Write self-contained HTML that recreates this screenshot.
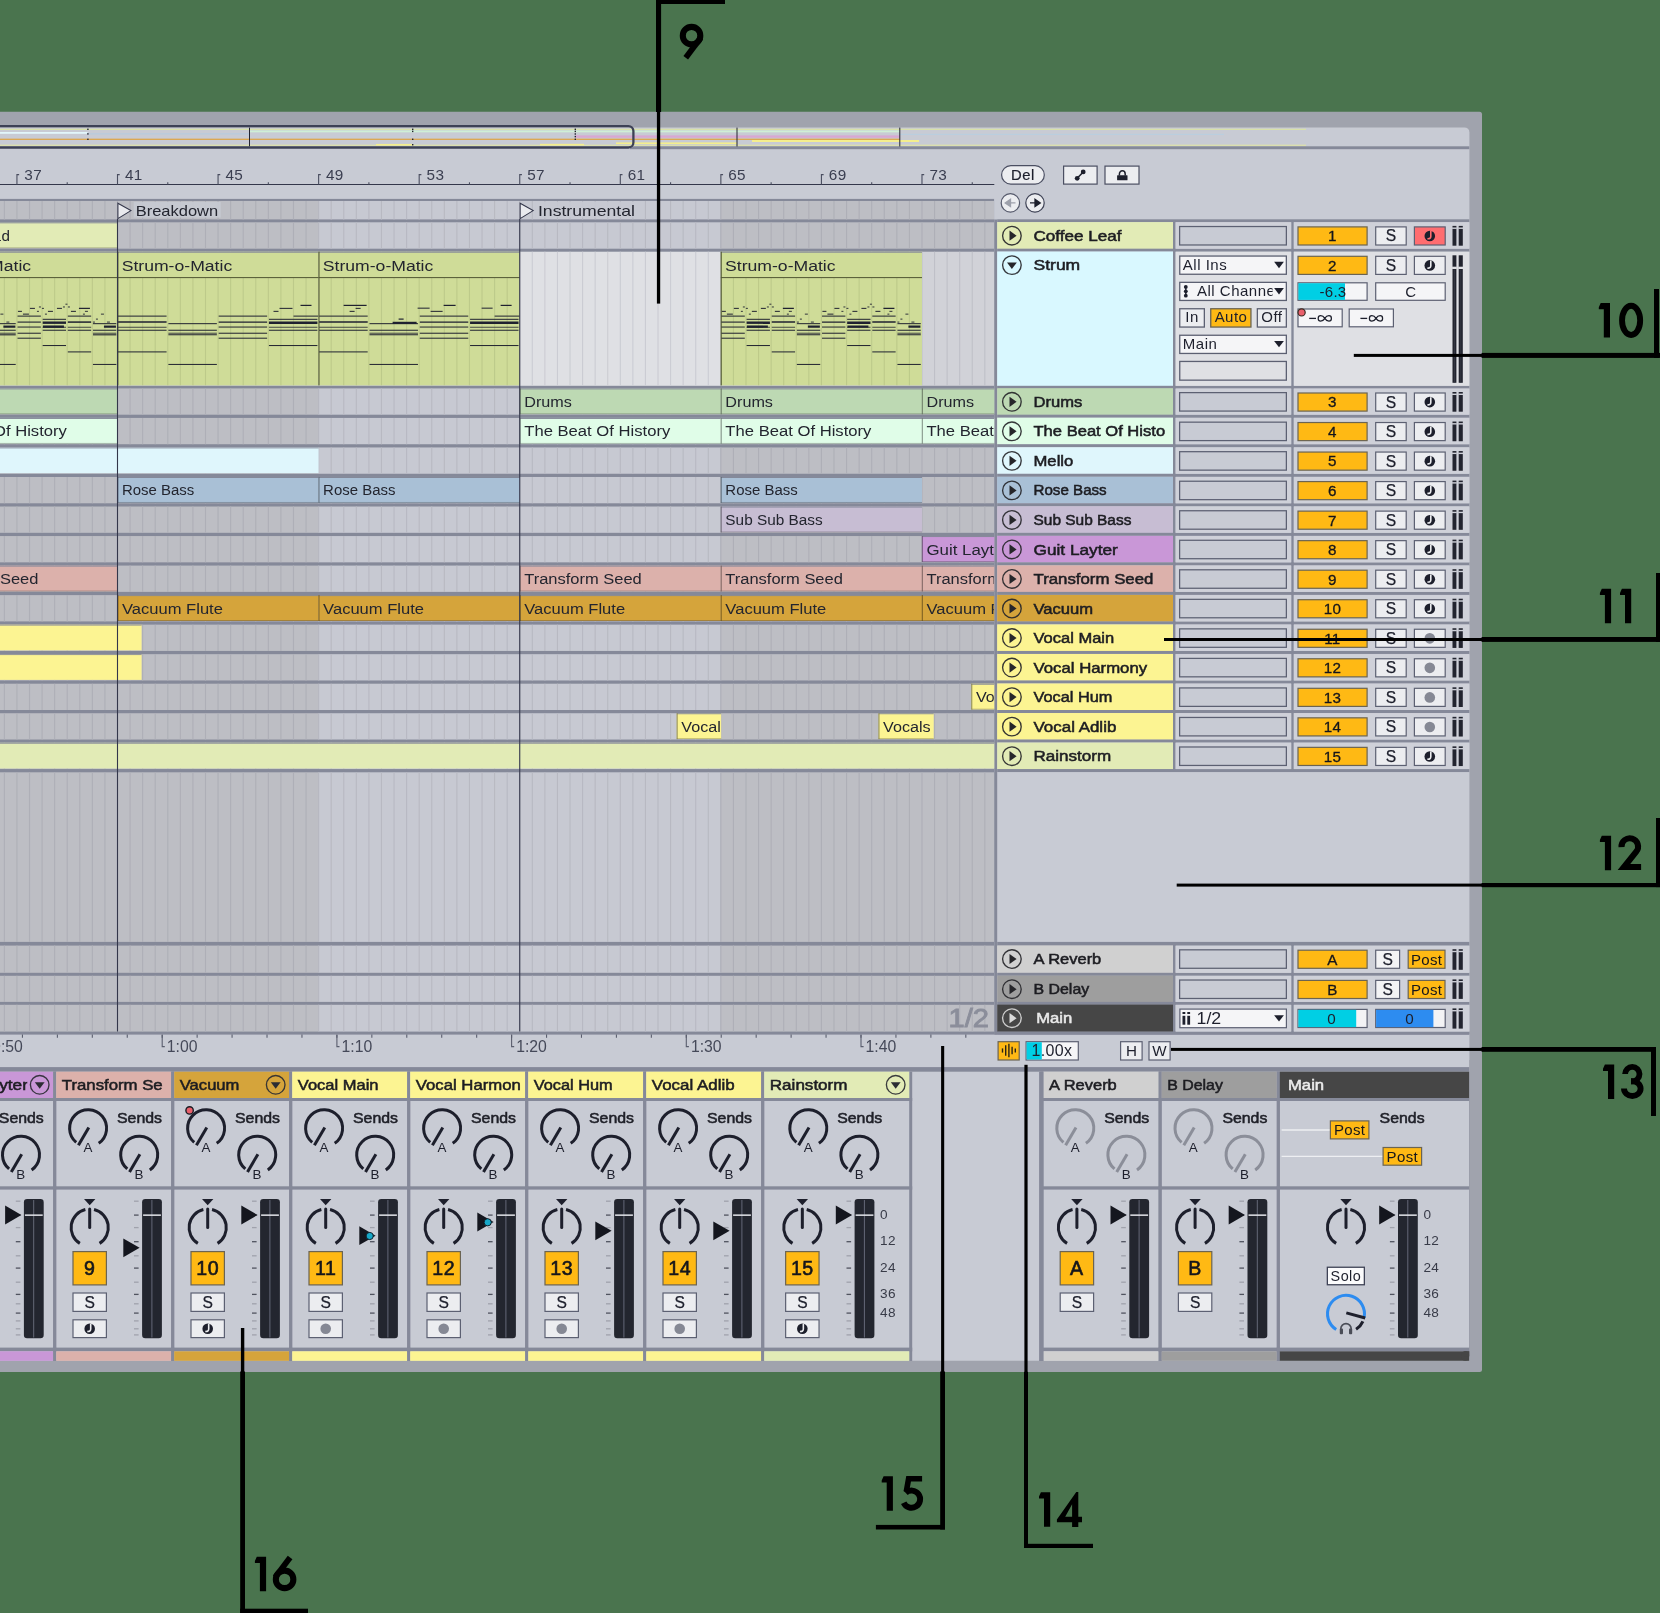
<!DOCTYPE html>
<html><head><meta charset="utf-8"><title>Arrangement View</title>
<style>
html,body{margin:0;padding:0;background:#4a744e;}
body{width:1660px;height:1613px;overflow:hidden;font-family:"Liberation Sans",sans-serif;}
svg{display:block;font-family:"Liberation Sans",sans-serif;will-change:transform;}
text{white-space:pre;}
</style></head><body>
<!-- domain: Computer-Use -->
<svg width="1660" height="1613" viewBox="0 0 1660 1613">
<rect x="0" y="0" width="1660" height="1613" fill="#4a744e"/>
<clipPath id="arrclip"><rect x="0" y="200" width="994.3" height="840"/></clipPath>
<rect x="-10" y="111.7" width="1492" height="1260.2" fill="#a0a3ad" rx="2.5"/>
<rect x="-10" y="127.4" width="1479.4" height="1233.4" fill="#c8cbd4" rx="5"/>
<rect x="0" y="128.75" width="1306" height="1.1" fill="#dbe3a2"/>
<rect x="249.5" y="130.45" width="650.5" height="1.9" fill="#cfefd6"/>
<rect x="0" y="132" width="87.5" height="1.8" fill="#e2f6fb"/>
<rect x="87.5" y="133.45" width="162" height="0.9" fill="#b4cbe0"/>
<rect x="900" y="133.8" width="324" height="1" fill="#b7cfe2"/>
<rect x="575" y="135.4" width="325" height="2.4" fill="#d8a8d2"/>
<rect x="0" y="138.65" width="900" height="1.3" fill="#dda64c"/>
<rect x="752" y="140" width="167" height="2" fill="#f4ee8e"/>
<rect x="0" y="144.7" width="1306" height="1" fill="#e3e7a0"/>
<rect x="376" y="143.95" width="36" height="1.5" fill="#f4ee8e"/>
<rect x="540" y="143.85" width="44" height="1.5" fill="#f4ee8e"/>
<rect x="616" y="142.4" width="121" height="1.6" fill="#f4ee8e"/>
<rect x="630" y="146.3" width="839.3" height="2.9" fill="#858999"/>
<line x1="249.5" y1="127.6" x2="249.5" y2="146.5" stroke="#22242f" stroke-width="1"/>
<line x1="737" y1="127.6" x2="737" y2="146.5" stroke="#22242f" stroke-width="1"/>
<line x1="899.8" y1="127.6" x2="899.8" y2="146.5" stroke="#22242f" stroke-width="1"/>
<rect x="87.2" y="128.6" width="1.4" height="1.4" fill="#22242f"/>
<rect x="87.2" y="133.2" width="1.4" height="1.4" fill="#22242f"/>
<rect x="87.2" y="138.6" width="1.4" height="1.4" fill="#22242f"/>
<rect x="412" y="128.6" width="1.4" height="1.4" fill="#22242f"/>
<rect x="412" y="130.7" width="1.4" height="1.4" fill="#22242f"/>
<rect x="412" y="138.6" width="1.4" height="1.4" fill="#22242f"/>
<rect x="412" y="144" width="1.4" height="1.4" fill="#22242f"/>
<rect x="574.6" y="128.6" width="1.4" height="1.4" fill="#22242f"/>
<rect x="574.6" y="130.7" width="1.4" height="1.4" fill="#22242f"/>
<rect x="574.6" y="133.3" width="1.4" height="1.4" fill="#22242f"/>
<rect x="574.6" y="135.9" width="1.4" height="1.4" fill="#22242f"/>
<rect x="574.6" y="138.6" width="1.4" height="1.4" fill="#22242f"/>
<rect x="-10" y="126.1" width="643.4" height="21.4" fill="none" rx="5" stroke="#3d4155" stroke-width="2.3"/>
<line x1="0" y1="184.5" x2="994.3" y2="184.5" stroke="#33364a" stroke-width="1.1"/>
<path d="M-83.62 184.5V174.6h2.2" fill="none" stroke="#4a4e60" stroke-width="1.1"/>
<line x1="-33.34" y1="182.3" x2="-33.34" y2="184.5" stroke="#4a4e60" stroke-width="1.1"/>
<text x="-76.22" y="179.76" font-size="15.3" fill="#3a3e50" letter-spacing="0.35">33</text>
<path d="M16.94 184.5V174.6h2.2" fill="none" stroke="#4a4e60" stroke-width="1.1"/>
<line x1="67.22" y1="182.3" x2="67.22" y2="184.5" stroke="#4a4e60" stroke-width="1.1"/>
<text x="24.34" y="179.76" font-size="15.3" fill="#3a3e50" letter-spacing="0.35">37</text>
<path d="M117.5 184.5V174.6h2.2" fill="none" stroke="#4a4e60" stroke-width="1.1"/>
<line x1="167.78" y1="182.3" x2="167.78" y2="184.5" stroke="#4a4e60" stroke-width="1.1"/>
<text x="124.9" y="179.76" font-size="15.3" fill="#3a3e50" letter-spacing="0.35">41</text>
<path d="M218.06 184.5V174.6h2.2" fill="none" stroke="#4a4e60" stroke-width="1.1"/>
<line x1="268.34" y1="182.3" x2="268.34" y2="184.5" stroke="#4a4e60" stroke-width="1.1"/>
<text x="225.46" y="179.76" font-size="15.3" fill="#3a3e50" letter-spacing="0.35">45</text>
<path d="M318.62 184.5V174.6h2.2" fill="none" stroke="#4a4e60" stroke-width="1.1"/>
<line x1="368.9" y1="182.3" x2="368.9" y2="184.5" stroke="#4a4e60" stroke-width="1.1"/>
<text x="326.02" y="179.76" font-size="15.3" fill="#3a3e50" letter-spacing="0.35">49</text>
<path d="M419.18 184.5V174.6h2.2" fill="none" stroke="#4a4e60" stroke-width="1.1"/>
<line x1="469.46" y1="182.3" x2="469.46" y2="184.5" stroke="#4a4e60" stroke-width="1.1"/>
<text x="426.58" y="179.76" font-size="15.3" fill="#3a3e50" letter-spacing="0.35">53</text>
<path d="M519.74 184.5V174.6h2.2" fill="none" stroke="#4a4e60" stroke-width="1.1"/>
<line x1="570.02" y1="182.3" x2="570.02" y2="184.5" stroke="#4a4e60" stroke-width="1.1"/>
<text x="527.14" y="179.76" font-size="15.3" fill="#3a3e50" letter-spacing="0.35">57</text>
<path d="M620.3 184.5V174.6h2.2" fill="none" stroke="#4a4e60" stroke-width="1.1"/>
<line x1="670.58" y1="182.3" x2="670.58" y2="184.5" stroke="#4a4e60" stroke-width="1.1"/>
<text x="627.7" y="179.76" font-size="15.3" fill="#3a3e50" letter-spacing="0.35">61</text>
<path d="M720.86 184.5V174.6h2.2" fill="none" stroke="#4a4e60" stroke-width="1.1"/>
<line x1="771.14" y1="182.3" x2="771.14" y2="184.5" stroke="#4a4e60" stroke-width="1.1"/>
<text x="728.26" y="179.76" font-size="15.3" fill="#3a3e50" letter-spacing="0.35">65</text>
<path d="M821.42 184.5V174.6h2.2" fill="none" stroke="#4a4e60" stroke-width="1.1"/>
<line x1="871.7" y1="182.3" x2="871.7" y2="184.5" stroke="#4a4e60" stroke-width="1.1"/>
<text x="828.82" y="179.76" font-size="15.3" fill="#3a3e50" letter-spacing="0.35">69</text>
<path d="M921.98 184.5V174.6h2.2" fill="none" stroke="#4a4e60" stroke-width="1.1"/>
<line x1="972.26" y1="182.3" x2="972.26" y2="184.5" stroke="#4a4e60" stroke-width="1.1"/>
<text x="929.38" y="179.76" font-size="15.3" fill="#3a3e50" letter-spacing="0.35">73</text>
<rect x="0" y="198.9" width="994.3" height="835.7" fill="#858999"/>
<rect x="-5" y="201" width="323.62" height="18.4" fill="#bdbec4"/>
<path d="M4.37 201V219.4M16.94 201V219.4M29.51 201V219.4M42.08 201V219.4M54.65 201V219.4M67.22 201V219.4M79.79 201V219.4M92.36 201V219.4M104.93 201V219.4M117.5 201V219.4M130.07 201V219.4M142.64 201V219.4M155.21 201V219.4M167.78 201V219.4M180.35 201V219.4M192.92 201V219.4M205.49 201V219.4M218.06 201V219.4M230.63 201V219.4M243.2 201V219.4M255.77 201V219.4M268.34 201V219.4M280.91 201V219.4M293.48 201V219.4M306.05 201V219.4" fill="none" stroke="#aeafb7" stroke-width="1.1"/>
<rect x="318.62" y="201" width="402.24" height="18.4" fill="#c7c9d2"/>
<path d="M318.62 201V219.4M331.19 201V219.4M343.76 201V219.4M356.33 201V219.4M368.9 201V219.4M381.47 201V219.4M394.04 201V219.4M406.61 201V219.4M419.18 201V219.4M431.75 201V219.4M444.32 201V219.4M456.89 201V219.4M469.46 201V219.4M482.03 201V219.4M494.6 201V219.4M507.17 201V219.4M519.74 201V219.4M532.31 201V219.4M544.88 201V219.4M557.45 201V219.4M570.02 201V219.4M582.59 201V219.4M595.16 201V219.4M607.73 201V219.4M620.3 201V219.4M632.87 201V219.4M645.44 201V219.4M658.01 201V219.4M670.58 201V219.4M683.15 201V219.4M695.72 201V219.4M708.29 201V219.4" fill="none" stroke="#b8b9c2" stroke-width="1.1"/>
<rect x="720.86" y="201" width="273.44" height="18.4" fill="#bdbec4"/>
<path d="M720.86 201V219.4M733.43 201V219.4M746 201V219.4M758.57 201V219.4M771.14 201V219.4M783.71 201V219.4M796.28 201V219.4M808.85 201V219.4M821.42 201V219.4M833.99 201V219.4M846.56 201V219.4M859.13 201V219.4M871.7 201V219.4M884.27 201V219.4M896.84 201V219.4M909.41 201V219.4M921.98 201V219.4M934.55 201V219.4M947.12 201V219.4M959.69 201V219.4M972.26 201V219.4M984.83 201V219.4" fill="none" stroke="#aeafb7" stroke-width="1.1"/>
<rect x="-5" y="222.3" width="323.62" height="26.4" fill="#bdbec4"/>
<path d="M4.37 222.3V248.7M16.94 222.3V248.7M29.51 222.3V248.7M42.08 222.3V248.7M54.65 222.3V248.7M67.22 222.3V248.7M79.79 222.3V248.7M92.36 222.3V248.7M104.93 222.3V248.7M117.5 222.3V248.7M130.07 222.3V248.7M142.64 222.3V248.7M155.21 222.3V248.7M167.78 222.3V248.7M180.35 222.3V248.7M192.92 222.3V248.7M205.49 222.3V248.7M218.06 222.3V248.7M230.63 222.3V248.7M243.2 222.3V248.7M255.77 222.3V248.7M268.34 222.3V248.7M280.91 222.3V248.7M293.48 222.3V248.7M306.05 222.3V248.7" fill="none" stroke="#aeafb7" stroke-width="1.1"/>
<rect x="318.62" y="222.3" width="402.24" height="26.4" fill="#c7c9d2"/>
<path d="M318.62 222.3V248.7M331.19 222.3V248.7M343.76 222.3V248.7M356.33 222.3V248.7M368.9 222.3V248.7M381.47 222.3V248.7M394.04 222.3V248.7M406.61 222.3V248.7M419.18 222.3V248.7M431.75 222.3V248.7M444.32 222.3V248.7M456.89 222.3V248.7M469.46 222.3V248.7M482.03 222.3V248.7M494.6 222.3V248.7M507.17 222.3V248.7M519.74 222.3V248.7M532.31 222.3V248.7M544.88 222.3V248.7M557.45 222.3V248.7M570.02 222.3V248.7M582.59 222.3V248.7M595.16 222.3V248.7M607.73 222.3V248.7M620.3 222.3V248.7M632.87 222.3V248.7M645.44 222.3V248.7M658.01 222.3V248.7M670.58 222.3V248.7M683.15 222.3V248.7M695.72 222.3V248.7M708.29 222.3V248.7" fill="none" stroke="#b8b9c2" stroke-width="1.1"/>
<rect x="720.86" y="222.3" width="273.44" height="26.4" fill="#bdbec4"/>
<path d="M720.86 222.3V248.7M733.43 222.3V248.7M746 222.3V248.7M758.57 222.3V248.7M771.14 222.3V248.7M783.71 222.3V248.7M796.28 222.3V248.7M808.85 222.3V248.7M821.42 222.3V248.7M833.99 222.3V248.7M846.56 222.3V248.7M859.13 222.3V248.7M871.7 222.3V248.7M884.27 222.3V248.7M896.84 222.3V248.7M909.41 222.3V248.7M921.98 222.3V248.7M934.55 222.3V248.7M947.12 222.3V248.7M959.69 222.3V248.7M972.26 222.3V248.7M984.83 222.3V248.7" fill="none" stroke="#aeafb7" stroke-width="1.1"/>
<rect x="-5" y="251.7" width="524.74" height="134.1" fill="#c7c9d2"/>
<path d="M4.37 251.7V385.8M16.94 251.7V385.8M29.51 251.7V385.8M42.08 251.7V385.8M54.65 251.7V385.8M67.22 251.7V385.8M79.79 251.7V385.8M92.36 251.7V385.8M104.93 251.7V385.8M117.5 251.7V385.8M130.07 251.7V385.8M142.64 251.7V385.8M155.21 251.7V385.8M167.78 251.7V385.8M180.35 251.7V385.8M192.92 251.7V385.8M205.49 251.7V385.8M218.06 251.7V385.8M230.63 251.7V385.8M243.2 251.7V385.8M255.77 251.7V385.8M268.34 251.7V385.8M280.91 251.7V385.8M293.48 251.7V385.8M306.05 251.7V385.8M318.62 251.7V385.8M331.19 251.7V385.8M343.76 251.7V385.8M356.33 251.7V385.8M368.9 251.7V385.8M381.47 251.7V385.8M394.04 251.7V385.8M406.61 251.7V385.8M419.18 251.7V385.8M431.75 251.7V385.8M444.32 251.7V385.8M456.89 251.7V385.8M469.46 251.7V385.8M482.03 251.7V385.8M494.6 251.7V385.8M507.17 251.7V385.8" fill="none" stroke="#b8b9c2" stroke-width="1.1"/>
<rect x="519.74" y="251.7" width="201.12" height="134.1" fill="#dfe0e4"/>
<path d="M519.74 251.7V385.8M532.31 251.7V385.8M544.88 251.7V385.8M557.45 251.7V385.8M570.02 251.7V385.8M582.59 251.7V385.8M595.16 251.7V385.8M607.73 251.7V385.8M620.3 251.7V385.8M632.87 251.7V385.8M645.44 251.7V385.8M658.01 251.7V385.8M670.58 251.7V385.8M683.15 251.7V385.8M695.72 251.7V385.8M708.29 251.7V385.8" fill="none" stroke="#cbccd3" stroke-width="1.1"/>
<rect x="720.86" y="251.7" width="273.44" height="134.1" fill="#d1d2d8"/>
<path d="M720.86 251.7V385.8M733.43 251.7V385.8M746 251.7V385.8M758.57 251.7V385.8M771.14 251.7V385.8M783.71 251.7V385.8M796.28 251.7V385.8M808.85 251.7V385.8M821.42 251.7V385.8M833.99 251.7V385.8M846.56 251.7V385.8M859.13 251.7V385.8M871.7 251.7V385.8M884.27 251.7V385.8M896.84 251.7V385.8M909.41 251.7V385.8M921.98 251.7V385.8M934.55 251.7V385.8M947.12 251.7V385.8M959.69 251.7V385.8M972.26 251.7V385.8M984.83 251.7V385.8" fill="none" stroke="#bfc0c8" stroke-width="1.1"/>
<rect x="-5" y="388.4" width="323.62" height="26.3" fill="#bdbec4"/>
<path d="M4.37 388.4V414.7M16.94 388.4V414.7M29.51 388.4V414.7M42.08 388.4V414.7M54.65 388.4V414.7M67.22 388.4V414.7M79.79 388.4V414.7M92.36 388.4V414.7M104.93 388.4V414.7M117.5 388.4V414.7M130.07 388.4V414.7M142.64 388.4V414.7M155.21 388.4V414.7M167.78 388.4V414.7M180.35 388.4V414.7M192.92 388.4V414.7M205.49 388.4V414.7M218.06 388.4V414.7M230.63 388.4V414.7M243.2 388.4V414.7M255.77 388.4V414.7M268.34 388.4V414.7M280.91 388.4V414.7M293.48 388.4V414.7M306.05 388.4V414.7" fill="none" stroke="#aeafb7" stroke-width="1.1"/>
<rect x="318.62" y="388.4" width="402.24" height="26.3" fill="#c7c9d2"/>
<path d="M318.62 388.4V414.7M331.19 388.4V414.7M343.76 388.4V414.7M356.33 388.4V414.7M368.9 388.4V414.7M381.47 388.4V414.7M394.04 388.4V414.7M406.61 388.4V414.7M419.18 388.4V414.7M431.75 388.4V414.7M444.32 388.4V414.7M456.89 388.4V414.7M469.46 388.4V414.7M482.03 388.4V414.7M494.6 388.4V414.7M507.17 388.4V414.7M519.74 388.4V414.7M532.31 388.4V414.7M544.88 388.4V414.7M557.45 388.4V414.7M570.02 388.4V414.7M582.59 388.4V414.7M595.16 388.4V414.7M607.73 388.4V414.7M620.3 388.4V414.7M632.87 388.4V414.7M645.44 388.4V414.7M658.01 388.4V414.7M670.58 388.4V414.7M683.15 388.4V414.7M695.72 388.4V414.7M708.29 388.4V414.7" fill="none" stroke="#b8b9c2" stroke-width="1.1"/>
<rect x="720.86" y="388.4" width="273.44" height="26.3" fill="#bdbec4"/>
<path d="M720.86 388.4V414.7M733.43 388.4V414.7M746 388.4V414.7M758.57 388.4V414.7M771.14 388.4V414.7M783.71 388.4V414.7M796.28 388.4V414.7M808.85 388.4V414.7M821.42 388.4V414.7M833.99 388.4V414.7M846.56 388.4V414.7M859.13 388.4V414.7M871.7 388.4V414.7M884.27 388.4V414.7M896.84 388.4V414.7M909.41 388.4V414.7M921.98 388.4V414.7M934.55 388.4V414.7M947.12 388.4V414.7M959.69 388.4V414.7M972.26 388.4V414.7M984.83 388.4V414.7" fill="none" stroke="#aeafb7" stroke-width="1.1"/>
<rect x="-5" y="417.93" width="323.62" height="26.3" fill="#bdbec4"/>
<path d="M4.37 417.93V444.23M16.94 417.93V444.23M29.51 417.93V444.23M42.08 417.93V444.23M54.65 417.93V444.23M67.22 417.93V444.23M79.79 417.93V444.23M92.36 417.93V444.23M104.93 417.93V444.23M117.5 417.93V444.23M130.07 417.93V444.23M142.64 417.93V444.23M155.21 417.93V444.23M167.78 417.93V444.23M180.35 417.93V444.23M192.92 417.93V444.23M205.49 417.93V444.23M218.06 417.93V444.23M230.63 417.93V444.23M243.2 417.93V444.23M255.77 417.93V444.23M268.34 417.93V444.23M280.91 417.93V444.23M293.48 417.93V444.23M306.05 417.93V444.23" fill="none" stroke="#aeafb7" stroke-width="1.1"/>
<rect x="318.62" y="417.93" width="402.24" height="26.3" fill="#c7c9d2"/>
<path d="M318.62 417.93V444.23M331.19 417.93V444.23M343.76 417.93V444.23M356.33 417.93V444.23M368.9 417.93V444.23M381.47 417.93V444.23M394.04 417.93V444.23M406.61 417.93V444.23M419.18 417.93V444.23M431.75 417.93V444.23M444.32 417.93V444.23M456.89 417.93V444.23M469.46 417.93V444.23M482.03 417.93V444.23M494.6 417.93V444.23M507.17 417.93V444.23M519.74 417.93V444.23M532.31 417.93V444.23M544.88 417.93V444.23M557.45 417.93V444.23M570.02 417.93V444.23M582.59 417.93V444.23M595.16 417.93V444.23M607.73 417.93V444.23M620.3 417.93V444.23M632.87 417.93V444.23M645.44 417.93V444.23M658.01 417.93V444.23M670.58 417.93V444.23M683.15 417.93V444.23M695.72 417.93V444.23M708.29 417.93V444.23" fill="none" stroke="#b8b9c2" stroke-width="1.1"/>
<rect x="720.86" y="417.93" width="273.44" height="26.3" fill="#bdbec4"/>
<path d="M720.86 417.93V444.23M733.43 417.93V444.23M746 417.93V444.23M758.57 417.93V444.23M771.14 417.93V444.23M783.71 417.93V444.23M796.28 417.93V444.23M808.85 417.93V444.23M821.42 417.93V444.23M833.99 417.93V444.23M846.56 417.93V444.23M859.13 417.93V444.23M871.7 417.93V444.23M884.27 417.93V444.23M896.84 417.93V444.23M909.41 417.93V444.23M921.98 417.93V444.23M934.55 417.93V444.23M947.12 417.93V444.23M959.69 417.93V444.23M972.26 417.93V444.23M984.83 417.93V444.23" fill="none" stroke="#aeafb7" stroke-width="1.1"/>
<rect x="-5" y="447.46" width="323.62" height="26.3" fill="#bdbec4"/>
<path d="M4.37 447.46V473.76M16.94 447.46V473.76M29.51 447.46V473.76M42.08 447.46V473.76M54.65 447.46V473.76M67.22 447.46V473.76M79.79 447.46V473.76M92.36 447.46V473.76M104.93 447.46V473.76M117.5 447.46V473.76M130.07 447.46V473.76M142.64 447.46V473.76M155.21 447.46V473.76M167.78 447.46V473.76M180.35 447.46V473.76M192.92 447.46V473.76M205.49 447.46V473.76M218.06 447.46V473.76M230.63 447.46V473.76M243.2 447.46V473.76M255.77 447.46V473.76M268.34 447.46V473.76M280.91 447.46V473.76M293.48 447.46V473.76M306.05 447.46V473.76" fill="none" stroke="#aeafb7" stroke-width="1.1"/>
<rect x="318.62" y="447.46" width="402.24" height="26.3" fill="#c7c9d2"/>
<path d="M318.62 447.46V473.76M331.19 447.46V473.76M343.76 447.46V473.76M356.33 447.46V473.76M368.9 447.46V473.76M381.47 447.46V473.76M394.04 447.46V473.76M406.61 447.46V473.76M419.18 447.46V473.76M431.75 447.46V473.76M444.32 447.46V473.76M456.89 447.46V473.76M469.46 447.46V473.76M482.03 447.46V473.76M494.6 447.46V473.76M507.17 447.46V473.76M519.74 447.46V473.76M532.31 447.46V473.76M544.88 447.46V473.76M557.45 447.46V473.76M570.02 447.46V473.76M582.59 447.46V473.76M595.16 447.46V473.76M607.73 447.46V473.76M620.3 447.46V473.76M632.87 447.46V473.76M645.44 447.46V473.76M658.01 447.46V473.76M670.58 447.46V473.76M683.15 447.46V473.76M695.72 447.46V473.76M708.29 447.46V473.76" fill="none" stroke="#b8b9c2" stroke-width="1.1"/>
<rect x="720.86" y="447.46" width="273.44" height="26.3" fill="#bdbec4"/>
<path d="M720.86 447.46V473.76M733.43 447.46V473.76M746 447.46V473.76M758.57 447.46V473.76M771.14 447.46V473.76M783.71 447.46V473.76M796.28 447.46V473.76M808.85 447.46V473.76M821.42 447.46V473.76M833.99 447.46V473.76M846.56 447.46V473.76M859.13 447.46V473.76M871.7 447.46V473.76M884.27 447.46V473.76M896.84 447.46V473.76M909.41 447.46V473.76M921.98 447.46V473.76M934.55 447.46V473.76M947.12 447.46V473.76M959.69 447.46V473.76M972.26 447.46V473.76M984.83 447.46V473.76" fill="none" stroke="#aeafb7" stroke-width="1.1"/>
<rect x="-5" y="476.99" width="323.62" height="26.3" fill="#bdbec4"/>
<path d="M4.37 476.99V503.29M16.94 476.99V503.29M29.51 476.99V503.29M42.08 476.99V503.29M54.65 476.99V503.29M67.22 476.99V503.29M79.79 476.99V503.29M92.36 476.99V503.29M104.93 476.99V503.29M117.5 476.99V503.29M130.07 476.99V503.29M142.64 476.99V503.29M155.21 476.99V503.29M167.78 476.99V503.29M180.35 476.99V503.29M192.92 476.99V503.29M205.49 476.99V503.29M218.06 476.99V503.29M230.63 476.99V503.29M243.2 476.99V503.29M255.77 476.99V503.29M268.34 476.99V503.29M280.91 476.99V503.29M293.48 476.99V503.29M306.05 476.99V503.29" fill="none" stroke="#aeafb7" stroke-width="1.1"/>
<rect x="318.62" y="476.99" width="402.24" height="26.3" fill="#c7c9d2"/>
<path d="M318.62 476.99V503.29M331.19 476.99V503.29M343.76 476.99V503.29M356.33 476.99V503.29M368.9 476.99V503.29M381.47 476.99V503.29M394.04 476.99V503.29M406.61 476.99V503.29M419.18 476.99V503.29M431.75 476.99V503.29M444.32 476.99V503.29M456.89 476.99V503.29M469.46 476.99V503.29M482.03 476.99V503.29M494.6 476.99V503.29M507.17 476.99V503.29M519.74 476.99V503.29M532.31 476.99V503.29M544.88 476.99V503.29M557.45 476.99V503.29M570.02 476.99V503.29M582.59 476.99V503.29M595.16 476.99V503.29M607.73 476.99V503.29M620.3 476.99V503.29M632.87 476.99V503.29M645.44 476.99V503.29M658.01 476.99V503.29M670.58 476.99V503.29M683.15 476.99V503.29M695.72 476.99V503.29M708.29 476.99V503.29" fill="none" stroke="#b8b9c2" stroke-width="1.1"/>
<rect x="720.86" y="476.99" width="273.44" height="26.3" fill="#bdbec4"/>
<path d="M720.86 476.99V503.29M733.43 476.99V503.29M746 476.99V503.29M758.57 476.99V503.29M771.14 476.99V503.29M783.71 476.99V503.29M796.28 476.99V503.29M808.85 476.99V503.29M821.42 476.99V503.29M833.99 476.99V503.29M846.56 476.99V503.29M859.13 476.99V503.29M871.7 476.99V503.29M884.27 476.99V503.29M896.84 476.99V503.29M909.41 476.99V503.29M921.98 476.99V503.29M934.55 476.99V503.29M947.12 476.99V503.29M959.69 476.99V503.29M972.26 476.99V503.29M984.83 476.99V503.29" fill="none" stroke="#aeafb7" stroke-width="1.1"/>
<rect x="-5" y="506.52" width="323.62" height="26.3" fill="#bdbec4"/>
<path d="M4.37 506.52V532.82M16.94 506.52V532.82M29.51 506.52V532.82M42.08 506.52V532.82M54.65 506.52V532.82M67.22 506.52V532.82M79.79 506.52V532.82M92.36 506.52V532.82M104.93 506.52V532.82M117.5 506.52V532.82M130.07 506.52V532.82M142.64 506.52V532.82M155.21 506.52V532.82M167.78 506.52V532.82M180.35 506.52V532.82M192.92 506.52V532.82M205.49 506.52V532.82M218.06 506.52V532.82M230.63 506.52V532.82M243.2 506.52V532.82M255.77 506.52V532.82M268.34 506.52V532.82M280.91 506.52V532.82M293.48 506.52V532.82M306.05 506.52V532.82" fill="none" stroke="#aeafb7" stroke-width="1.1"/>
<rect x="318.62" y="506.52" width="402.24" height="26.3" fill="#c7c9d2"/>
<path d="M318.62 506.52V532.82M331.19 506.52V532.82M343.76 506.52V532.82M356.33 506.52V532.82M368.9 506.52V532.82M381.47 506.52V532.82M394.04 506.52V532.82M406.61 506.52V532.82M419.18 506.52V532.82M431.75 506.52V532.82M444.32 506.52V532.82M456.89 506.52V532.82M469.46 506.52V532.82M482.03 506.52V532.82M494.6 506.52V532.82M507.17 506.52V532.82M519.74 506.52V532.82M532.31 506.52V532.82M544.88 506.52V532.82M557.45 506.52V532.82M570.02 506.52V532.82M582.59 506.52V532.82M595.16 506.52V532.82M607.73 506.52V532.82M620.3 506.52V532.82M632.87 506.52V532.82M645.44 506.52V532.82M658.01 506.52V532.82M670.58 506.52V532.82M683.15 506.52V532.82M695.72 506.52V532.82M708.29 506.52V532.82" fill="none" stroke="#b8b9c2" stroke-width="1.1"/>
<rect x="720.86" y="506.52" width="273.44" height="26.3" fill="#bdbec4"/>
<path d="M720.86 506.52V532.82M733.43 506.52V532.82M746 506.52V532.82M758.57 506.52V532.82M771.14 506.52V532.82M783.71 506.52V532.82M796.28 506.52V532.82M808.85 506.52V532.82M821.42 506.52V532.82M833.99 506.52V532.82M846.56 506.52V532.82M859.13 506.52V532.82M871.7 506.52V532.82M884.27 506.52V532.82M896.84 506.52V532.82M909.41 506.52V532.82M921.98 506.52V532.82M934.55 506.52V532.82M947.12 506.52V532.82M959.69 506.52V532.82M972.26 506.52V532.82M984.83 506.52V532.82" fill="none" stroke="#aeafb7" stroke-width="1.1"/>
<rect x="-5" y="536.05" width="323.62" height="26.3" fill="#bdbec4"/>
<path d="M4.37 536.05V562.35M16.94 536.05V562.35M29.51 536.05V562.35M42.08 536.05V562.35M54.65 536.05V562.35M67.22 536.05V562.35M79.79 536.05V562.35M92.36 536.05V562.35M104.93 536.05V562.35M117.5 536.05V562.35M130.07 536.05V562.35M142.64 536.05V562.35M155.21 536.05V562.35M167.78 536.05V562.35M180.35 536.05V562.35M192.92 536.05V562.35M205.49 536.05V562.35M218.06 536.05V562.35M230.63 536.05V562.35M243.2 536.05V562.35M255.77 536.05V562.35M268.34 536.05V562.35M280.91 536.05V562.35M293.48 536.05V562.35M306.05 536.05V562.35" fill="none" stroke="#aeafb7" stroke-width="1.1"/>
<rect x="318.62" y="536.05" width="402.24" height="26.3" fill="#c7c9d2"/>
<path d="M318.62 536.05V562.35M331.19 536.05V562.35M343.76 536.05V562.35M356.33 536.05V562.35M368.9 536.05V562.35M381.47 536.05V562.35M394.04 536.05V562.35M406.61 536.05V562.35M419.18 536.05V562.35M431.75 536.05V562.35M444.32 536.05V562.35M456.89 536.05V562.35M469.46 536.05V562.35M482.03 536.05V562.35M494.6 536.05V562.35M507.17 536.05V562.35M519.74 536.05V562.35M532.31 536.05V562.35M544.88 536.05V562.35M557.45 536.05V562.35M570.02 536.05V562.35M582.59 536.05V562.35M595.16 536.05V562.35M607.73 536.05V562.35M620.3 536.05V562.35M632.87 536.05V562.35M645.44 536.05V562.35M658.01 536.05V562.35M670.58 536.05V562.35M683.15 536.05V562.35M695.72 536.05V562.35M708.29 536.05V562.35" fill="none" stroke="#b8b9c2" stroke-width="1.1"/>
<rect x="720.86" y="536.05" width="273.44" height="26.3" fill="#bdbec4"/>
<path d="M720.86 536.05V562.35M733.43 536.05V562.35M746 536.05V562.35M758.57 536.05V562.35M771.14 536.05V562.35M783.71 536.05V562.35M796.28 536.05V562.35M808.85 536.05V562.35M821.42 536.05V562.35M833.99 536.05V562.35M846.56 536.05V562.35M859.13 536.05V562.35M871.7 536.05V562.35M884.27 536.05V562.35M896.84 536.05V562.35M909.41 536.05V562.35M921.98 536.05V562.35M934.55 536.05V562.35M947.12 536.05V562.35M959.69 536.05V562.35M972.26 536.05V562.35M984.83 536.05V562.35" fill="none" stroke="#aeafb7" stroke-width="1.1"/>
<rect x="-5" y="565.58" width="323.62" height="26.3" fill="#bdbec4"/>
<path d="M4.37 565.58V591.88M16.94 565.58V591.88M29.51 565.58V591.88M42.08 565.58V591.88M54.65 565.58V591.88M67.22 565.58V591.88M79.79 565.58V591.88M92.36 565.58V591.88M104.93 565.58V591.88M117.5 565.58V591.88M130.07 565.58V591.88M142.64 565.58V591.88M155.21 565.58V591.88M167.78 565.58V591.88M180.35 565.58V591.88M192.92 565.58V591.88M205.49 565.58V591.88M218.06 565.58V591.88M230.63 565.58V591.88M243.2 565.58V591.88M255.77 565.58V591.88M268.34 565.58V591.88M280.91 565.58V591.88M293.48 565.58V591.88M306.05 565.58V591.88" fill="none" stroke="#aeafb7" stroke-width="1.1"/>
<rect x="318.62" y="565.58" width="402.24" height="26.3" fill="#c7c9d2"/>
<path d="M318.62 565.58V591.88M331.19 565.58V591.88M343.76 565.58V591.88M356.33 565.58V591.88M368.9 565.58V591.88M381.47 565.58V591.88M394.04 565.58V591.88M406.61 565.58V591.88M419.18 565.58V591.88M431.75 565.58V591.88M444.32 565.58V591.88M456.89 565.58V591.88M469.46 565.58V591.88M482.03 565.58V591.88M494.6 565.58V591.88M507.17 565.58V591.88M519.74 565.58V591.88M532.31 565.58V591.88M544.88 565.58V591.88M557.45 565.58V591.88M570.02 565.58V591.88M582.59 565.58V591.88M595.16 565.58V591.88M607.73 565.58V591.88M620.3 565.58V591.88M632.87 565.58V591.88M645.44 565.58V591.88M658.01 565.58V591.88M670.58 565.58V591.88M683.15 565.58V591.88M695.72 565.58V591.88M708.29 565.58V591.88" fill="none" stroke="#b8b9c2" stroke-width="1.1"/>
<rect x="720.86" y="565.58" width="273.44" height="26.3" fill="#bdbec4"/>
<path d="M720.86 565.58V591.88M733.43 565.58V591.88M746 565.58V591.88M758.57 565.58V591.88M771.14 565.58V591.88M783.71 565.58V591.88M796.28 565.58V591.88M808.85 565.58V591.88M821.42 565.58V591.88M833.99 565.58V591.88M846.56 565.58V591.88M859.13 565.58V591.88M871.7 565.58V591.88M884.27 565.58V591.88M896.84 565.58V591.88M909.41 565.58V591.88M921.98 565.58V591.88M934.55 565.58V591.88M947.12 565.58V591.88M959.69 565.58V591.88M972.26 565.58V591.88M984.83 565.58V591.88" fill="none" stroke="#aeafb7" stroke-width="1.1"/>
<rect x="-5" y="595.11" width="323.62" height="26.3" fill="#bdbec4"/>
<path d="M4.37 595.11V621.41M16.94 595.11V621.41M29.51 595.11V621.41M42.08 595.11V621.41M54.65 595.11V621.41M67.22 595.11V621.41M79.79 595.11V621.41M92.36 595.11V621.41M104.93 595.11V621.41M117.5 595.11V621.41M130.07 595.11V621.41M142.64 595.11V621.41M155.21 595.11V621.41M167.78 595.11V621.41M180.35 595.11V621.41M192.92 595.11V621.41M205.49 595.11V621.41M218.06 595.11V621.41M230.63 595.11V621.41M243.2 595.11V621.41M255.77 595.11V621.41M268.34 595.11V621.41M280.91 595.11V621.41M293.48 595.11V621.41M306.05 595.11V621.41" fill="none" stroke="#aeafb7" stroke-width="1.1"/>
<rect x="318.62" y="595.11" width="402.24" height="26.3" fill="#c7c9d2"/>
<path d="M318.62 595.11V621.41M331.19 595.11V621.41M343.76 595.11V621.41M356.33 595.11V621.41M368.9 595.11V621.41M381.47 595.11V621.41M394.04 595.11V621.41M406.61 595.11V621.41M419.18 595.11V621.41M431.75 595.11V621.41M444.32 595.11V621.41M456.89 595.11V621.41M469.46 595.11V621.41M482.03 595.11V621.41M494.6 595.11V621.41M507.17 595.11V621.41M519.74 595.11V621.41M532.31 595.11V621.41M544.88 595.11V621.41M557.45 595.11V621.41M570.02 595.11V621.41M582.59 595.11V621.41M595.16 595.11V621.41M607.73 595.11V621.41M620.3 595.11V621.41M632.87 595.11V621.41M645.44 595.11V621.41M658.01 595.11V621.41M670.58 595.11V621.41M683.15 595.11V621.41M695.72 595.11V621.41M708.29 595.11V621.41" fill="none" stroke="#b8b9c2" stroke-width="1.1"/>
<rect x="720.86" y="595.11" width="273.44" height="26.3" fill="#bdbec4"/>
<path d="M720.86 595.11V621.41M733.43 595.11V621.41M746 595.11V621.41M758.57 595.11V621.41M771.14 595.11V621.41M783.71 595.11V621.41M796.28 595.11V621.41M808.85 595.11V621.41M821.42 595.11V621.41M833.99 595.11V621.41M846.56 595.11V621.41M859.13 595.11V621.41M871.7 595.11V621.41M884.27 595.11V621.41M896.84 595.11V621.41M909.41 595.11V621.41M921.98 595.11V621.41M934.55 595.11V621.41M947.12 595.11V621.41M959.69 595.11V621.41M972.26 595.11V621.41M984.83 595.11V621.41" fill="none" stroke="#aeafb7" stroke-width="1.1"/>
<rect x="-5" y="624.64" width="323.62" height="26.3" fill="#bdbec4"/>
<path d="M4.37 624.64V650.94M16.94 624.64V650.94M29.51 624.64V650.94M42.08 624.64V650.94M54.65 624.64V650.94M67.22 624.64V650.94M79.79 624.64V650.94M92.36 624.64V650.94M104.93 624.64V650.94M117.5 624.64V650.94M130.07 624.64V650.94M142.64 624.64V650.94M155.21 624.64V650.94M167.78 624.64V650.94M180.35 624.64V650.94M192.92 624.64V650.94M205.49 624.64V650.94M218.06 624.64V650.94M230.63 624.64V650.94M243.2 624.64V650.94M255.77 624.64V650.94M268.34 624.64V650.94M280.91 624.64V650.94M293.48 624.64V650.94M306.05 624.64V650.94" fill="none" stroke="#aeafb7" stroke-width="1.1"/>
<rect x="318.62" y="624.64" width="402.24" height="26.3" fill="#c7c9d2"/>
<path d="M318.62 624.64V650.94M331.19 624.64V650.94M343.76 624.64V650.94M356.33 624.64V650.94M368.9 624.64V650.94M381.47 624.64V650.94M394.04 624.64V650.94M406.61 624.64V650.94M419.18 624.64V650.94M431.75 624.64V650.94M444.32 624.64V650.94M456.89 624.64V650.94M469.46 624.64V650.94M482.03 624.64V650.94M494.6 624.64V650.94M507.17 624.64V650.94M519.74 624.64V650.94M532.31 624.64V650.94M544.88 624.64V650.94M557.45 624.64V650.94M570.02 624.64V650.94M582.59 624.64V650.94M595.16 624.64V650.94M607.73 624.64V650.94M620.3 624.64V650.94M632.87 624.64V650.94M645.44 624.64V650.94M658.01 624.64V650.94M670.58 624.64V650.94M683.15 624.64V650.94M695.72 624.64V650.94M708.29 624.64V650.94" fill="none" stroke="#b8b9c2" stroke-width="1.1"/>
<rect x="720.86" y="624.64" width="273.44" height="26.3" fill="#bdbec4"/>
<path d="M720.86 624.64V650.94M733.43 624.64V650.94M746 624.64V650.94M758.57 624.64V650.94M771.14 624.64V650.94M783.71 624.64V650.94M796.28 624.64V650.94M808.85 624.64V650.94M821.42 624.64V650.94M833.99 624.64V650.94M846.56 624.64V650.94M859.13 624.64V650.94M871.7 624.64V650.94M884.27 624.64V650.94M896.84 624.64V650.94M909.41 624.64V650.94M921.98 624.64V650.94M934.55 624.64V650.94M947.12 624.64V650.94M959.69 624.64V650.94M972.26 624.64V650.94M984.83 624.64V650.94" fill="none" stroke="#aeafb7" stroke-width="1.1"/>
<rect x="-5" y="654.17" width="323.62" height="26.3" fill="#bdbec4"/>
<path d="M4.37 654.17V680.47M16.94 654.17V680.47M29.51 654.17V680.47M42.08 654.17V680.47M54.65 654.17V680.47M67.22 654.17V680.47M79.79 654.17V680.47M92.36 654.17V680.47M104.93 654.17V680.47M117.5 654.17V680.47M130.07 654.17V680.47M142.64 654.17V680.47M155.21 654.17V680.47M167.78 654.17V680.47M180.35 654.17V680.47M192.92 654.17V680.47M205.49 654.17V680.47M218.06 654.17V680.47M230.63 654.17V680.47M243.2 654.17V680.47M255.77 654.17V680.47M268.34 654.17V680.47M280.91 654.17V680.47M293.48 654.17V680.47M306.05 654.17V680.47" fill="none" stroke="#aeafb7" stroke-width="1.1"/>
<rect x="318.62" y="654.17" width="402.24" height="26.3" fill="#c7c9d2"/>
<path d="M318.62 654.17V680.47M331.19 654.17V680.47M343.76 654.17V680.47M356.33 654.17V680.47M368.9 654.17V680.47M381.47 654.17V680.47M394.04 654.17V680.47M406.61 654.17V680.47M419.18 654.17V680.47M431.75 654.17V680.47M444.32 654.17V680.47M456.89 654.17V680.47M469.46 654.17V680.47M482.03 654.17V680.47M494.6 654.17V680.47M507.17 654.17V680.47M519.74 654.17V680.47M532.31 654.17V680.47M544.88 654.17V680.47M557.45 654.17V680.47M570.02 654.17V680.47M582.59 654.17V680.47M595.16 654.17V680.47M607.73 654.17V680.47M620.3 654.17V680.47M632.87 654.17V680.47M645.44 654.17V680.47M658.01 654.17V680.47M670.58 654.17V680.47M683.15 654.17V680.47M695.72 654.17V680.47M708.29 654.17V680.47" fill="none" stroke="#b8b9c2" stroke-width="1.1"/>
<rect x="720.86" y="654.17" width="273.44" height="26.3" fill="#bdbec4"/>
<path d="M720.86 654.17V680.47M733.43 654.17V680.47M746 654.17V680.47M758.57 654.17V680.47M771.14 654.17V680.47M783.71 654.17V680.47M796.28 654.17V680.47M808.85 654.17V680.47M821.42 654.17V680.47M833.99 654.17V680.47M846.56 654.17V680.47M859.13 654.17V680.47M871.7 654.17V680.47M884.27 654.17V680.47M896.84 654.17V680.47M909.41 654.17V680.47M921.98 654.17V680.47M934.55 654.17V680.47M947.12 654.17V680.47M959.69 654.17V680.47M972.26 654.17V680.47M984.83 654.17V680.47" fill="none" stroke="#aeafb7" stroke-width="1.1"/>
<rect x="-5" y="683.7" width="323.62" height="26.3" fill="#bdbec4"/>
<path d="M4.37 683.7V710M16.94 683.7V710M29.51 683.7V710M42.08 683.7V710M54.65 683.7V710M67.22 683.7V710M79.79 683.7V710M92.36 683.7V710M104.93 683.7V710M117.5 683.7V710M130.07 683.7V710M142.64 683.7V710M155.21 683.7V710M167.78 683.7V710M180.35 683.7V710M192.92 683.7V710M205.49 683.7V710M218.06 683.7V710M230.63 683.7V710M243.2 683.7V710M255.77 683.7V710M268.34 683.7V710M280.91 683.7V710M293.48 683.7V710M306.05 683.7V710" fill="none" stroke="#aeafb7" stroke-width="1.1"/>
<rect x="318.62" y="683.7" width="402.24" height="26.3" fill="#c7c9d2"/>
<path d="M318.62 683.7V710M331.19 683.7V710M343.76 683.7V710M356.33 683.7V710M368.9 683.7V710M381.47 683.7V710M394.04 683.7V710M406.61 683.7V710M419.18 683.7V710M431.75 683.7V710M444.32 683.7V710M456.89 683.7V710M469.46 683.7V710M482.03 683.7V710M494.6 683.7V710M507.17 683.7V710M519.74 683.7V710M532.31 683.7V710M544.88 683.7V710M557.45 683.7V710M570.02 683.7V710M582.59 683.7V710M595.16 683.7V710M607.73 683.7V710M620.3 683.7V710M632.87 683.7V710M645.44 683.7V710M658.01 683.7V710M670.58 683.7V710M683.15 683.7V710M695.72 683.7V710M708.29 683.7V710" fill="none" stroke="#b8b9c2" stroke-width="1.1"/>
<rect x="720.86" y="683.7" width="273.44" height="26.3" fill="#bdbec4"/>
<path d="M720.86 683.7V710M733.43 683.7V710M746 683.7V710M758.57 683.7V710M771.14 683.7V710M783.71 683.7V710M796.28 683.7V710M808.85 683.7V710M821.42 683.7V710M833.99 683.7V710M846.56 683.7V710M859.13 683.7V710M871.7 683.7V710M884.27 683.7V710M896.84 683.7V710M909.41 683.7V710M921.98 683.7V710M934.55 683.7V710M947.12 683.7V710M959.69 683.7V710M972.26 683.7V710M984.83 683.7V710" fill="none" stroke="#aeafb7" stroke-width="1.1"/>
<rect x="-5" y="713.23" width="323.62" height="26.3" fill="#bdbec4"/>
<path d="M4.37 713.23V739.53M16.94 713.23V739.53M29.51 713.23V739.53M42.08 713.23V739.53M54.65 713.23V739.53M67.22 713.23V739.53M79.79 713.23V739.53M92.36 713.23V739.53M104.93 713.23V739.53M117.5 713.23V739.53M130.07 713.23V739.53M142.64 713.23V739.53M155.21 713.23V739.53M167.78 713.23V739.53M180.35 713.23V739.53M192.92 713.23V739.53M205.49 713.23V739.53M218.06 713.23V739.53M230.63 713.23V739.53M243.2 713.23V739.53M255.77 713.23V739.53M268.34 713.23V739.53M280.91 713.23V739.53M293.48 713.23V739.53M306.05 713.23V739.53" fill="none" stroke="#aeafb7" stroke-width="1.1"/>
<rect x="318.62" y="713.23" width="402.24" height="26.3" fill="#c7c9d2"/>
<path d="M318.62 713.23V739.53M331.19 713.23V739.53M343.76 713.23V739.53M356.33 713.23V739.53M368.9 713.23V739.53M381.47 713.23V739.53M394.04 713.23V739.53M406.61 713.23V739.53M419.18 713.23V739.53M431.75 713.23V739.53M444.32 713.23V739.53M456.89 713.23V739.53M469.46 713.23V739.53M482.03 713.23V739.53M494.6 713.23V739.53M507.17 713.23V739.53M519.74 713.23V739.53M532.31 713.23V739.53M544.88 713.23V739.53M557.45 713.23V739.53M570.02 713.23V739.53M582.59 713.23V739.53M595.16 713.23V739.53M607.73 713.23V739.53M620.3 713.23V739.53M632.87 713.23V739.53M645.44 713.23V739.53M658.01 713.23V739.53M670.58 713.23V739.53M683.15 713.23V739.53M695.72 713.23V739.53M708.29 713.23V739.53" fill="none" stroke="#b8b9c2" stroke-width="1.1"/>
<rect x="720.86" y="713.23" width="273.44" height="26.3" fill="#bdbec4"/>
<path d="M720.86 713.23V739.53M733.43 713.23V739.53M746 713.23V739.53M758.57 713.23V739.53M771.14 713.23V739.53M783.71 713.23V739.53M796.28 713.23V739.53M808.85 713.23V739.53M821.42 713.23V739.53M833.99 713.23V739.53M846.56 713.23V739.53M859.13 713.23V739.53M871.7 713.23V739.53M884.27 713.23V739.53M896.84 713.23V739.53M909.41 713.23V739.53M921.98 713.23V739.53M934.55 713.23V739.53M947.12 713.23V739.53M959.69 713.23V739.53M972.26 713.23V739.53M984.83 713.23V739.53" fill="none" stroke="#aeafb7" stroke-width="1.1"/>
<rect x="-5" y="742.76" width="323.62" height="26.3" fill="#bdbec4"/>
<path d="M4.37 742.76V769.06M16.94 742.76V769.06M29.51 742.76V769.06M42.08 742.76V769.06M54.65 742.76V769.06M67.22 742.76V769.06M79.79 742.76V769.06M92.36 742.76V769.06M104.93 742.76V769.06M117.5 742.76V769.06M130.07 742.76V769.06M142.64 742.76V769.06M155.21 742.76V769.06M167.78 742.76V769.06M180.35 742.76V769.06M192.92 742.76V769.06M205.49 742.76V769.06M218.06 742.76V769.06M230.63 742.76V769.06M243.2 742.76V769.06M255.77 742.76V769.06M268.34 742.76V769.06M280.91 742.76V769.06M293.48 742.76V769.06M306.05 742.76V769.06" fill="none" stroke="#aeafb7" stroke-width="1.1"/>
<rect x="318.62" y="742.76" width="402.24" height="26.3" fill="#c7c9d2"/>
<path d="M318.62 742.76V769.06M331.19 742.76V769.06M343.76 742.76V769.06M356.33 742.76V769.06M368.9 742.76V769.06M381.47 742.76V769.06M394.04 742.76V769.06M406.61 742.76V769.06M419.18 742.76V769.06M431.75 742.76V769.06M444.32 742.76V769.06M456.89 742.76V769.06M469.46 742.76V769.06M482.03 742.76V769.06M494.6 742.76V769.06M507.17 742.76V769.06M519.74 742.76V769.06M532.31 742.76V769.06M544.88 742.76V769.06M557.45 742.76V769.06M570.02 742.76V769.06M582.59 742.76V769.06M595.16 742.76V769.06M607.73 742.76V769.06M620.3 742.76V769.06M632.87 742.76V769.06M645.44 742.76V769.06M658.01 742.76V769.06M670.58 742.76V769.06M683.15 742.76V769.06M695.72 742.76V769.06M708.29 742.76V769.06" fill="none" stroke="#b8b9c2" stroke-width="1.1"/>
<rect x="720.86" y="742.76" width="273.44" height="26.3" fill="#bdbec4"/>
<path d="M720.86 742.76V769.06M733.43 742.76V769.06M746 742.76V769.06M758.57 742.76V769.06M771.14 742.76V769.06M783.71 742.76V769.06M796.28 742.76V769.06M808.85 742.76V769.06M821.42 742.76V769.06M833.99 742.76V769.06M846.56 742.76V769.06M859.13 742.76V769.06M871.7 742.76V769.06M884.27 742.76V769.06M896.84 742.76V769.06M909.41 742.76V769.06M921.98 742.76V769.06M934.55 742.76V769.06M947.12 742.76V769.06M959.69 742.76V769.06M972.26 742.76V769.06M984.83 742.76V769.06" fill="none" stroke="#aeafb7" stroke-width="1.1"/>
<rect x="-5" y="772.3" width="323.62" height="169.6" fill="#bdbec4"/>
<path d="M4.37 772.3V941.9M16.94 772.3V941.9M29.51 772.3V941.9M42.08 772.3V941.9M54.65 772.3V941.9M67.22 772.3V941.9M79.79 772.3V941.9M92.36 772.3V941.9M104.93 772.3V941.9M117.5 772.3V941.9M130.07 772.3V941.9M142.64 772.3V941.9M155.21 772.3V941.9M167.78 772.3V941.9M180.35 772.3V941.9M192.92 772.3V941.9M205.49 772.3V941.9M218.06 772.3V941.9M230.63 772.3V941.9M243.2 772.3V941.9M255.77 772.3V941.9M268.34 772.3V941.9M280.91 772.3V941.9M293.48 772.3V941.9M306.05 772.3V941.9" fill="none" stroke="#aeafb7" stroke-width="1.1"/>
<rect x="318.62" y="772.3" width="402.24" height="169.6" fill="#c7c9d2"/>
<path d="M318.62 772.3V941.9M331.19 772.3V941.9M343.76 772.3V941.9M356.33 772.3V941.9M368.9 772.3V941.9M381.47 772.3V941.9M394.04 772.3V941.9M406.61 772.3V941.9M419.18 772.3V941.9M431.75 772.3V941.9M444.32 772.3V941.9M456.89 772.3V941.9M469.46 772.3V941.9M482.03 772.3V941.9M494.6 772.3V941.9M507.17 772.3V941.9M519.74 772.3V941.9M532.31 772.3V941.9M544.88 772.3V941.9M557.45 772.3V941.9M570.02 772.3V941.9M582.59 772.3V941.9M595.16 772.3V941.9M607.73 772.3V941.9M620.3 772.3V941.9M632.87 772.3V941.9M645.44 772.3V941.9M658.01 772.3V941.9M670.58 772.3V941.9M683.15 772.3V941.9M695.72 772.3V941.9M708.29 772.3V941.9" fill="none" stroke="#b8b9c2" stroke-width="1.1"/>
<rect x="720.86" y="772.3" width="273.44" height="169.6" fill="#bdbec4"/>
<path d="M720.86 772.3V941.9M733.43 772.3V941.9M746 772.3V941.9M758.57 772.3V941.9M771.14 772.3V941.9M783.71 772.3V941.9M796.28 772.3V941.9M808.85 772.3V941.9M821.42 772.3V941.9M833.99 772.3V941.9M846.56 772.3V941.9M859.13 772.3V941.9M871.7 772.3V941.9M884.27 772.3V941.9M896.84 772.3V941.9M909.41 772.3V941.9M921.98 772.3V941.9M934.55 772.3V941.9M947.12 772.3V941.9M959.69 772.3V941.9M972.26 772.3V941.9M984.83 772.3V941.9" fill="none" stroke="#aeafb7" stroke-width="1.1"/>
<rect x="-5" y="945.6" width="323.62" height="27.2" fill="#bdbec4"/>
<path d="M4.37 945.6V972.8M16.94 945.6V972.8M29.51 945.6V972.8M42.08 945.6V972.8M54.65 945.6V972.8M67.22 945.6V972.8M79.79 945.6V972.8M92.36 945.6V972.8M104.93 945.6V972.8M117.5 945.6V972.8M130.07 945.6V972.8M142.64 945.6V972.8M155.21 945.6V972.8M167.78 945.6V972.8M180.35 945.6V972.8M192.92 945.6V972.8M205.49 945.6V972.8M218.06 945.6V972.8M230.63 945.6V972.8M243.2 945.6V972.8M255.77 945.6V972.8M268.34 945.6V972.8M280.91 945.6V972.8M293.48 945.6V972.8M306.05 945.6V972.8" fill="none" stroke="#aeafb7" stroke-width="1.1"/>
<rect x="318.62" y="945.6" width="402.24" height="27.2" fill="#c7c9d2"/>
<path d="M318.62 945.6V972.8M331.19 945.6V972.8M343.76 945.6V972.8M356.33 945.6V972.8M368.9 945.6V972.8M381.47 945.6V972.8M394.04 945.6V972.8M406.61 945.6V972.8M419.18 945.6V972.8M431.75 945.6V972.8M444.32 945.6V972.8M456.89 945.6V972.8M469.46 945.6V972.8M482.03 945.6V972.8M494.6 945.6V972.8M507.17 945.6V972.8M519.74 945.6V972.8M532.31 945.6V972.8M544.88 945.6V972.8M557.45 945.6V972.8M570.02 945.6V972.8M582.59 945.6V972.8M595.16 945.6V972.8M607.73 945.6V972.8M620.3 945.6V972.8M632.87 945.6V972.8M645.44 945.6V972.8M658.01 945.6V972.8M670.58 945.6V972.8M683.15 945.6V972.8M695.72 945.6V972.8M708.29 945.6V972.8" fill="none" stroke="#b8b9c2" stroke-width="1.1"/>
<rect x="720.86" y="945.6" width="273.44" height="27.2" fill="#bdbec4"/>
<path d="M720.86 945.6V972.8M733.43 945.6V972.8M746 945.6V972.8M758.57 945.6V972.8M771.14 945.6V972.8M783.71 945.6V972.8M796.28 945.6V972.8M808.85 945.6V972.8M821.42 945.6V972.8M833.99 945.6V972.8M846.56 945.6V972.8M859.13 945.6V972.8M871.7 945.6V972.8M884.27 945.6V972.8M896.84 945.6V972.8M909.41 945.6V972.8M921.98 945.6V972.8M934.55 945.6V972.8M947.12 945.6V972.8M959.69 945.6V972.8M972.26 945.6V972.8M984.83 945.6V972.8" fill="none" stroke="#aeafb7" stroke-width="1.1"/>
<rect x="-5" y="975.8" width="323.62" height="26.1" fill="#bdbec4"/>
<path d="M4.37 975.8V1001.9M16.94 975.8V1001.9M29.51 975.8V1001.9M42.08 975.8V1001.9M54.65 975.8V1001.9M67.22 975.8V1001.9M79.79 975.8V1001.9M92.36 975.8V1001.9M104.93 975.8V1001.9M117.5 975.8V1001.9M130.07 975.8V1001.9M142.64 975.8V1001.9M155.21 975.8V1001.9M167.78 975.8V1001.9M180.35 975.8V1001.9M192.92 975.8V1001.9M205.49 975.8V1001.9M218.06 975.8V1001.9M230.63 975.8V1001.9M243.2 975.8V1001.9M255.77 975.8V1001.9M268.34 975.8V1001.9M280.91 975.8V1001.9M293.48 975.8V1001.9M306.05 975.8V1001.9" fill="none" stroke="#aeafb7" stroke-width="1.1"/>
<rect x="318.62" y="975.8" width="402.24" height="26.1" fill="#c7c9d2"/>
<path d="M318.62 975.8V1001.9M331.19 975.8V1001.9M343.76 975.8V1001.9M356.33 975.8V1001.9M368.9 975.8V1001.9M381.47 975.8V1001.9M394.04 975.8V1001.9M406.61 975.8V1001.9M419.18 975.8V1001.9M431.75 975.8V1001.9M444.32 975.8V1001.9M456.89 975.8V1001.9M469.46 975.8V1001.9M482.03 975.8V1001.9M494.6 975.8V1001.9M507.17 975.8V1001.9M519.74 975.8V1001.9M532.31 975.8V1001.9M544.88 975.8V1001.9M557.45 975.8V1001.9M570.02 975.8V1001.9M582.59 975.8V1001.9M595.16 975.8V1001.9M607.73 975.8V1001.9M620.3 975.8V1001.9M632.87 975.8V1001.9M645.44 975.8V1001.9M658.01 975.8V1001.9M670.58 975.8V1001.9M683.15 975.8V1001.9M695.72 975.8V1001.9M708.29 975.8V1001.9" fill="none" stroke="#b8b9c2" stroke-width="1.1"/>
<rect x="720.86" y="975.8" width="273.44" height="26.1" fill="#bdbec4"/>
<path d="M720.86 975.8V1001.9M733.43 975.8V1001.9M746 975.8V1001.9M758.57 975.8V1001.9M771.14 975.8V1001.9M783.71 975.8V1001.9M796.28 975.8V1001.9M808.85 975.8V1001.9M821.42 975.8V1001.9M833.99 975.8V1001.9M846.56 975.8V1001.9M859.13 975.8V1001.9M871.7 975.8V1001.9M884.27 975.8V1001.9M896.84 975.8V1001.9M909.41 975.8V1001.9M921.98 975.8V1001.9M934.55 975.8V1001.9M947.12 975.8V1001.9M959.69 975.8V1001.9M972.26 975.8V1001.9M984.83 975.8V1001.9" fill="none" stroke="#aeafb7" stroke-width="1.1"/>
<rect x="-5" y="1004.8" width="323.62" height="26.8" fill="#bdbec4"/>
<path d="M4.37 1004.8V1031.6M16.94 1004.8V1031.6M29.51 1004.8V1031.6M42.08 1004.8V1031.6M54.65 1004.8V1031.6M67.22 1004.8V1031.6M79.79 1004.8V1031.6M92.36 1004.8V1031.6M104.93 1004.8V1031.6M117.5 1004.8V1031.6M130.07 1004.8V1031.6M142.64 1004.8V1031.6M155.21 1004.8V1031.6M167.78 1004.8V1031.6M180.35 1004.8V1031.6M192.92 1004.8V1031.6M205.49 1004.8V1031.6M218.06 1004.8V1031.6M230.63 1004.8V1031.6M243.2 1004.8V1031.6M255.77 1004.8V1031.6M268.34 1004.8V1031.6M280.91 1004.8V1031.6M293.48 1004.8V1031.6M306.05 1004.8V1031.6" fill="none" stroke="#aeafb7" stroke-width="1.1"/>
<rect x="318.62" y="1004.8" width="402.24" height="26.8" fill="#c7c9d2"/>
<path d="M318.62 1004.8V1031.6M331.19 1004.8V1031.6M343.76 1004.8V1031.6M356.33 1004.8V1031.6M368.9 1004.8V1031.6M381.47 1004.8V1031.6M394.04 1004.8V1031.6M406.61 1004.8V1031.6M419.18 1004.8V1031.6M431.75 1004.8V1031.6M444.32 1004.8V1031.6M456.89 1004.8V1031.6M469.46 1004.8V1031.6M482.03 1004.8V1031.6M494.6 1004.8V1031.6M507.17 1004.8V1031.6M519.74 1004.8V1031.6M532.31 1004.8V1031.6M544.88 1004.8V1031.6M557.45 1004.8V1031.6M570.02 1004.8V1031.6M582.59 1004.8V1031.6M595.16 1004.8V1031.6M607.73 1004.8V1031.6M620.3 1004.8V1031.6M632.87 1004.8V1031.6M645.44 1004.8V1031.6M658.01 1004.8V1031.6M670.58 1004.8V1031.6M683.15 1004.8V1031.6M695.72 1004.8V1031.6M708.29 1004.8V1031.6" fill="none" stroke="#b8b9c2" stroke-width="1.1"/>
<rect x="720.86" y="1004.8" width="273.44" height="26.8" fill="#bdbec4"/>
<path d="M720.86 1004.8V1031.6M733.43 1004.8V1031.6M746 1004.8V1031.6M758.57 1004.8V1031.6M771.14 1004.8V1031.6M783.71 1004.8V1031.6M796.28 1004.8V1031.6M808.85 1004.8V1031.6M821.42 1004.8V1031.6M833.99 1004.8V1031.6M846.56 1004.8V1031.6M859.13 1004.8V1031.6M871.7 1004.8V1031.6M884.27 1004.8V1031.6M896.84 1004.8V1031.6M909.41 1004.8V1031.6M921.98 1004.8V1031.6M934.55 1004.8V1031.6M947.12 1004.8V1031.6M959.69 1004.8V1031.6M972.26 1004.8V1031.6M984.83 1004.8V1031.6" fill="none" stroke="#aeafb7" stroke-width="1.1"/>
<rect x="994.3" y="219.3" width="2.9" height="815.3" fill="#858999"/>
<rect x="994.3" y="198.5" width="3.2" height="20.8" fill="#c8cbd4"/>
<rect x="994.3" y="1031.6" width="475" height="3" fill="#858999"/>
<rect x="-83.62" y="222.3" width="201.12" height="25.8" fill="#e2ebb6"/>
<rect x="-83.62" y="222.3" width="201.12" height="1" fill="#858999"/>
<rect x="-83.62" y="247.4" width="201.12" height="0.9" fill="#71755b" opacity="0.5"/>
<rect x="-83.82" y="222.3" width="1.1" height="26" fill="#71755b" opacity="0.8"/>
<text x="10.3" y="241.03" font-size="15.2" fill="#23252f" text-anchor="end" letter-spacing="0.4">ad</text>
<rect x="-83.62" y="388.4" width="201.12" height="25.7" fill="#bdd9b3"/>
<rect x="-83.62" y="388.4" width="201.12" height="1" fill="#858999"/>
<rect x="-83.62" y="413.4" width="201.12" height="0.9" fill="#5e6c59" opacity="0.5"/>
<rect x="-83.82" y="388.4" width="1.1" height="25.9" fill="#5e6c59" opacity="0.8"/>
<clipPath id="cp199"><rect x="-83.62" y="388.4" width="200.62" height="26.3"/></clipPath>
<text x="-79.12" y="406.88" font-size="15.2" fill="#23252f" textLength="47.6" lengthAdjust="spacingAndGlyphs" clip-path="url(#cp199)">Drums</text>
<rect x="-83.62" y="417.93" width="201.12" height="25.7" fill="#e0fde8"/>
<rect x="-83.62" y="417.93" width="201.12" height="1" fill="#858999"/>
<rect x="-83.62" y="442.93" width="201.12" height="0.9" fill="#707e74" opacity="0.5"/>
<rect x="-83.82" y="417.93" width="1.1" height="25.9" fill="#707e74" opacity="0.8"/>
<clipPath id="cp205"><rect x="-83.62" y="417.93" width="200.62" height="26.3"/></clipPath>
<text x="-79.12" y="436.41" font-size="15.2" fill="#23252f" textLength="146" lengthAdjust="spacingAndGlyphs" clip-path="url(#cp205)">The Beat Of History</text>
<rect x="-83.62" y="565.58" width="201.12" height="25.7" fill="#dcb1ab"/>
<rect x="-83.62" y="565.58" width="201.12" height="1" fill="#858999"/>
<rect x="-83.62" y="590.58" width="201.12" height="0.9" fill="#6e5855" opacity="0.5"/>
<rect x="-83.82" y="565.58" width="1.1" height="25.9" fill="#6e5855" opacity="0.8"/>
<clipPath id="cp211"><rect x="-83.62" y="565.58" width="200.62" height="26.3"/></clipPath>
<text x="-79.12" y="584.06" font-size="15.2" fill="#23252f" textLength="117.5" lengthAdjust="spacingAndGlyphs" clip-path="url(#cp211)">Transform Seed</text>
<rect x="519.74" y="388.4" width="201.12" height="25.7" fill="#bdd9b3"/>
<rect x="519.74" y="388.4" width="201.12" height="1" fill="#858999"/>
<rect x="519.74" y="413.4" width="201.12" height="0.9" fill="#5e6c59" opacity="0.5"/>
<rect x="519.54" y="388.4" width="1.1" height="25.9" fill="#5e6c59" opacity="0.8"/>
<clipPath id="cp217"><rect x="519.74" y="388.4" width="200.62" height="26.3"/></clipPath>
<text x="524.24" y="406.88" font-size="15.2" fill="#23252f" textLength="47.6" lengthAdjust="spacingAndGlyphs" clip-path="url(#cp217)">Drums</text>
<rect x="519.74" y="417.93" width="201.12" height="25.7" fill="#e0fde8"/>
<rect x="519.74" y="417.93" width="201.12" height="1" fill="#858999"/>
<rect x="519.74" y="442.93" width="201.12" height="0.9" fill="#707e74" opacity="0.5"/>
<rect x="519.54" y="417.93" width="1.1" height="25.9" fill="#707e74" opacity="0.8"/>
<clipPath id="cp223"><rect x="519.74" y="417.93" width="200.62" height="26.3"/></clipPath>
<text x="524.24" y="436.41" font-size="15.2" fill="#23252f" textLength="146" lengthAdjust="spacingAndGlyphs" clip-path="url(#cp223)">The Beat Of History</text>
<rect x="519.74" y="565.58" width="201.12" height="25.7" fill="#dcb1ab"/>
<rect x="519.74" y="565.58" width="201.12" height="1" fill="#858999"/>
<rect x="519.74" y="590.58" width="201.12" height="0.9" fill="#6e5855" opacity="0.5"/>
<rect x="519.54" y="565.58" width="1.1" height="25.9" fill="#6e5855" opacity="0.8"/>
<clipPath id="cp229"><rect x="519.74" y="565.58" width="200.62" height="26.3"/></clipPath>
<text x="524.24" y="584.06" font-size="15.2" fill="#23252f" textLength="117.5" lengthAdjust="spacingAndGlyphs" clip-path="url(#cp229)">Transform Seed</text>
<rect x="720.86" y="388.4" width="201.12" height="25.7" fill="#bdd9b3"/>
<rect x="720.86" y="388.4" width="201.12" height="1" fill="#858999"/>
<rect x="720.86" y="413.4" width="201.12" height="0.9" fill="#5e6c59" opacity="0.5"/>
<rect x="720.66" y="388.4" width="1.1" height="25.9" fill="#5e6c59" opacity="0.8"/>
<clipPath id="cp235"><rect x="720.86" y="388.4" width="200.62" height="26.3"/></clipPath>
<text x="725.36" y="406.88" font-size="15.2" fill="#23252f" textLength="47.6" lengthAdjust="spacingAndGlyphs" clip-path="url(#cp235)">Drums</text>
<rect x="720.86" y="417.93" width="201.12" height="25.7" fill="#e0fde8"/>
<rect x="720.86" y="417.93" width="201.12" height="1" fill="#858999"/>
<rect x="720.86" y="442.93" width="201.12" height="0.9" fill="#707e74" opacity="0.5"/>
<rect x="720.66" y="417.93" width="1.1" height="25.9" fill="#707e74" opacity="0.8"/>
<clipPath id="cp241"><rect x="720.86" y="417.93" width="200.62" height="26.3"/></clipPath>
<text x="725.36" y="436.41" font-size="15.2" fill="#23252f" textLength="146" lengthAdjust="spacingAndGlyphs" clip-path="url(#cp241)">The Beat Of History</text>
<rect x="720.86" y="565.58" width="201.12" height="25.7" fill="#dcb1ab"/>
<rect x="720.86" y="565.58" width="201.12" height="1" fill="#858999"/>
<rect x="720.86" y="590.58" width="201.12" height="0.9" fill="#6e5855" opacity="0.5"/>
<rect x="720.66" y="565.58" width="1.1" height="25.9" fill="#6e5855" opacity="0.8"/>
<clipPath id="cp247"><rect x="720.86" y="565.58" width="200.62" height="26.3"/></clipPath>
<text x="725.36" y="584.06" font-size="15.2" fill="#23252f" textLength="117.5" lengthAdjust="spacingAndGlyphs" clip-path="url(#cp247)">Transform Seed</text>
<rect x="921.98" y="388.4" width="72.32" height="25.7" fill="#bdd9b3"/>
<rect x="921.98" y="388.4" width="72.32" height="1" fill="#858999"/>
<rect x="921.98" y="413.4" width="72.32" height="0.9" fill="#5e6c59" opacity="0.5"/>
<rect x="921.78" y="388.4" width="1.1" height="25.9" fill="#5e6c59" opacity="0.8"/>
<clipPath id="cp253"><rect x="921.98" y="388.4" width="71.82" height="26.3"/></clipPath>
<text x="926.48" y="406.88" font-size="15.2" fill="#23252f" textLength="47.6" lengthAdjust="spacingAndGlyphs" clip-path="url(#cp253)">Drums</text>
<rect x="921.98" y="417.93" width="72.32" height="25.7" fill="#e0fde8"/>
<rect x="921.98" y="417.93" width="72.32" height="1" fill="#858999"/>
<rect x="921.98" y="442.93" width="72.32" height="0.9" fill="#707e74" opacity="0.5"/>
<rect x="921.78" y="417.93" width="1.1" height="25.9" fill="#707e74" opacity="0.8"/>
<clipPath id="cp259"><rect x="921.98" y="417.93" width="71.82" height="26.3"/></clipPath>
<text x="926.48" y="436.41" font-size="15.2" fill="#23252f" textLength="146" lengthAdjust="spacingAndGlyphs" clip-path="url(#cp259)">The Beat Of History</text>
<rect x="921.98" y="565.58" width="72.32" height="25.7" fill="#dcb1ab"/>
<rect x="921.98" y="565.58" width="72.32" height="1" fill="#858999"/>
<rect x="921.98" y="590.58" width="72.32" height="0.9" fill="#6e5855" opacity="0.5"/>
<rect x="921.78" y="565.58" width="1.1" height="25.9" fill="#6e5855" opacity="0.8"/>
<clipPath id="cp265"><rect x="921.98" y="565.58" width="71.82" height="26.3"/></clipPath>
<text x="926.48" y="584.06" font-size="15.2" fill="#23252f" textLength="117.5" lengthAdjust="spacingAndGlyphs" clip-path="url(#cp265)">Transform Seed</text>
<rect x="-5" y="447.46" width="122.5" height="25.7" fill="#dff6fc"/>
<rect x="-5" y="447.46" width="122.5" height="0.9" fill="#858999"/>
<rect x="117.5" y="447.46" width="201.12" height="25.7" fill="#dff6fc"/>
<rect x="117.5" y="447.46" width="201.12" height="0.9" fill="#858999"/>
<rect x="117.5" y="476.99" width="201.12" height="25.7" fill="#a9c0d6"/>
<rect x="117.5" y="476.99" width="201.12" height="1" fill="#858999"/>
<rect x="117.5" y="501.99" width="201.12" height="0.9" fill="#54606b" opacity="0.5"/>
<rect x="117.3" y="476.99" width="1.1" height="25.9" fill="#54606b" opacity="0.8"/>
<clipPath id="cp275"><rect x="117.5" y="476.99" width="200.62" height="26.3"/></clipPath>
<text x="122" y="495.47" font-size="15.2" fill="#23252f" textLength="72.3" lengthAdjust="spacingAndGlyphs" clip-path="url(#cp275)">Rose Bass</text>
<rect x="318.62" y="476.99" width="201.12" height="25.7" fill="#a9c0d6"/>
<rect x="318.62" y="476.99" width="201.12" height="1" fill="#858999"/>
<rect x="318.62" y="501.99" width="201.12" height="0.9" fill="#54606b" opacity="0.5"/>
<rect x="318.42" y="476.99" width="1.1" height="25.9" fill="#54606b" opacity="0.8"/>
<clipPath id="cp281"><rect x="318.62" y="476.99" width="200.62" height="26.3"/></clipPath>
<text x="323.12" y="495.47" font-size="15.2" fill="#23252f" textLength="72.3" lengthAdjust="spacingAndGlyphs" clip-path="url(#cp281)">Rose Bass</text>
<rect x="720.86" y="476.99" width="201.12" height="25.7" fill="#a9c0d6"/>
<rect x="720.86" y="476.99" width="201.12" height="1" fill="#858999"/>
<rect x="720.86" y="501.99" width="201.12" height="0.9" fill="#54606b" opacity="0.5"/>
<rect x="720.66" y="476.99" width="1.1" height="25.9" fill="#54606b" opacity="0.8"/>
<clipPath id="cp287"><rect x="720.86" y="476.99" width="200.62" height="26.3"/></clipPath>
<text x="725.36" y="495.47" font-size="15.2" fill="#23252f" textLength="72.3" lengthAdjust="spacingAndGlyphs" clip-path="url(#cp287)">Rose Bass</text>
<rect x="720.86" y="506.52" width="201.12" height="25.7" fill="#c7bdd3"/>
<rect x="720.86" y="506.52" width="201.12" height="1" fill="#858999"/>
<rect x="720.86" y="531.52" width="201.12" height="0.9" fill="#635e69" opacity="0.5"/>
<rect x="720.66" y="506.52" width="1.1" height="25.9" fill="#635e69" opacity="0.8"/>
<clipPath id="cp293"><rect x="720.86" y="506.52" width="200.62" height="26.3"/></clipPath>
<text x="725.36" y="525" font-size="15.2" fill="#23252f" textLength="97.3" lengthAdjust="spacingAndGlyphs" clip-path="url(#cp293)">Sub Sub Bass</text>
<rect x="921.98" y="536.05" width="72.32" height="25.7" fill="#c997d7"/>
<rect x="921.98" y="536.05" width="72.32" height="1" fill="#858999"/>
<rect x="921.98" y="561.05" width="72.32" height="0.9" fill="#644b6b" opacity="0.5"/>
<rect x="921.78" y="536.05" width="1.1" height="25.9" fill="#644b6b" opacity="0.8"/>
<clipPath id="cp299"><rect x="921.98" y="536.05" width="71.82" height="26.3"/></clipPath>
<text x="926.48" y="554.53" font-size="15.2" fill="#23252f" textLength="82.5" lengthAdjust="spacingAndGlyphs" clip-path="url(#cp299)">Guit Layter</text>
<rect x="117.5" y="595.11" width="201.12" height="25.7" fill="#d5a43b"/>
<rect x="117.5" y="595.11" width="201.12" height="1" fill="#858999"/>
<rect x="117.5" y="620.11" width="201.12" height="0.9" fill="#6a521d" opacity="0.5"/>
<rect x="117.3" y="595.11" width="1.1" height="25.9" fill="#6a521d" opacity="0.8"/>
<clipPath id="cp305"><rect x="117.5" y="595.11" width="200.62" height="26.3"/></clipPath>
<text x="122" y="613.59" font-size="15.2" fill="#23252f" textLength="100.9" lengthAdjust="spacingAndGlyphs" clip-path="url(#cp305)">Vacuum Flute</text>
<rect x="318.62" y="595.11" width="201.12" height="25.7" fill="#d5a43b"/>
<rect x="318.62" y="595.11" width="201.12" height="1" fill="#858999"/>
<rect x="318.62" y="620.11" width="201.12" height="0.9" fill="#6a521d" opacity="0.5"/>
<rect x="318.42" y="595.11" width="1.1" height="25.9" fill="#6a521d" opacity="0.8"/>
<clipPath id="cp311"><rect x="318.62" y="595.11" width="200.62" height="26.3"/></clipPath>
<text x="323.12" y="613.59" font-size="15.2" fill="#23252f" textLength="100.9" lengthAdjust="spacingAndGlyphs" clip-path="url(#cp311)">Vacuum Flute</text>
<rect x="519.74" y="595.11" width="201.12" height="25.7" fill="#d5a43b"/>
<rect x="519.74" y="595.11" width="201.12" height="1" fill="#858999"/>
<rect x="519.74" y="620.11" width="201.12" height="0.9" fill="#6a521d" opacity="0.5"/>
<rect x="519.54" y="595.11" width="1.1" height="25.9" fill="#6a521d" opacity="0.8"/>
<clipPath id="cp317"><rect x="519.74" y="595.11" width="200.62" height="26.3"/></clipPath>
<text x="524.24" y="613.59" font-size="15.2" fill="#23252f" textLength="100.9" lengthAdjust="spacingAndGlyphs" clip-path="url(#cp317)">Vacuum Flute</text>
<rect x="720.86" y="595.11" width="201.12" height="25.7" fill="#d5a43b"/>
<rect x="720.86" y="595.11" width="201.12" height="1" fill="#858999"/>
<rect x="720.86" y="620.11" width="201.12" height="0.9" fill="#6a521d" opacity="0.5"/>
<rect x="720.66" y="595.11" width="1.1" height="25.9" fill="#6a521d" opacity="0.8"/>
<clipPath id="cp323"><rect x="720.86" y="595.11" width="200.62" height="26.3"/></clipPath>
<text x="725.36" y="613.59" font-size="15.2" fill="#23252f" textLength="100.9" lengthAdjust="spacingAndGlyphs" clip-path="url(#cp323)">Vacuum Flute</text>
<rect x="921.98" y="595.11" width="72.32" height="25.7" fill="#d5a43b"/>
<rect x="921.98" y="595.11" width="72.32" height="1" fill="#858999"/>
<rect x="921.98" y="620.11" width="72.32" height="0.9" fill="#6a521d" opacity="0.5"/>
<rect x="921.78" y="595.11" width="1.1" height="25.9" fill="#6a521d" opacity="0.8"/>
<clipPath id="cp329"><rect x="921.98" y="595.11" width="71.82" height="26.3"/></clipPath>
<text x="926.48" y="613.59" font-size="15.2" fill="#23252f" textLength="100.9" lengthAdjust="spacingAndGlyphs" clip-path="url(#cp329)">Vacuum Flute</text>
<rect x="-5" y="624.64" width="146.6" height="25.7" fill="#fcf492"/>
<rect x="-5" y="624.64" width="146.6" height="0.9" fill="#858999"/>
<rect x="-5" y="654.17" width="146.6" height="25.7" fill="#fcf492"/>
<rect x="-5" y="654.17" width="146.6" height="0.9" fill="#858999"/>
<rect x="971.4" y="683.7" width="22.9" height="25.7" fill="#fcf492"/>
<rect x="971.4" y="683.7" width="22.9" height="1" fill="#858999"/>
<rect x="971.4" y="708.7" width="22.9" height="0.9" fill="#7e7a49" opacity="0.5"/>
<rect x="971.2" y="683.7" width="1.1" height="25.9" fill="#7e7a49" opacity="0.8"/>
<clipPath id="cp339"><rect x="971.4" y="683.7" width="22.4" height="26.3"/></clipPath>
<text x="975.9" y="702.18" font-size="15.2" fill="#23252f" textLength="47.6" lengthAdjust="spacingAndGlyphs" clip-path="url(#cp339)">Vocals</text>
<rect x="676.8" y="713.23" width="44.36" height="25.7" fill="#fcf492"/>
<rect x="676.8" y="713.23" width="44.36" height="1" fill="#858999"/>
<rect x="676.8" y="738.23" width="44.36" height="0.9" fill="#7e7a49" opacity="0.5"/>
<rect x="676.6" y="713.23" width="1.1" height="25.9" fill="#7e7a49" opacity="0.8"/>
<clipPath id="cp345"><rect x="676.8" y="713.23" width="43.86" height="26.3"/></clipPath>
<text x="681.3" y="731.71" font-size="15.2" fill="#23252f" textLength="47.6" lengthAdjust="spacingAndGlyphs" clip-path="url(#cp345)">Vocals</text>
<rect x="878.6" y="713.23" width="55.1" height="25.7" fill="#fcf492"/>
<rect x="878.6" y="713.23" width="55.1" height="1" fill="#858999"/>
<rect x="878.6" y="738.23" width="55.1" height="0.9" fill="#7e7a49" opacity="0.5"/>
<rect x="878.4" y="713.23" width="1.1" height="25.9" fill="#7e7a49" opacity="0.8"/>
<clipPath id="cp351"><rect x="878.6" y="713.23" width="54.6" height="26.3"/></clipPath>
<text x="883.1" y="731.71" font-size="15.2" fill="#23252f" textLength="47.6" lengthAdjust="spacingAndGlyphs" clip-path="url(#cp351)">Vocals</text>
<rect x="-5" y="742.76" width="524.74" height="25.7" fill="#e2ebb6"/>
<rect x="-5" y="742.76" width="524.74" height="0.9" fill="#858999"/>
<rect x="519.74" y="742.76" width="474.56" height="25.7" fill="#e2ebb6"/>
<rect x="519.74" y="742.76" width="474.56" height="0.9" fill="#858999"/>
<rect x="-83.62" y="251.7" width="201.12" height="133.7" fill="#cfdc98"/>
<path d="M4.37 278V385.3M16.94 278V385.3M29.51 278V385.3M42.08 278V385.3M54.65 278V385.3M67.22 278V385.3M79.79 278V385.3M92.36 278V385.3M104.93 278V385.3" fill="none" stroke="#bdca8a" stroke-width="1.1"/>
<rect x="-83.62" y="251.7" width="201.12" height="1" fill="#858999"/>
<rect x="-83.62" y="277.1" width="201.12" height="1" fill="#4f5531"/>
<rect x="-83.82" y="251.7" width="1.1" height="133.7" fill="#4f5531"/>
<text x="-79.42" y="270.53" font-size="15.2" fill="#23252f" textLength="110.5" lengthAdjust="spacingAndGlyphs">Strum-o-Matic</text>
<g clip-path="url(#arrclip)">
<path d="M-83.02 316.12H-59.68" stroke="#1f2130" stroke-width="1" fill="none"/>
<path d="M-83.02 322.09H-59.68" stroke="#1f2130" stroke-width="1.1" fill="none"/>
<path d="M-83.02 327.06H-59.68" stroke="#1f2130" stroke-width="1" fill="none"/>
<path d="M-83.02 333.22H-59.68" stroke="#1f2130" stroke-width="1" fill="none"/>
<path d="M-83.02 338.19H-59.68" stroke="#1f2130" stroke-width="1" fill="none"/>
<path d="M-57.88 319.3H-34.54" stroke="#1f2130" stroke-width="1" fill="none"/>
<path d="M-57.88 322.68H-34.54" stroke="#1f2130" stroke-width="2.4" fill="none"/>
<path d="M-57.88 327.26H-34.54" stroke="#1f2130" stroke-width="0.8" fill="none"/>
<path d="M-57.88 330.24H-34.54" stroke="#1f2130" stroke-width="1" fill="none"/>
<path d="M-57.88 345.55H-34.54" stroke="#1f2130" stroke-width="1" fill="none"/>
<path d="M-32.74 316.12H-9.4" stroke="#1f2130" stroke-width="1" fill="none"/>
<path d="M-32.74 322.09H-9.4" stroke="#1f2130" stroke-width="1.5" fill="none"/>
<path d="M-32.74 327.26H-9.4" stroke="#1f2130" stroke-width="0.8" fill="none"/>
<path d="M-32.74 330.24H-9.4" stroke="#1f2130" stroke-width="1" fill="none"/>
<path d="M-32.74 351.91H-9.4" stroke="#1f2130" stroke-width="1" fill="none"/>
<path d="M-7.6 323.68H15.74" stroke="#1f2130" stroke-width="1" fill="none"/>
<path d="M-7.6 330.24H15.74" stroke="#1f2130" stroke-width="1" fill="none"/>
<path d="M-7.6 333.22H15.74" stroke="#1f2130" stroke-width="0.8" fill="none"/>
<path d="M-7.6 334.81H15.74" stroke="#1f2130" stroke-width="1.1" fill="none"/>
<path d="M-7.6 364.43H15.74" stroke="#1f2130" stroke-width="1" fill="none"/>
<path d="M17.54 316.12H40.88" stroke="#1f2130" stroke-width="1" fill="none"/>
<path d="M17.54 322.09H40.88" stroke="#1f2130" stroke-width="1.1" fill="none"/>
<path d="M17.54 327.06H40.88" stroke="#1f2130" stroke-width="1" fill="none"/>
<path d="M17.54 333.22H40.88" stroke="#1f2130" stroke-width="1" fill="none"/>
<path d="M17.54 338.19H40.88" stroke="#1f2130" stroke-width="1" fill="none"/>
<path d="M42.68 319.3H66.02" stroke="#1f2130" stroke-width="1" fill="none"/>
<path d="M42.68 322.68H66.02" stroke="#1f2130" stroke-width="2.4" fill="none"/>
<path d="M42.68 327.26H66.02" stroke="#1f2130" stroke-width="0.8" fill="none"/>
<path d="M42.68 330.24H66.02" stroke="#1f2130" stroke-width="1" fill="none"/>
<path d="M42.68 345.55H66.02" stroke="#1f2130" stroke-width="1" fill="none"/>
<path d="M67.82 316.12H91.16" stroke="#1f2130" stroke-width="1" fill="none"/>
<path d="M67.82 322.09H91.16" stroke="#1f2130" stroke-width="1.5" fill="none"/>
<path d="M67.82 327.26H91.16" stroke="#1f2130" stroke-width="0.8" fill="none"/>
<path d="M67.82 330.24H91.16" stroke="#1f2130" stroke-width="1" fill="none"/>
<path d="M67.82 351.91H91.16" stroke="#1f2130" stroke-width="1" fill="none"/>
<path d="M92.96 323.68H116.3" stroke="#1f2130" stroke-width="1" fill="none"/>
<path d="M92.96 330.24H116.3" stroke="#1f2130" stroke-width="1" fill="none"/>
<path d="M92.96 333.22H116.3" stroke="#1f2130" stroke-width="0.8" fill="none"/>
<path d="M92.96 334.81H116.3" stroke="#1f2130" stroke-width="1.1" fill="none"/>
<path d="M92.96 364.43H116.3" stroke="#1f2130" stroke-width="1" fill="none"/>
<path d="M-82.62 311.35H-78.62" stroke="#1f2130" stroke-width="1" fill="none"/>
<path d="M-77.62 314.14H-71.62" stroke="#1f2130" stroke-width="1" fill="none"/>
<path d="M-70.62 308.37H-65.62" stroke="#1f2130" stroke-width="1" fill="none"/>
<path d="M-63.62 311.35H-61.62" stroke="#1f2130" stroke-width="0.9" fill="none"/>
<path d="M-61.62 306.98H-59.62" stroke="#1f2130" stroke-width="0.9" fill="none"/>
<path d="M-58.62 308.37H-56.62" stroke="#1f2130" stroke-width="0.9" fill="none"/>
<path d="M-55.62 314.14H-53.62" stroke="#1f2130" stroke-width="0.9" fill="none"/>
<path d="M-52.62 311.35H-47.62" stroke="#1f2130" stroke-width="1" fill="none"/>
<path d="M-43.62 308.37H-38.62" stroke="#1f2130" stroke-width="1" fill="none"/>
<path d="M-37.62 306.98H-35.62" stroke="#1f2130" stroke-width="0.9" fill="none"/>
<path d="M-35.12 304.19H-33.12" stroke="#1f2130" stroke-width="0.9" fill="none"/>
<path d="M-32.62 306.98H-30.62" stroke="#1f2130" stroke-width="0.9" fill="none"/>
<path d="M-29.62 311.35H-24.62" stroke="#1f2130" stroke-width="1" fill="none"/>
<path d="M-21.62 308.37H-10.62" stroke="#1f2130" stroke-width="1.2" fill="none"/>
<path d="M-17.62 314.14H-15.62" stroke="#1f2130" stroke-width="0.9" fill="none"/>
<path d="M-15.62 311.35H-12.62" stroke="#1f2130" stroke-width="0.9" fill="none"/>
<path d="M-7.62 322.09H-5.62" stroke="#1f2130" stroke-width="0.9" fill="none"/>
<path d="M-4.62 319.11H-2.62" stroke="#1f2130" stroke-width="0.9" fill="none"/>
<path d="M0.38 314.14H3.38" stroke="#1f2130" stroke-width="0.9" fill="none"/>
<path d="M6.38 322.09H9.38" stroke="#1f2130" stroke-width="0.9" fill="none"/>
<path d="M3.38 326.66H15.38" stroke="#1f2130" stroke-width="2.2" fill="none"/>
<path d="M-57.62 326.66H-36.62" stroke="#1f2130" stroke-width="2.4" fill="none"/>
<path d="M17.94 311.35H21.94" stroke="#1f2130" stroke-width="1" fill="none"/>
<path d="M22.94 314.14H28.94" stroke="#1f2130" stroke-width="1" fill="none"/>
<path d="M29.94 308.37H34.94" stroke="#1f2130" stroke-width="1" fill="none"/>
<path d="M36.94 311.35H38.94" stroke="#1f2130" stroke-width="0.9" fill="none"/>
<path d="M38.94 306.98H40.94" stroke="#1f2130" stroke-width="0.9" fill="none"/>
<path d="M41.94 308.37H43.94" stroke="#1f2130" stroke-width="0.9" fill="none"/>
<path d="M44.94 314.14H46.94" stroke="#1f2130" stroke-width="0.9" fill="none"/>
<path d="M47.94 311.35H52.94" stroke="#1f2130" stroke-width="1" fill="none"/>
<path d="M56.94 308.37H61.94" stroke="#1f2130" stroke-width="1" fill="none"/>
<path d="M62.94 306.98H64.94" stroke="#1f2130" stroke-width="0.9" fill="none"/>
<path d="M65.44 304.19H67.44" stroke="#1f2130" stroke-width="0.9" fill="none"/>
<path d="M67.94 306.98H69.94" stroke="#1f2130" stroke-width="0.9" fill="none"/>
<path d="M70.94 311.35H75.94" stroke="#1f2130" stroke-width="1" fill="none"/>
<path d="M78.94 308.37H89.94" stroke="#1f2130" stroke-width="1.2" fill="none"/>
<path d="M82.94 314.14H84.94" stroke="#1f2130" stroke-width="0.9" fill="none"/>
<path d="M84.94 311.35H87.94" stroke="#1f2130" stroke-width="0.9" fill="none"/>
<path d="M92.94 322.09H94.94" stroke="#1f2130" stroke-width="0.9" fill="none"/>
<path d="M95.94 319.11H97.94" stroke="#1f2130" stroke-width="0.9" fill="none"/>
<path d="M100.94 314.14H103.94" stroke="#1f2130" stroke-width="0.9" fill="none"/>
<path d="M106.94 322.09H109.94" stroke="#1f2130" stroke-width="0.9" fill="none"/>
<path d="M103.94 326.66H115.94" stroke="#1f2130" stroke-width="2.2" fill="none"/>
<path d="M42.94 326.66H63.94" stroke="#1f2130" stroke-width="2.4" fill="none"/>
</g>
<rect x="117.5" y="251.7" width="201.12" height="133.7" fill="#cfdc98"/>
<path d="M130.07 278V385.3M142.64 278V385.3M155.21 278V385.3M167.78 278V385.3M180.35 278V385.3M192.92 278V385.3M205.49 278V385.3M218.06 278V385.3M230.63 278V385.3M243.2 278V385.3M255.77 278V385.3M268.34 278V385.3M280.91 278V385.3M293.48 278V385.3M306.05 278V385.3" fill="none" stroke="#bdca8a" stroke-width="1.1"/>
<rect x="117.5" y="251.7" width="201.12" height="1" fill="#858999"/>
<rect x="117.5" y="277.1" width="201.12" height="1" fill="#4f5531"/>
<rect x="117.3" y="251.7" width="1.1" height="133.7" fill="#4f5531"/>
<text x="121.7" y="270.53" font-size="15.2" fill="#23252f" textLength="110.5" lengthAdjust="spacingAndGlyphs">Strum-o-Matic</text>
<g clip-path="url(#arrclip)">
<path d="M118.1 316.12H166.58" stroke="#1f2130" stroke-width="1" fill="none"/>
<path d="M118.1 322.09H166.58" stroke="#1f2130" stroke-width="1.5" fill="none"/>
<path d="M118.1 327.26H166.58" stroke="#1f2130" stroke-width="0.8" fill="none"/>
<path d="M118.1 330.24H166.58" stroke="#1f2130" stroke-width="1" fill="none"/>
<path d="M118.1 351.91H166.58" stroke="#1f2130" stroke-width="1" fill="none"/>
<path d="M168.38 323.68H216.86" stroke="#1f2130" stroke-width="1" fill="none"/>
<path d="M168.38 330.24H216.86" stroke="#1f2130" stroke-width="1" fill="none"/>
<path d="M168.38 333.22H216.86" stroke="#1f2130" stroke-width="0.8" fill="none"/>
<path d="M168.38 334.81H216.86" stroke="#1f2130" stroke-width="1.1" fill="none"/>
<path d="M168.38 364.43H216.86" stroke="#1f2130" stroke-width="1" fill="none"/>
<path d="M218.66 316.12H267.14" stroke="#1f2130" stroke-width="1" fill="none"/>
<path d="M218.66 322.09H267.14" stroke="#1f2130" stroke-width="1.1" fill="none"/>
<path d="M218.66 327.06H267.14" stroke="#1f2130" stroke-width="1" fill="none"/>
<path d="M218.66 333.22H267.14" stroke="#1f2130" stroke-width="1" fill="none"/>
<path d="M218.66 338.19H267.14" stroke="#1f2130" stroke-width="1" fill="none"/>
<path d="M268.94 319.3H317.42" stroke="#1f2130" stroke-width="1" fill="none"/>
<path d="M268.94 322.68H317.42" stroke="#1f2130" stroke-width="2.4" fill="none"/>
<path d="M268.94 327.26H317.42" stroke="#1f2130" stroke-width="0.8" fill="none"/>
<path d="M268.94 330.24H317.42" stroke="#1f2130" stroke-width="1" fill="none"/>
<path d="M268.94 345.55H317.42" stroke="#1f2130" stroke-width="1" fill="none"/>
<path d="M273.5 311.35H278.5" stroke="#1f2130" stroke-width="1" fill="none"/>
<path d="M279.5 308.37H292.5" stroke="#1f2130" stroke-width="1" fill="none"/>
<path d="M300.5 305.39H311.5" stroke="#1f2130" stroke-width="1.2" fill="none"/>
<path d="M293.5 316.12H318.5" stroke="#1f2130" stroke-width="1" fill="none"/>
</g>
<rect x="318.62" y="251.7" width="201.12" height="133.7" fill="#cfdc98"/>
<path d="M331.19 278V385.3M343.76 278V385.3M356.33 278V385.3M368.9 278V385.3M381.47 278V385.3M394.04 278V385.3M406.61 278V385.3M419.18 278V385.3M431.75 278V385.3M444.32 278V385.3M456.89 278V385.3M469.46 278V385.3M482.03 278V385.3M494.6 278V385.3M507.17 278V385.3" fill="none" stroke="#bdca8a" stroke-width="1.1"/>
<rect x="318.62" y="251.7" width="201.12" height="1" fill="#858999"/>
<rect x="318.62" y="277.1" width="201.12" height="1" fill="#4f5531"/>
<rect x="318.42" y="251.7" width="1.1" height="133.7" fill="#4f5531"/>
<text x="322.82" y="270.53" font-size="15.2" fill="#23252f" textLength="110.5" lengthAdjust="spacingAndGlyphs">Strum-o-Matic</text>
<g clip-path="url(#arrclip)">
<path d="M319.22 316.12H367.7" stroke="#1f2130" stroke-width="1" fill="none"/>
<path d="M319.22 322.09H367.7" stroke="#1f2130" stroke-width="1.5" fill="none"/>
<path d="M319.22 327.26H367.7" stroke="#1f2130" stroke-width="0.8" fill="none"/>
<path d="M319.22 330.24H367.7" stroke="#1f2130" stroke-width="1" fill="none"/>
<path d="M319.22 351.91H367.7" stroke="#1f2130" stroke-width="1" fill="none"/>
<path d="M369.5 323.68H417.98" stroke="#1f2130" stroke-width="1" fill="none"/>
<path d="M369.5 330.24H417.98" stroke="#1f2130" stroke-width="1" fill="none"/>
<path d="M369.5 333.22H417.98" stroke="#1f2130" stroke-width="0.8" fill="none"/>
<path d="M369.5 334.81H417.98" stroke="#1f2130" stroke-width="1.1" fill="none"/>
<path d="M369.5 364.43H417.98" stroke="#1f2130" stroke-width="1" fill="none"/>
<path d="M419.78 316.12H468.26" stroke="#1f2130" stroke-width="1" fill="none"/>
<path d="M419.78 322.09H468.26" stroke="#1f2130" stroke-width="1.1" fill="none"/>
<path d="M419.78 327.06H468.26" stroke="#1f2130" stroke-width="1" fill="none"/>
<path d="M419.78 333.22H468.26" stroke="#1f2130" stroke-width="1" fill="none"/>
<path d="M419.78 338.19H468.26" stroke="#1f2130" stroke-width="1" fill="none"/>
<path d="M470.06 319.3H518.54" stroke="#1f2130" stroke-width="1" fill="none"/>
<path d="M470.06 322.68H518.54" stroke="#1f2130" stroke-width="2.4" fill="none"/>
<path d="M470.06 327.26H518.54" stroke="#1f2130" stroke-width="0.8" fill="none"/>
<path d="M470.06 330.24H518.54" stroke="#1f2130" stroke-width="1" fill="none"/>
<path d="M470.06 345.55H518.54" stroke="#1f2130" stroke-width="1" fill="none"/>
<path d="M343.62 305.39H366.62" stroke="#1f2130" stroke-width="1.2" fill="none"/>
<path d="M349.62 311.35H354.62" stroke="#1f2130" stroke-width="1" fill="none"/>
<path d="M355.62 308.37H360.62" stroke="#1f2130" stroke-width="1" fill="none"/>
<path d="M398.62 319.11H403.62" stroke="#1f2130" stroke-width="1.2" fill="none"/>
<path d="M392.62 322.88H416.62" stroke="#1f2130" stroke-width="2.2" fill="none"/>
<path d="M417.62 308.17H429.62" stroke="#1f2130" stroke-width="1" fill="none"/>
<path d="M430.62 311.35H442.62" stroke="#1f2130" stroke-width="1" fill="none"/>
<path d="M443.62 305.39H455.62" stroke="#1f2130" stroke-width="1.2" fill="none"/>
<path d="M481.62 308.17H492.62" stroke="#1f2130" stroke-width="1" fill="none"/>
<path d="M500.62 305.39H511.62" stroke="#1f2130" stroke-width="1.2" fill="none"/>
<path d="M494.62 316.12H519.62" stroke="#1f2130" stroke-width="1" fill="none"/>
</g>
<rect x="720.86" y="251.7" width="201.12" height="133.7" fill="#cfdc98"/>
<path d="M733.43 278V385.3M746 278V385.3M758.57 278V385.3M771.14 278V385.3M783.71 278V385.3M796.28 278V385.3M808.85 278V385.3M821.42 278V385.3M833.99 278V385.3M846.56 278V385.3M859.13 278V385.3M871.7 278V385.3M884.27 278V385.3M896.84 278V385.3M909.41 278V385.3" fill="none" stroke="#bdca8a" stroke-width="1.1"/>
<rect x="720.86" y="251.7" width="201.12" height="1" fill="#858999"/>
<rect x="720.86" y="277.1" width="201.12" height="1" fill="#4f5531"/>
<rect x="720.66" y="251.7" width="1.1" height="133.7" fill="#4f5531"/>
<text x="725.06" y="270.53" font-size="15.2" fill="#23252f" textLength="110.5" lengthAdjust="spacingAndGlyphs">Strum-o-Matic</text>
<g clip-path="url(#arrclip)">
<path d="M721.46 316.12H744.8" stroke="#1f2130" stroke-width="1" fill="none"/>
<path d="M721.46 322.09H744.8" stroke="#1f2130" stroke-width="1.1" fill="none"/>
<path d="M721.46 327.06H744.8" stroke="#1f2130" stroke-width="1" fill="none"/>
<path d="M721.46 333.22H744.8" stroke="#1f2130" stroke-width="1" fill="none"/>
<path d="M721.46 338.19H744.8" stroke="#1f2130" stroke-width="1" fill="none"/>
<path d="M746.6 319.3H769.94" stroke="#1f2130" stroke-width="1" fill="none"/>
<path d="M746.6 322.68H769.94" stroke="#1f2130" stroke-width="2.4" fill="none"/>
<path d="M746.6 327.26H769.94" stroke="#1f2130" stroke-width="0.8" fill="none"/>
<path d="M746.6 330.24H769.94" stroke="#1f2130" stroke-width="1" fill="none"/>
<path d="M746.6 345.55H769.94" stroke="#1f2130" stroke-width="1" fill="none"/>
<path d="M771.74 316.12H795.08" stroke="#1f2130" stroke-width="1" fill="none"/>
<path d="M771.74 322.09H795.08" stroke="#1f2130" stroke-width="1.5" fill="none"/>
<path d="M771.74 327.26H795.08" stroke="#1f2130" stroke-width="0.8" fill="none"/>
<path d="M771.74 330.24H795.08" stroke="#1f2130" stroke-width="1" fill="none"/>
<path d="M771.74 351.91H795.08" stroke="#1f2130" stroke-width="1" fill="none"/>
<path d="M796.88 323.68H820.22" stroke="#1f2130" stroke-width="1" fill="none"/>
<path d="M796.88 330.24H820.22" stroke="#1f2130" stroke-width="1" fill="none"/>
<path d="M796.88 333.22H820.22" stroke="#1f2130" stroke-width="0.8" fill="none"/>
<path d="M796.88 334.81H820.22" stroke="#1f2130" stroke-width="1.1" fill="none"/>
<path d="M796.88 364.43H820.22" stroke="#1f2130" stroke-width="1" fill="none"/>
<path d="M822.02 316.12H845.36" stroke="#1f2130" stroke-width="1" fill="none"/>
<path d="M822.02 322.09H845.36" stroke="#1f2130" stroke-width="1.1" fill="none"/>
<path d="M822.02 327.06H845.36" stroke="#1f2130" stroke-width="1" fill="none"/>
<path d="M822.02 333.22H845.36" stroke="#1f2130" stroke-width="1" fill="none"/>
<path d="M822.02 338.19H845.36" stroke="#1f2130" stroke-width="1" fill="none"/>
<path d="M847.16 319.3H870.5" stroke="#1f2130" stroke-width="1" fill="none"/>
<path d="M847.16 322.68H870.5" stroke="#1f2130" stroke-width="2.4" fill="none"/>
<path d="M847.16 327.26H870.5" stroke="#1f2130" stroke-width="0.8" fill="none"/>
<path d="M847.16 330.24H870.5" stroke="#1f2130" stroke-width="1" fill="none"/>
<path d="M847.16 345.55H870.5" stroke="#1f2130" stroke-width="1" fill="none"/>
<path d="M872.3 316.12H895.64" stroke="#1f2130" stroke-width="1" fill="none"/>
<path d="M872.3 322.09H895.64" stroke="#1f2130" stroke-width="1.5" fill="none"/>
<path d="M872.3 327.26H895.64" stroke="#1f2130" stroke-width="0.8" fill="none"/>
<path d="M872.3 330.24H895.64" stroke="#1f2130" stroke-width="1" fill="none"/>
<path d="M872.3 351.91H895.64" stroke="#1f2130" stroke-width="1" fill="none"/>
<path d="M897.44 323.68H920.78" stroke="#1f2130" stroke-width="1" fill="none"/>
<path d="M897.44 330.24H920.78" stroke="#1f2130" stroke-width="1" fill="none"/>
<path d="M897.44 333.22H920.78" stroke="#1f2130" stroke-width="0.8" fill="none"/>
<path d="M897.44 334.81H920.78" stroke="#1f2130" stroke-width="1.1" fill="none"/>
<path d="M897.44 364.43H920.78" stroke="#1f2130" stroke-width="1" fill="none"/>
<path d="M721.86 311.35H725.86" stroke="#1f2130" stroke-width="1" fill="none"/>
<path d="M726.86 314.14H732.86" stroke="#1f2130" stroke-width="1" fill="none"/>
<path d="M733.86 308.37H738.86" stroke="#1f2130" stroke-width="1" fill="none"/>
<path d="M740.86 311.35H742.86" stroke="#1f2130" stroke-width="0.9" fill="none"/>
<path d="M742.86 306.98H744.86" stroke="#1f2130" stroke-width="0.9" fill="none"/>
<path d="M745.86 308.37H747.86" stroke="#1f2130" stroke-width="0.9" fill="none"/>
<path d="M748.86 314.14H750.86" stroke="#1f2130" stroke-width="0.9" fill="none"/>
<path d="M751.86 311.35H756.86" stroke="#1f2130" stroke-width="1" fill="none"/>
<path d="M760.86 308.37H765.86" stroke="#1f2130" stroke-width="1" fill="none"/>
<path d="M766.86 306.98H768.86" stroke="#1f2130" stroke-width="0.9" fill="none"/>
<path d="M769.36 304.19H771.36" stroke="#1f2130" stroke-width="0.9" fill="none"/>
<path d="M771.86 306.98H773.86" stroke="#1f2130" stroke-width="0.9" fill="none"/>
<path d="M774.86 311.35H779.86" stroke="#1f2130" stroke-width="1" fill="none"/>
<path d="M782.86 308.37H793.86" stroke="#1f2130" stroke-width="1.2" fill="none"/>
<path d="M786.86 314.14H788.86" stroke="#1f2130" stroke-width="0.9" fill="none"/>
<path d="M788.86 311.35H791.86" stroke="#1f2130" stroke-width="0.9" fill="none"/>
<path d="M796.86 322.09H798.86" stroke="#1f2130" stroke-width="0.9" fill="none"/>
<path d="M799.86 319.11H801.86" stroke="#1f2130" stroke-width="0.9" fill="none"/>
<path d="M804.86 314.14H807.86" stroke="#1f2130" stroke-width="0.9" fill="none"/>
<path d="M810.86 322.09H813.86" stroke="#1f2130" stroke-width="0.9" fill="none"/>
<path d="M807.86 326.66H819.86" stroke="#1f2130" stroke-width="2.2" fill="none"/>
<path d="M746.86 326.66H767.86" stroke="#1f2130" stroke-width="2.4" fill="none"/>
<path d="M822.42 311.35H826.42" stroke="#1f2130" stroke-width="1" fill="none"/>
<path d="M827.42 314.14H833.42" stroke="#1f2130" stroke-width="1" fill="none"/>
<path d="M834.42 308.37H839.42" stroke="#1f2130" stroke-width="1" fill="none"/>
<path d="M841.42 311.35H843.42" stroke="#1f2130" stroke-width="0.9" fill="none"/>
<path d="M843.42 306.98H845.42" stroke="#1f2130" stroke-width="0.9" fill="none"/>
<path d="M846.42 308.37H848.42" stroke="#1f2130" stroke-width="0.9" fill="none"/>
<path d="M849.42 314.14H851.42" stroke="#1f2130" stroke-width="0.9" fill="none"/>
<path d="M852.42 311.35H857.42" stroke="#1f2130" stroke-width="1" fill="none"/>
<path d="M861.42 308.37H866.42" stroke="#1f2130" stroke-width="1" fill="none"/>
<path d="M867.42 306.98H869.42" stroke="#1f2130" stroke-width="0.9" fill="none"/>
<path d="M869.92 304.19H871.92" stroke="#1f2130" stroke-width="0.9" fill="none"/>
<path d="M872.42 306.98H874.42" stroke="#1f2130" stroke-width="0.9" fill="none"/>
<path d="M875.42 311.35H880.42" stroke="#1f2130" stroke-width="1" fill="none"/>
<path d="M883.42 308.37H894.42" stroke="#1f2130" stroke-width="1.2" fill="none"/>
<path d="M887.42 314.14H889.42" stroke="#1f2130" stroke-width="0.9" fill="none"/>
<path d="M889.42 311.35H892.42" stroke="#1f2130" stroke-width="0.9" fill="none"/>
<path d="M897.42 322.09H899.42" stroke="#1f2130" stroke-width="0.9" fill="none"/>
<path d="M900.42 319.11H902.42" stroke="#1f2130" stroke-width="0.9" fill="none"/>
<path d="M905.42 314.14H908.42" stroke="#1f2130" stroke-width="0.9" fill="none"/>
<path d="M911.42 322.09H914.42" stroke="#1f2130" stroke-width="0.9" fill="none"/>
<path d="M908.42 326.66H920.42" stroke="#1f2130" stroke-width="2.2" fill="none"/>
<path d="M847.42 326.66H868.42" stroke="#1f2130" stroke-width="2.4" fill="none"/>
</g>
<line x1="117.5" y1="219" x2="117.5" y2="1031.6" stroke="#33364a" stroke-width="1.1"/>
<rect x="133.7" y="202" width="87" height="15.6" fill="#c8cbd4" opacity="0.85"/>
<path d="M117.9 203.2L130.9 210.6L117.9 218.6Z" fill="#e9eaee" stroke="#33364a" stroke-width="1.1"/>
<text x="135.7" y="215.79" font-size="14.8" fill="#23252f" textLength="82.5" lengthAdjust="spacingAndGlyphs">Breakdown</text>
<line x1="519.74" y1="219" x2="519.74" y2="1031.6" stroke="#33364a" stroke-width="1.1"/>
<rect x="535.94" y="202" width="101.5" height="15.6" fill="#c7c9d2" opacity="0.85"/>
<path d="M520.14 203.2L533.14 210.6L520.14 218.6Z" fill="#e9eaee" stroke="#33364a" stroke-width="1.1"/>
<text x="537.94" y="215.79" font-size="14.8" fill="#23252f" textLength="97" lengthAdjust="spacingAndGlyphs">Instrumental</text>
<text x="948.6" y="1026.74" font-size="26" fill="#8b8e9b" stroke="#8b8e9b" stroke-width="0.9" textLength="40.4" lengthAdjust="spacingAndGlyphs">1/2</text>
<line x1="22.44" y1="1034.4" x2="22.44" y2="1037.8" stroke="#5a5e6e" stroke-width="1.1"/>
<line x1="57.38" y1="1034.4" x2="57.38" y2="1037.8" stroke="#5a5e6e" stroke-width="1.1"/>
<line x1="92.32" y1="1034.4" x2="92.32" y2="1037.8" stroke="#5a5e6e" stroke-width="1.1"/>
<line x1="127.26" y1="1034.4" x2="127.26" y2="1037.8" stroke="#5a5e6e" stroke-width="1.1"/>
<line x1="162.2" y1="1034.4" x2="162.2" y2="1037.8" stroke="#5a5e6e" stroke-width="1.1"/>
<line x1="197.14" y1="1034.4" x2="197.14" y2="1037.8" stroke="#5a5e6e" stroke-width="1.1"/>
<line x1="232.08" y1="1034.4" x2="232.08" y2="1037.8" stroke="#5a5e6e" stroke-width="1.1"/>
<line x1="267.02" y1="1034.4" x2="267.02" y2="1037.8" stroke="#5a5e6e" stroke-width="1.1"/>
<line x1="301.96" y1="1034.4" x2="301.96" y2="1037.8" stroke="#5a5e6e" stroke-width="1.1"/>
<line x1="336.9" y1="1034.4" x2="336.9" y2="1037.8" stroke="#5a5e6e" stroke-width="1.1"/>
<line x1="371.84" y1="1034.4" x2="371.84" y2="1037.8" stroke="#5a5e6e" stroke-width="1.1"/>
<line x1="406.78" y1="1034.4" x2="406.78" y2="1037.8" stroke="#5a5e6e" stroke-width="1.1"/>
<line x1="441.72" y1="1034.4" x2="441.72" y2="1037.8" stroke="#5a5e6e" stroke-width="1.1"/>
<line x1="476.66" y1="1034.4" x2="476.66" y2="1037.8" stroke="#5a5e6e" stroke-width="1.1"/>
<line x1="511.6" y1="1034.4" x2="511.6" y2="1037.8" stroke="#5a5e6e" stroke-width="1.1"/>
<line x1="546.54" y1="1034.4" x2="546.54" y2="1037.8" stroke="#5a5e6e" stroke-width="1.1"/>
<line x1="581.48" y1="1034.4" x2="581.48" y2="1037.8" stroke="#5a5e6e" stroke-width="1.1"/>
<line x1="616.42" y1="1034.4" x2="616.42" y2="1037.8" stroke="#5a5e6e" stroke-width="1.1"/>
<line x1="651.36" y1="1034.4" x2="651.36" y2="1037.8" stroke="#5a5e6e" stroke-width="1.1"/>
<line x1="686.3" y1="1034.4" x2="686.3" y2="1037.8" stroke="#5a5e6e" stroke-width="1.1"/>
<line x1="721.24" y1="1034.4" x2="721.24" y2="1037.8" stroke="#5a5e6e" stroke-width="1.1"/>
<line x1="756.18" y1="1034.4" x2="756.18" y2="1037.8" stroke="#5a5e6e" stroke-width="1.1"/>
<line x1="791.12" y1="1034.4" x2="791.12" y2="1037.8" stroke="#5a5e6e" stroke-width="1.1"/>
<line x1="826.06" y1="1034.4" x2="826.06" y2="1037.8" stroke="#5a5e6e" stroke-width="1.1"/>
<line x1="861" y1="1034.4" x2="861" y2="1037.8" stroke="#5a5e6e" stroke-width="1.1"/>
<line x1="895.94" y1="1034.4" x2="895.94" y2="1037.8" stroke="#5a5e6e" stroke-width="1.1"/>
<line x1="930.88" y1="1034.4" x2="930.88" y2="1037.8" stroke="#5a5e6e" stroke-width="1.1"/>
<line x1="965.82" y1="1034.4" x2="965.82" y2="1037.8" stroke="#5a5e6e" stroke-width="1.1"/>
<path d="M-12.5 1035V1046.6h2.6" fill="none" stroke="#5a5e6e" stroke-width="1.1"/>
<text x="-7.9" y="1051.91" font-size="16.3" fill="#454959" textLength="30.7" lengthAdjust="spacingAndGlyphs">0:50</text>
<path d="M162.2 1035V1046.6h2.6" fill="none" stroke="#5a5e6e" stroke-width="1.1"/>
<text x="166.8" y="1051.91" font-size="16.3" fill="#454959" textLength="30.7" lengthAdjust="spacingAndGlyphs">1:00</text>
<path d="M336.9 1035V1046.6h2.6" fill="none" stroke="#5a5e6e" stroke-width="1.1"/>
<text x="341.5" y="1051.91" font-size="16.3" fill="#454959" textLength="30.7" lengthAdjust="spacingAndGlyphs">1:10</text>
<path d="M511.6 1035V1046.6h2.6" fill="none" stroke="#5a5e6e" stroke-width="1.1"/>
<text x="516.2" y="1051.91" font-size="16.3" fill="#454959" textLength="30.7" lengthAdjust="spacingAndGlyphs">1:20</text>
<path d="M686.3 1035V1046.6h2.6" fill="none" stroke="#5a5e6e" stroke-width="1.1"/>
<text x="690.9" y="1051.91" font-size="16.3" fill="#454959" textLength="30.7" lengthAdjust="spacingAndGlyphs">1:30</text>
<path d="M861 1035V1046.6h2.6" fill="none" stroke="#5a5e6e" stroke-width="1.1"/>
<text x="865.6" y="1051.91" font-size="16.3" fill="#454959" textLength="30.7" lengthAdjust="spacingAndGlyphs">1:40</text>
<rect x="997.2" y="219.3" width="472.1" height="2.8" fill="#858999"/>
<path d="M1010.8 165.7H1035.1A9.2 9.2 0 0 1 1035.1 184.1H1010.8A9.2 9.2 0 0 1 1010.8 165.7Z" fill="#ecedf0" stroke="#4b4f62" stroke-width="1.2"/>
<text x="1022.9" y="180.29" font-size="14.8" fill="#1d1f2c" text-anchor="middle" letter-spacing="0.5" stroke="#1d1f2c" stroke-width="0.2">Del</text>
<rect x="1063.6" y="166.1" width="33.5" height="18" fill="#ecedf0" stroke="#4b4f62" stroke-width="1.2"/>
<line x1="1077.2" y1="178.3" x2="1083.2" y2="171.9" stroke="#1d1f2c" stroke-width="1.5"/>
<circle cx="1077.2" cy="178.3" r="2.4" fill="#1d1f2c"/>
<circle cx="1083.2" cy="171.9" r="2.4" fill="#1d1f2c"/>
<rect x="1105" y="166.1" width="34" height="18" fill="#ecedf0" stroke="#4b4f62" stroke-width="1.2"/>
<rect x="1117.1" y="175.2" width="10.4" height="5.1" fill="#1d1f2c" rx="0.5"/>
<path d="M1119.4 175.6V174a2.9 3.2 0 0 1 5.8 0V175.6" fill="none" stroke="#1d1f2c" stroke-width="1.5"/>
<circle cx="1010.4" cy="202.9" r="9.2" fill="#ecedf0" stroke="#565a6c" stroke-width="1.2"/>
<path d="M1015.5 202.9H1009M1010.5 199.2L1005.2 202.9L1010.5 206.6Z" fill="#9da0ab" stroke="#9da0ab" stroke-width="1.3"/>
<circle cx="1035" cy="202.9" r="9.2" fill="#ecedf0" stroke="#3f4356" stroke-width="1.2"/>
<path d="M1030 202.9H1036.5M1035 199.2L1040.3 202.9L1035 206.6Z" fill="#1d1f2c" stroke="#1d1f2c" stroke-width="1.3"/>
<rect x="997.2" y="222.1" width="175.8" height="26.8" fill="#e2ebb6"/>
<rect x="1173" y="220.3" width="2.6" height="30.4" fill="#858999"/>
<rect x="1291.2" y="220.3" width="2.6" height="30.4" fill="#858999"/>
<rect x="997.2" y="248.7" width="472.1" height="3" fill="#858999"/>
<rect x="1175.6" y="222.3" width="115.6" height="26.4" fill="#cfd1d9"/>
<rect x="1293.8" y="222.3" width="175.5" height="26.4" fill="#cfd1d9"/>
<circle cx="1011.9" cy="235.7" r="9.3" fill="none" stroke="#26262a" stroke-width="1.35" opacity="0.92"/>
<path d="M1009.5 230.6v10.2l7.1 -5.1Z" fill="#26262a"/>
<text x="1033.5" y="240.76" font-size="14.7" fill="#1d1d22" stroke="#1d1d22" stroke-width="0.52" textLength="88" lengthAdjust="spacingAndGlyphs">Coffee Leaf</text>
<rect x="1452.5" y="225.9" width="3.9" height="19.8" fill="#22242f"/>
<rect x="1452.1" y="227.5" width="4.7" height="1.4" fill="#cfd1d9"/>
<rect x="1458.7" y="225.9" width="4.1" height="19.8" fill="#22242f"/>
<rect x="1458.3" y="227.5" width="4.9" height="1.4" fill="#cfd1d9"/>
<rect x="1298" y="226.9" width="69.1" height="18.1" fill="#ffb914" stroke="#6b6452" stroke-width="1.2"/>
<text x="1332.4" y="241.33" font-size="15.2" fill="#15161c" text-anchor="middle" letter-spacing="0.3" stroke="#15161c" stroke-width="0.3">1</text>
<rect x="1375.7" y="226.9" width="30.5" height="18.1" fill="#ecedf0" stroke="#5c6072" stroke-width="1.2"/>
<text x="1391" y="241.47" font-size="15.6" fill="#1d1f2c" text-anchor="middle" stroke="#1d1f2c" stroke-width="0.25">S</text>
<rect x="1414.4" y="226.9" width="30.8" height="18.1" fill="#ff6d70" stroke="#5c6072" stroke-width="1.2"/>
<circle cx="1429.8" cy="236" r="5.3" fill="#1d1f2c"/>
<path d="M1430.8 231.1V236.4Q1430.8 239 1427.4 238.7" fill="none" stroke="#ff6d70" stroke-width="1.6"/>
<rect x="1179.62" y="226.53" width="106.75" height="18.45" fill="#c8cbd4" stroke="#5c6072" stroke-width="1.25"/>
<rect x="997.2" y="251.5" width="175.8" height="134.5" fill="#d9f8ff"/>
<rect x="1173" y="249.7" width="2.6" height="138.1" fill="#858999"/>
<rect x="1291.2" y="249.7" width="2.6" height="138.1" fill="#858999"/>
<rect x="997.2" y="385.8" width="472.1" height="3" fill="#858999"/>
<rect x="1175.6" y="251.7" width="115.6" height="134.1" fill="#dfe0e4"/>
<rect x="1293.8" y="251.7" width="175.5" height="134.1" fill="#dfe0e4"/>
<circle cx="1011.9" cy="265.1" r="9.3" fill="none" stroke="#26262a" stroke-width="1.35" opacity="0.92"/>
<path d="M1007 262.6h9.8l-4.9 6.4Z" fill="#26262a"/>
<text x="1033.5" y="270.16" font-size="14.7" fill="#1d1d22" stroke="#1d1d22" stroke-width="0.52" textLength="46.7" lengthAdjust="spacingAndGlyphs">Strum</text>
<rect x="1452.5" y="255.3" width="3.9" height="127.5" fill="#22242f"/>
<rect x="1452.1" y="266.7" width="4.7" height="2.3" fill="#dfe0e4"/>
<rect x="1458.7" y="255.3" width="4.1" height="127.5" fill="#22242f"/>
<rect x="1458.3" y="266.7" width="4.9" height="2.3" fill="#dfe0e4"/>
<line x1="1454.4" y1="269.7" x2="1454.4" y2="382.8" stroke="#3a3d4a" stroke-width="0.8"/>
<line x1="1460.8" y1="269.7" x2="1460.8" y2="382.8" stroke="#3a3d4a" stroke-width="0.8"/>
<rect x="1298" y="256.3" width="69.1" height="18.1" fill="#ffb914" stroke="#6b6452" stroke-width="1.2"/>
<text x="1332.4" y="270.73" font-size="15.2" fill="#15161c" text-anchor="middle" letter-spacing="0.3" stroke="#15161c" stroke-width="0.3">2</text>
<rect x="1375.7" y="256.3" width="30.5" height="18.1" fill="#ecedf0" stroke="#5c6072" stroke-width="1.2"/>
<text x="1391" y="270.87" font-size="15.6" fill="#1d1f2c" text-anchor="middle" stroke="#1d1f2c" stroke-width="0.25">S</text>
<rect x="1414.4" y="256.3" width="30.8" height="18.1" fill="#ecedf0" stroke="#5c6072" stroke-width="1.2"/>
<circle cx="1429.8" cy="265.4" r="5.3" fill="#1d1f2c"/>
<path d="M1430.8 260.5V265.8Q1430.8 268.4 1427.4 268.1" fill="none" stroke="#ecedf0" stroke-width="1.6"/>
<rect x="997.2" y="388.2" width="175.8" height="26.7" fill="#bdd9b3"/>
<rect x="1173" y="386.4" width="2.6" height="30.3" fill="#858999"/>
<rect x="1291.2" y="386.4" width="2.6" height="30.3" fill="#858999"/>
<rect x="997.2" y="414.7" width="472.1" height="3" fill="#858999"/>
<rect x="1175.6" y="388.4" width="115.6" height="26.3" fill="#cfd1d9"/>
<rect x="1293.8" y="388.4" width="175.5" height="26.3" fill="#cfd1d9"/>
<circle cx="1011.9" cy="401.8" r="9.3" fill="none" stroke="#26262a" stroke-width="1.35" opacity="0.92"/>
<path d="M1009.5 396.7v10.2l7.1 -5.1Z" fill="#26262a"/>
<text x="1033.5" y="406.86" font-size="14.7" fill="#1d1d22" stroke="#1d1d22" stroke-width="0.52" textLength="48.8" lengthAdjust="spacingAndGlyphs">Drums</text>
<rect x="1452.5" y="392" width="3.9" height="19.7" fill="#22242f"/>
<rect x="1452.1" y="393.6" width="4.7" height="1.4" fill="#cfd1d9"/>
<rect x="1458.7" y="392" width="4.1" height="19.7" fill="#22242f"/>
<rect x="1458.3" y="393.6" width="4.9" height="1.4" fill="#cfd1d9"/>
<rect x="1298" y="393" width="69.1" height="18.1" fill="#ffb914" stroke="#6b6452" stroke-width="1.2"/>
<text x="1332.4" y="407.43" font-size="15.2" fill="#15161c" text-anchor="middle" letter-spacing="0.3" stroke="#15161c" stroke-width="0.3">3</text>
<rect x="1375.7" y="393" width="30.5" height="18.1" fill="#ecedf0" stroke="#5c6072" stroke-width="1.2"/>
<text x="1391" y="407.57" font-size="15.6" fill="#1d1f2c" text-anchor="middle" stroke="#1d1f2c" stroke-width="0.25">S</text>
<rect x="1414.4" y="393" width="30.8" height="18.1" fill="#ecedf0" stroke="#5c6072" stroke-width="1.2"/>
<circle cx="1429.8" cy="402.1" r="5.3" fill="#1d1f2c"/>
<path d="M1430.8 397.2V402.5Q1430.8 405.1 1427.4 404.8" fill="none" stroke="#ecedf0" stroke-width="1.6"/>
<rect x="1179.62" y="392.62" width="106.75" height="18.45" fill="#c8cbd4" stroke="#5c6072" stroke-width="1.25"/>
<rect x="997.2" y="417.73" width="175.8" height="26.7" fill="#e0fde8"/>
<rect x="1173" y="415.93" width="2.6" height="30.3" fill="#858999"/>
<rect x="1291.2" y="415.93" width="2.6" height="30.3" fill="#858999"/>
<rect x="997.2" y="444.23" width="472.1" height="3" fill="#858999"/>
<rect x="1175.6" y="417.93" width="115.6" height="26.3" fill="#cfd1d9"/>
<rect x="1293.8" y="417.93" width="175.5" height="26.3" fill="#cfd1d9"/>
<circle cx="1011.9" cy="431.33" r="9.3" fill="none" stroke="#26262a" stroke-width="1.35" opacity="0.92"/>
<path d="M1009.5 426.23v10.2l7.1 -5.1Z" fill="#26262a"/>
<text x="1033.5" y="436.39" font-size="14.7" fill="#1d1d22" stroke="#1d1d22" stroke-width="0.52" textLength="131.6" lengthAdjust="spacingAndGlyphs">The Beat Of Histo</text>
<rect x="1452.5" y="421.53" width="3.9" height="19.7" fill="#22242f"/>
<rect x="1452.1" y="423.13" width="4.7" height="1.4" fill="#cfd1d9"/>
<rect x="1458.7" y="421.53" width="4.1" height="19.7" fill="#22242f"/>
<rect x="1458.3" y="423.13" width="4.9" height="1.4" fill="#cfd1d9"/>
<rect x="1298" y="422.53" width="69.1" height="18.1" fill="#ffb914" stroke="#6b6452" stroke-width="1.2"/>
<text x="1332.4" y="436.96" font-size="15.2" fill="#15161c" text-anchor="middle" letter-spacing="0.3" stroke="#15161c" stroke-width="0.3">4</text>
<rect x="1375.7" y="422.53" width="30.5" height="18.1" fill="#ecedf0" stroke="#5c6072" stroke-width="1.2"/>
<text x="1391" y="437.1" font-size="15.6" fill="#1d1f2c" text-anchor="middle" stroke="#1d1f2c" stroke-width="0.25">S</text>
<rect x="1414.4" y="422.53" width="30.8" height="18.1" fill="#ecedf0" stroke="#5c6072" stroke-width="1.2"/>
<circle cx="1429.8" cy="431.63" r="5.3" fill="#1d1f2c"/>
<path d="M1430.8 426.73V432.03Q1430.8 434.63 1427.4 434.33" fill="none" stroke="#ecedf0" stroke-width="1.6"/>
<rect x="1179.62" y="422.15" width="106.75" height="18.45" fill="#c8cbd4" stroke="#5c6072" stroke-width="1.25"/>
<rect x="997.2" y="447.26" width="175.8" height="26.7" fill="#dff6fc"/>
<rect x="1173" y="445.46" width="2.6" height="30.3" fill="#858999"/>
<rect x="1291.2" y="445.46" width="2.6" height="30.3" fill="#858999"/>
<rect x="997.2" y="473.76" width="472.1" height="3" fill="#858999"/>
<rect x="1175.6" y="447.46" width="115.6" height="26.3" fill="#cfd1d9"/>
<rect x="1293.8" y="447.46" width="175.5" height="26.3" fill="#cfd1d9"/>
<circle cx="1011.9" cy="460.86" r="9.3" fill="none" stroke="#26262a" stroke-width="1.35" opacity="0.92"/>
<path d="M1009.5 455.76v10.2l7.1 -5.1Z" fill="#26262a"/>
<text x="1033.5" y="465.92" font-size="14.7" fill="#1d1d22" stroke="#1d1d22" stroke-width="0.52" textLength="39.8" lengthAdjust="spacingAndGlyphs">Mello</text>
<rect x="1452.5" y="451.06" width="3.9" height="19.7" fill="#22242f"/>
<rect x="1452.1" y="452.66" width="4.7" height="1.4" fill="#cfd1d9"/>
<rect x="1458.7" y="451.06" width="4.1" height="19.7" fill="#22242f"/>
<rect x="1458.3" y="452.66" width="4.9" height="1.4" fill="#cfd1d9"/>
<rect x="1298" y="452.06" width="69.1" height="18.1" fill="#ffb914" stroke="#6b6452" stroke-width="1.2"/>
<text x="1332.4" y="466.49" font-size="15.2" fill="#15161c" text-anchor="middle" letter-spacing="0.3" stroke="#15161c" stroke-width="0.3">5</text>
<rect x="1375.7" y="452.06" width="30.5" height="18.1" fill="#ecedf0" stroke="#5c6072" stroke-width="1.2"/>
<text x="1391" y="466.63" font-size="15.6" fill="#1d1f2c" text-anchor="middle" stroke="#1d1f2c" stroke-width="0.25">S</text>
<rect x="1414.4" y="452.06" width="30.8" height="18.1" fill="#ecedf0" stroke="#5c6072" stroke-width="1.2"/>
<circle cx="1429.8" cy="461.16" r="5.3" fill="#1d1f2c"/>
<path d="M1430.8 456.26V461.56Q1430.8 464.16 1427.4 463.86" fill="none" stroke="#ecedf0" stroke-width="1.6"/>
<rect x="1179.62" y="451.69" width="106.75" height="18.45" fill="#c8cbd4" stroke="#5c6072" stroke-width="1.25"/>
<rect x="997.2" y="476.79" width="175.8" height="26.7" fill="#a9c0d6"/>
<rect x="1173" y="474.99" width="2.6" height="30.3" fill="#858999"/>
<rect x="1291.2" y="474.99" width="2.6" height="30.3" fill="#858999"/>
<rect x="997.2" y="503.29" width="472.1" height="3" fill="#858999"/>
<rect x="1175.6" y="476.99" width="115.6" height="26.3" fill="#cfd1d9"/>
<rect x="1293.8" y="476.99" width="175.5" height="26.3" fill="#cfd1d9"/>
<circle cx="1011.9" cy="490.39" r="9.3" fill="none" stroke="#26262a" stroke-width="1.35" opacity="0.92"/>
<path d="M1009.5 485.29v10.2l7.1 -5.1Z" fill="#26262a"/>
<text x="1033.5" y="495.45" font-size="14.7" fill="#1d1d22" stroke="#1d1d22" stroke-width="0.52" textLength="73.2" lengthAdjust="spacingAndGlyphs">Rose Bass</text>
<rect x="1452.5" y="480.59" width="3.9" height="19.7" fill="#22242f"/>
<rect x="1452.1" y="482.19" width="4.7" height="1.4" fill="#cfd1d9"/>
<rect x="1458.7" y="480.59" width="4.1" height="19.7" fill="#22242f"/>
<rect x="1458.3" y="482.19" width="4.9" height="1.4" fill="#cfd1d9"/>
<rect x="1298" y="481.59" width="69.1" height="18.1" fill="#ffb914" stroke="#6b6452" stroke-width="1.2"/>
<text x="1332.4" y="496.02" font-size="15.2" fill="#15161c" text-anchor="middle" letter-spacing="0.3" stroke="#15161c" stroke-width="0.3">6</text>
<rect x="1375.7" y="481.59" width="30.5" height="18.1" fill="#ecedf0" stroke="#5c6072" stroke-width="1.2"/>
<text x="1391" y="496.16" font-size="15.6" fill="#1d1f2c" text-anchor="middle" stroke="#1d1f2c" stroke-width="0.25">S</text>
<rect x="1414.4" y="481.59" width="30.8" height="18.1" fill="#ecedf0" stroke="#5c6072" stroke-width="1.2"/>
<circle cx="1429.8" cy="490.69" r="5.3" fill="#1d1f2c"/>
<path d="M1430.8 485.79V491.09Q1430.8 493.69 1427.4 493.39" fill="none" stroke="#ecedf0" stroke-width="1.6"/>
<rect x="1179.62" y="481.22" width="106.75" height="18.45" fill="#c8cbd4" stroke="#5c6072" stroke-width="1.25"/>
<rect x="997.2" y="506.32" width="175.8" height="26.7" fill="#c7bdd3"/>
<rect x="1173" y="504.52" width="2.6" height="30.3" fill="#858999"/>
<rect x="1291.2" y="504.52" width="2.6" height="30.3" fill="#858999"/>
<rect x="997.2" y="532.82" width="472.1" height="3" fill="#858999"/>
<rect x="1175.6" y="506.52" width="115.6" height="26.3" fill="#cfd1d9"/>
<rect x="1293.8" y="506.52" width="175.5" height="26.3" fill="#cfd1d9"/>
<circle cx="1011.9" cy="519.92" r="9.3" fill="none" stroke="#26262a" stroke-width="1.35" opacity="0.92"/>
<path d="M1009.5 514.82v10.2l7.1 -5.1Z" fill="#26262a"/>
<text x="1033.5" y="524.98" font-size="14.7" fill="#1d1d22" stroke="#1d1d22" stroke-width="0.52" textLength="97.9" lengthAdjust="spacingAndGlyphs">Sub Sub Bass</text>
<rect x="1452.5" y="510.12" width="3.9" height="19.7" fill="#22242f"/>
<rect x="1452.1" y="511.72" width="4.7" height="1.4" fill="#cfd1d9"/>
<rect x="1458.7" y="510.12" width="4.1" height="19.7" fill="#22242f"/>
<rect x="1458.3" y="511.72" width="4.9" height="1.4" fill="#cfd1d9"/>
<rect x="1298" y="511.12" width="69.1" height="18.1" fill="#ffb914" stroke="#6b6452" stroke-width="1.2"/>
<text x="1332.4" y="525.55" font-size="15.2" fill="#15161c" text-anchor="middle" letter-spacing="0.3" stroke="#15161c" stroke-width="0.3">7</text>
<rect x="1375.7" y="511.12" width="30.5" height="18.1" fill="#ecedf0" stroke="#5c6072" stroke-width="1.2"/>
<text x="1391" y="525.69" font-size="15.6" fill="#1d1f2c" text-anchor="middle" stroke="#1d1f2c" stroke-width="0.25">S</text>
<rect x="1414.4" y="511.12" width="30.8" height="18.1" fill="#ecedf0" stroke="#5c6072" stroke-width="1.2"/>
<circle cx="1429.8" cy="520.22" r="5.3" fill="#1d1f2c"/>
<path d="M1430.8 515.32V520.62Q1430.8 523.22 1427.4 522.92" fill="none" stroke="#ecedf0" stroke-width="1.6"/>
<rect x="1179.62" y="510.75" width="106.75" height="18.45" fill="#c8cbd4" stroke="#5c6072" stroke-width="1.25"/>
<rect x="997.2" y="535.85" width="175.8" height="26.7" fill="#c997d7"/>
<rect x="1173" y="534.05" width="2.6" height="30.3" fill="#858999"/>
<rect x="1291.2" y="534.05" width="2.6" height="30.3" fill="#858999"/>
<rect x="997.2" y="562.35" width="472.1" height="3" fill="#858999"/>
<rect x="1175.6" y="536.05" width="115.6" height="26.3" fill="#cfd1d9"/>
<rect x="1293.8" y="536.05" width="175.5" height="26.3" fill="#cfd1d9"/>
<circle cx="1011.9" cy="549.45" r="9.3" fill="none" stroke="#26262a" stroke-width="1.35" opacity="0.92"/>
<path d="M1009.5 544.35v10.2l7.1 -5.1Z" fill="#26262a"/>
<text x="1033.5" y="554.51" font-size="14.7" fill="#1d1d22" stroke="#1d1d22" stroke-width="0.52" textLength="84.3" lengthAdjust="spacingAndGlyphs">Guit Layter</text>
<rect x="1452.5" y="539.65" width="3.9" height="19.7" fill="#22242f"/>
<rect x="1452.1" y="541.25" width="4.7" height="1.4" fill="#cfd1d9"/>
<rect x="1458.7" y="539.65" width="4.1" height="19.7" fill="#22242f"/>
<rect x="1458.3" y="541.25" width="4.9" height="1.4" fill="#cfd1d9"/>
<rect x="1298" y="540.65" width="69.1" height="18.1" fill="#ffb914" stroke="#6b6452" stroke-width="1.2"/>
<text x="1332.4" y="555.08" font-size="15.2" fill="#15161c" text-anchor="middle" letter-spacing="0.3" stroke="#15161c" stroke-width="0.3">8</text>
<rect x="1375.7" y="540.65" width="30.5" height="18.1" fill="#ecedf0" stroke="#5c6072" stroke-width="1.2"/>
<text x="1391" y="555.22" font-size="15.6" fill="#1d1f2c" text-anchor="middle" stroke="#1d1f2c" stroke-width="0.25">S</text>
<rect x="1414.4" y="540.65" width="30.8" height="18.1" fill="#ecedf0" stroke="#5c6072" stroke-width="1.2"/>
<circle cx="1429.8" cy="549.75" r="5.3" fill="#1d1f2c"/>
<path d="M1430.8 544.85V550.15Q1430.8 552.75 1427.4 552.45" fill="none" stroke="#ecedf0" stroke-width="1.6"/>
<rect x="1179.62" y="540.27" width="106.75" height="18.45" fill="#c8cbd4" stroke="#5c6072" stroke-width="1.25"/>
<rect x="997.2" y="565.38" width="175.8" height="26.7" fill="#dcb1ab"/>
<rect x="1173" y="563.58" width="2.6" height="30.3" fill="#858999"/>
<rect x="1291.2" y="563.58" width="2.6" height="30.3" fill="#858999"/>
<rect x="997.2" y="591.88" width="472.1" height="3" fill="#858999"/>
<rect x="1175.6" y="565.58" width="115.6" height="26.3" fill="#cfd1d9"/>
<rect x="1293.8" y="565.58" width="175.5" height="26.3" fill="#cfd1d9"/>
<circle cx="1011.9" cy="578.98" r="9.3" fill="none" stroke="#26262a" stroke-width="1.35" opacity="0.92"/>
<path d="M1009.5 573.88v10.2l7.1 -5.1Z" fill="#26262a"/>
<text x="1033.5" y="584.04" font-size="14.7" fill="#1d1d22" stroke="#1d1d22" stroke-width="0.52" textLength="119.9" lengthAdjust="spacingAndGlyphs">Transform Seed</text>
<rect x="1452.5" y="569.18" width="3.9" height="19.7" fill="#22242f"/>
<rect x="1452.1" y="570.78" width="4.7" height="1.4" fill="#cfd1d9"/>
<rect x="1458.7" y="569.18" width="4.1" height="19.7" fill="#22242f"/>
<rect x="1458.3" y="570.78" width="4.9" height="1.4" fill="#cfd1d9"/>
<rect x="1298" y="570.18" width="69.1" height="18.1" fill="#ffb914" stroke="#6b6452" stroke-width="1.2"/>
<text x="1332.4" y="584.61" font-size="15.2" fill="#15161c" text-anchor="middle" letter-spacing="0.3" stroke="#15161c" stroke-width="0.3">9</text>
<rect x="1375.7" y="570.18" width="30.5" height="18.1" fill="#ecedf0" stroke="#5c6072" stroke-width="1.2"/>
<text x="1391" y="584.75" font-size="15.6" fill="#1d1f2c" text-anchor="middle" stroke="#1d1f2c" stroke-width="0.25">S</text>
<rect x="1414.4" y="570.18" width="30.8" height="18.1" fill="#ecedf0" stroke="#5c6072" stroke-width="1.2"/>
<circle cx="1429.8" cy="579.28" r="5.3" fill="#1d1f2c"/>
<path d="M1430.8 574.38V579.68Q1430.8 582.28 1427.4 581.98" fill="none" stroke="#ecedf0" stroke-width="1.6"/>
<rect x="1179.62" y="569.8" width="106.75" height="18.45" fill="#c8cbd4" stroke="#5c6072" stroke-width="1.25"/>
<rect x="997.2" y="594.91" width="175.8" height="26.7" fill="#d5a43b"/>
<rect x="1173" y="593.11" width="2.6" height="30.3" fill="#858999"/>
<rect x="1291.2" y="593.11" width="2.6" height="30.3" fill="#858999"/>
<rect x="997.2" y="621.41" width="472.1" height="3" fill="#858999"/>
<rect x="1175.6" y="595.11" width="115.6" height="26.3" fill="#cfd1d9"/>
<rect x="1293.8" y="595.11" width="175.5" height="26.3" fill="#cfd1d9"/>
<circle cx="1011.9" cy="608.51" r="9.3" fill="none" stroke="#26262a" stroke-width="1.35" opacity="0.92"/>
<path d="M1009.5 603.41v10.2l7.1 -5.1Z" fill="#26262a"/>
<text x="1033.5" y="613.57" font-size="14.7" fill="#1d1d22" stroke="#1d1d22" stroke-width="0.52" textLength="59.6" lengthAdjust="spacingAndGlyphs">Vacuum</text>
<rect x="1452.5" y="598.71" width="3.9" height="19.7" fill="#22242f"/>
<rect x="1452.1" y="600.31" width="4.7" height="1.4" fill="#cfd1d9"/>
<rect x="1458.7" y="598.71" width="4.1" height="19.7" fill="#22242f"/>
<rect x="1458.3" y="600.31" width="4.9" height="1.4" fill="#cfd1d9"/>
<rect x="1298" y="599.71" width="69.1" height="18.1" fill="#ffb914" stroke="#6b6452" stroke-width="1.2"/>
<text x="1332.4" y="614.14" font-size="15.2" fill="#15161c" text-anchor="middle" letter-spacing="0.3" stroke="#15161c" stroke-width="0.3">10</text>
<rect x="1375.7" y="599.71" width="30.5" height="18.1" fill="#ecedf0" stroke="#5c6072" stroke-width="1.2"/>
<text x="1391" y="614.28" font-size="15.6" fill="#1d1f2c" text-anchor="middle" stroke="#1d1f2c" stroke-width="0.25">S</text>
<rect x="1414.4" y="599.71" width="30.8" height="18.1" fill="#ecedf0" stroke="#5c6072" stroke-width="1.2"/>
<circle cx="1429.8" cy="608.81" r="5.3" fill="#1d1f2c"/>
<path d="M1430.8 603.91V609.21Q1430.8 611.81 1427.4 611.51" fill="none" stroke="#ecedf0" stroke-width="1.6"/>
<rect x="1179.62" y="599.34" width="106.75" height="18.45" fill="#c8cbd4" stroke="#5c6072" stroke-width="1.25"/>
<rect x="997.2" y="624.44" width="175.8" height="26.7" fill="#fcf492"/>
<rect x="1173" y="622.64" width="2.6" height="30.3" fill="#858999"/>
<rect x="1291.2" y="622.64" width="2.6" height="30.3" fill="#858999"/>
<rect x="997.2" y="650.94" width="472.1" height="3" fill="#858999"/>
<rect x="1175.6" y="624.64" width="115.6" height="26.3" fill="#cfd1d9"/>
<rect x="1293.8" y="624.64" width="175.5" height="26.3" fill="#cfd1d9"/>
<circle cx="1011.9" cy="638.04" r="9.3" fill="none" stroke="#26262a" stroke-width="1.35" opacity="0.92"/>
<path d="M1009.5 632.94v10.2l7.1 -5.1Z" fill="#26262a"/>
<text x="1033.5" y="643.1" font-size="14.7" fill="#1d1d22" stroke="#1d1d22" stroke-width="0.52" textLength="80.7" lengthAdjust="spacingAndGlyphs">Vocal Main</text>
<rect x="1452.5" y="628.24" width="3.9" height="19.7" fill="#22242f"/>
<rect x="1452.1" y="629.84" width="4.7" height="1.4" fill="#cfd1d9"/>
<rect x="1458.7" y="628.24" width="4.1" height="19.7" fill="#22242f"/>
<rect x="1458.3" y="629.84" width="4.9" height="1.4" fill="#cfd1d9"/>
<rect x="1298" y="629.24" width="69.1" height="18.1" fill="#ffb914" stroke="#6b6452" stroke-width="1.2"/>
<text x="1332.4" y="643.67" font-size="15.2" fill="#15161c" text-anchor="middle" letter-spacing="0.3" stroke="#15161c" stroke-width="0.3">11</text>
<rect x="1375.7" y="629.24" width="30.5" height="18.1" fill="#ecedf0" stroke="#5c6072" stroke-width="1.2"/>
<text x="1391" y="643.81" font-size="15.6" fill="#1d1f2c" text-anchor="middle" stroke="#1d1f2c" stroke-width="0.25">S</text>
<rect x="1414.4" y="629.24" width="30.8" height="18.1" fill="#ecedf0" stroke="#5c6072" stroke-width="1.2"/>
<circle cx="1429.8" cy="638.34" r="5.3" fill="#858894"/>
<rect x="1179.62" y="628.87" width="106.75" height="18.45" fill="#c8cbd4" stroke="#5c6072" stroke-width="1.25"/>
<rect x="997.2" y="653.97" width="175.8" height="26.7" fill="#fcf492"/>
<rect x="1173" y="652.17" width="2.6" height="30.3" fill="#858999"/>
<rect x="1291.2" y="652.17" width="2.6" height="30.3" fill="#858999"/>
<rect x="997.2" y="680.47" width="472.1" height="3" fill="#858999"/>
<rect x="1175.6" y="654.17" width="115.6" height="26.3" fill="#cfd1d9"/>
<rect x="1293.8" y="654.17" width="175.5" height="26.3" fill="#cfd1d9"/>
<circle cx="1011.9" cy="667.57" r="9.3" fill="none" stroke="#26262a" stroke-width="1.35" opacity="0.92"/>
<path d="M1009.5 662.47v10.2l7.1 -5.1Z" fill="#26262a"/>
<text x="1033.5" y="672.63" font-size="14.7" fill="#1d1d22" stroke="#1d1d22" stroke-width="0.52" textLength="113.6" lengthAdjust="spacingAndGlyphs">Vocal Harmony</text>
<rect x="1452.5" y="657.77" width="3.9" height="19.7" fill="#22242f"/>
<rect x="1452.1" y="659.37" width="4.7" height="1.4" fill="#cfd1d9"/>
<rect x="1458.7" y="657.77" width="4.1" height="19.7" fill="#22242f"/>
<rect x="1458.3" y="659.37" width="4.9" height="1.4" fill="#cfd1d9"/>
<rect x="1298" y="658.77" width="69.1" height="18.1" fill="#ffb914" stroke="#6b6452" stroke-width="1.2"/>
<text x="1332.4" y="673.2" font-size="15.2" fill="#15161c" text-anchor="middle" letter-spacing="0.3" stroke="#15161c" stroke-width="0.3">12</text>
<rect x="1375.7" y="658.77" width="30.5" height="18.1" fill="#ecedf0" stroke="#5c6072" stroke-width="1.2"/>
<text x="1391" y="673.34" font-size="15.6" fill="#1d1f2c" text-anchor="middle" stroke="#1d1f2c" stroke-width="0.25">S</text>
<rect x="1414.4" y="658.77" width="30.8" height="18.1" fill="#ecedf0" stroke="#5c6072" stroke-width="1.2"/>
<circle cx="1429.8" cy="667.87" r="5.3" fill="#858894"/>
<rect x="1179.62" y="658.39" width="106.75" height="18.45" fill="#c8cbd4" stroke="#5c6072" stroke-width="1.25"/>
<rect x="997.2" y="683.5" width="175.8" height="26.7" fill="#fcf492"/>
<rect x="1173" y="681.7" width="2.6" height="30.3" fill="#858999"/>
<rect x="1291.2" y="681.7" width="2.6" height="30.3" fill="#858999"/>
<rect x="997.2" y="710" width="472.1" height="3" fill="#858999"/>
<rect x="1175.6" y="683.7" width="115.6" height="26.3" fill="#cfd1d9"/>
<rect x="1293.8" y="683.7" width="175.5" height="26.3" fill="#cfd1d9"/>
<circle cx="1011.9" cy="697.1" r="9.3" fill="none" stroke="#26262a" stroke-width="1.35" opacity="0.92"/>
<path d="M1009.5 692v10.2l7.1 -5.1Z" fill="#26262a"/>
<text x="1033.5" y="702.16" font-size="14.7" fill="#1d1d22" stroke="#1d1d22" stroke-width="0.52" textLength="78.9" lengthAdjust="spacingAndGlyphs">Vocal Hum</text>
<rect x="1452.5" y="687.3" width="3.9" height="19.7" fill="#22242f"/>
<rect x="1452.1" y="688.9" width="4.7" height="1.4" fill="#cfd1d9"/>
<rect x="1458.7" y="687.3" width="4.1" height="19.7" fill="#22242f"/>
<rect x="1458.3" y="688.9" width="4.9" height="1.4" fill="#cfd1d9"/>
<rect x="1298" y="688.3" width="69.1" height="18.1" fill="#ffb914" stroke="#6b6452" stroke-width="1.2"/>
<text x="1332.4" y="702.73" font-size="15.2" fill="#15161c" text-anchor="middle" letter-spacing="0.3" stroke="#15161c" stroke-width="0.3">13</text>
<rect x="1375.7" y="688.3" width="30.5" height="18.1" fill="#ecedf0" stroke="#5c6072" stroke-width="1.2"/>
<text x="1391" y="702.87" font-size="15.6" fill="#1d1f2c" text-anchor="middle" stroke="#1d1f2c" stroke-width="0.25">S</text>
<rect x="1414.4" y="688.3" width="30.8" height="18.1" fill="#ecedf0" stroke="#5c6072" stroke-width="1.2"/>
<circle cx="1429.8" cy="697.4" r="5.3" fill="#858894"/>
<rect x="1179.62" y="687.93" width="106.75" height="18.45" fill="#c8cbd4" stroke="#5c6072" stroke-width="1.25"/>
<rect x="997.2" y="713.03" width="175.8" height="26.7" fill="#fcf492"/>
<rect x="1173" y="711.23" width="2.6" height="30.3" fill="#858999"/>
<rect x="1291.2" y="711.23" width="2.6" height="30.3" fill="#858999"/>
<rect x="997.2" y="739.53" width="472.1" height="3" fill="#858999"/>
<rect x="1175.6" y="713.23" width="115.6" height="26.3" fill="#cfd1d9"/>
<rect x="1293.8" y="713.23" width="175.5" height="26.3" fill="#cfd1d9"/>
<circle cx="1011.9" cy="726.63" r="9.3" fill="none" stroke="#26262a" stroke-width="1.35" opacity="0.92"/>
<path d="M1009.5 721.53v10.2l7.1 -5.1Z" fill="#26262a"/>
<text x="1033.5" y="731.69" font-size="14.7" fill="#1d1d22" stroke="#1d1d22" stroke-width="0.52" textLength="82.8" lengthAdjust="spacingAndGlyphs">Vocal Adlib</text>
<rect x="1452.5" y="716.83" width="3.9" height="19.7" fill="#22242f"/>
<rect x="1452.1" y="718.43" width="4.7" height="1.4" fill="#cfd1d9"/>
<rect x="1458.7" y="716.83" width="4.1" height="19.7" fill="#22242f"/>
<rect x="1458.3" y="718.43" width="4.9" height="1.4" fill="#cfd1d9"/>
<rect x="1298" y="717.83" width="69.1" height="18.1" fill="#ffb914" stroke="#6b6452" stroke-width="1.2"/>
<text x="1332.4" y="732.26" font-size="15.2" fill="#15161c" text-anchor="middle" letter-spacing="0.3" stroke="#15161c" stroke-width="0.3">14</text>
<rect x="1375.7" y="717.83" width="30.5" height="18.1" fill="#ecedf0" stroke="#5c6072" stroke-width="1.2"/>
<text x="1391" y="732.4" font-size="15.6" fill="#1d1f2c" text-anchor="middle" stroke="#1d1f2c" stroke-width="0.25">S</text>
<rect x="1414.4" y="717.83" width="30.8" height="18.1" fill="#ecedf0" stroke="#5c6072" stroke-width="1.2"/>
<circle cx="1429.8" cy="726.93" r="5.3" fill="#858894"/>
<rect x="1179.62" y="717.46" width="106.75" height="18.45" fill="#c8cbd4" stroke="#5c6072" stroke-width="1.25"/>
<rect x="997.2" y="742.56" width="175.8" height="26.7" fill="#e2ebb6"/>
<rect x="1173" y="740.76" width="2.6" height="30.3" fill="#858999"/>
<rect x="1291.2" y="740.76" width="2.6" height="30.3" fill="#858999"/>
<rect x="997.2" y="769.06" width="472.1" height="3" fill="#858999"/>
<rect x="1175.6" y="742.76" width="115.6" height="26.3" fill="#cfd1d9"/>
<rect x="1293.8" y="742.76" width="175.5" height="26.3" fill="#cfd1d9"/>
<circle cx="1011.9" cy="756.16" r="9.3" fill="none" stroke="#26262a" stroke-width="1.35" opacity="0.92"/>
<path d="M1009.5 751.06v10.2l7.1 -5.1Z" fill="#26262a"/>
<text x="1033.5" y="761.22" font-size="14.7" fill="#1d1d22" stroke="#1d1d22" stroke-width="0.52" textLength="77.7" lengthAdjust="spacingAndGlyphs">Rainstorm</text>
<rect x="1452.5" y="746.36" width="3.9" height="19.7" fill="#22242f"/>
<rect x="1452.1" y="747.96" width="4.7" height="1.4" fill="#cfd1d9"/>
<rect x="1458.7" y="746.36" width="4.1" height="19.7" fill="#22242f"/>
<rect x="1458.3" y="747.96" width="4.9" height="1.4" fill="#cfd1d9"/>
<rect x="1298" y="747.36" width="69.1" height="18.1" fill="#ffb914" stroke="#6b6452" stroke-width="1.2"/>
<text x="1332.4" y="761.79" font-size="15.2" fill="#15161c" text-anchor="middle" letter-spacing="0.3" stroke="#15161c" stroke-width="0.3">15</text>
<rect x="1375.7" y="747.36" width="30.5" height="18.1" fill="#ecedf0" stroke="#5c6072" stroke-width="1.2"/>
<text x="1391" y="761.93" font-size="15.6" fill="#1d1f2c" text-anchor="middle" stroke="#1d1f2c" stroke-width="0.25">S</text>
<rect x="1414.4" y="747.36" width="30.8" height="18.1" fill="#ecedf0" stroke="#5c6072" stroke-width="1.2"/>
<circle cx="1429.8" cy="756.46" r="5.3" fill="#1d1f2c"/>
<path d="M1430.8 751.56V756.86Q1430.8 759.46 1427.4 759.16" fill="none" stroke="#ecedf0" stroke-width="1.6"/>
<rect x="1179.62" y="746.99" width="106.75" height="18.45" fill="#c8cbd4" stroke="#5c6072" stroke-width="1.25"/>
<rect x="997.2" y="941.9" width="472.1" height="3.9" fill="#858999"/>
<rect x="997.2" y="945.4" width="175.8" height="27.6" fill="#d0d0d0"/>
<rect x="1173" y="943.6" width="2.6" height="31.2" fill="#858999"/>
<rect x="1291.2" y="943.6" width="2.6" height="31.2" fill="#858999"/>
<rect x="997.2" y="972.8" width="472.1" height="3" fill="#858999"/>
<rect x="1175.6" y="945.6" width="115.6" height="27.2" fill="#cfd1d9"/>
<rect x="1293.8" y="945.6" width="175.5" height="27.2" fill="#cfd1d9"/>
<circle cx="1011.9" cy="959" r="9.3" fill="none" stroke="#26262a" stroke-width="1.35" opacity="0.92"/>
<path d="M1009.5 953.9v10.2l7.1 -5.1Z" fill="#26262a"/>
<text x="1033.5" y="964.06" font-size="14.7" fill="#1d1d22" stroke="#1d1d22" stroke-width="0.52" textLength="67.8" lengthAdjust="spacingAndGlyphs">A Reverb</text>
<rect x="1452.5" y="949.2" width="3.9" height="20.6" fill="#22242f"/>
<rect x="1452.1" y="950.8" width="4.7" height="1.4" fill="#cfd1d9"/>
<rect x="1458.7" y="949.2" width="4.1" height="20.6" fill="#22242f"/>
<rect x="1458.3" y="950.8" width="4.9" height="1.4" fill="#cfd1d9"/>
<rect x="1298" y="950.2" width="69.1" height="18.1" fill="#ffb914" stroke="#6b6452" stroke-width="1.2"/>
<text x="1332.4" y="964.63" font-size="15.2" fill="#15161c" text-anchor="middle" letter-spacing="0.3" stroke="#15161c" stroke-width="0.3">A</text>
<rect x="1375.7" y="950.2" width="23.9" height="18.1" fill="#f3f3f5" stroke="#5c6072" stroke-width="1.2"/>
<text x="1387.6" y="964.77" font-size="15.6" fill="#1d1f2c" text-anchor="middle" stroke="#1d1f2c" stroke-width="0.25">S</text>
<rect x="1408.2" y="950.2" width="36.8" height="18.1" fill="#ffb914" stroke="#6b6452" stroke-width="1.2"/>
<text x="1426.6" y="964.56" font-size="15" fill="#15161c" text-anchor="middle" letter-spacing="0.35">Post</text>
<rect x="1179.62" y="949.83" width="106.75" height="18.45" fill="#c8cbd4" stroke="#5c6072" stroke-width="1.25"/>
<rect x="997.2" y="975.6" width="175.8" height="26.5" fill="#9e9e9e"/>
<rect x="1173" y="973.8" width="2.6" height="30.1" fill="#858999"/>
<rect x="1291.2" y="973.8" width="2.6" height="30.1" fill="#858999"/>
<rect x="997.2" y="1001.9" width="472.1" height="3" fill="#858999"/>
<rect x="1175.6" y="975.8" width="115.6" height="26.1" fill="#cfd1d9"/>
<rect x="1293.8" y="975.8" width="175.5" height="26.1" fill="#cfd1d9"/>
<circle cx="1011.9" cy="989.2" r="9.3" fill="none" stroke="#26262a" stroke-width="1.35" opacity="0.92"/>
<path d="M1009.5 984.1v10.2l7.1 -5.1Z" fill="#26262a"/>
<text x="1033.5" y="994.26" font-size="14.7" fill="#1d1d22" stroke="#1d1d22" stroke-width="0.52" textLength="55.7" lengthAdjust="spacingAndGlyphs">B Delay</text>
<rect x="1452.5" y="979.4" width="3.9" height="19.5" fill="#22242f"/>
<rect x="1452.1" y="981" width="4.7" height="1.4" fill="#cfd1d9"/>
<rect x="1458.7" y="979.4" width="4.1" height="19.5" fill="#22242f"/>
<rect x="1458.3" y="981" width="4.9" height="1.4" fill="#cfd1d9"/>
<rect x="1298" y="980.4" width="69.1" height="18.1" fill="#ffb914" stroke="#6b6452" stroke-width="1.2"/>
<text x="1332.4" y="994.83" font-size="15.2" fill="#15161c" text-anchor="middle" letter-spacing="0.3" stroke="#15161c" stroke-width="0.3">B</text>
<rect x="1375.7" y="980.4" width="23.9" height="18.1" fill="#f3f3f5" stroke="#5c6072" stroke-width="1.2"/>
<text x="1387.6" y="994.97" font-size="15.6" fill="#1d1f2c" text-anchor="middle" stroke="#1d1f2c" stroke-width="0.25">S</text>
<rect x="1408.2" y="980.4" width="36.8" height="18.1" fill="#ffb914" stroke="#6b6452" stroke-width="1.2"/>
<text x="1426.6" y="994.76" font-size="15" fill="#15161c" text-anchor="middle" letter-spacing="0.35">Post</text>
<rect x="1179.62" y="980.02" width="106.75" height="18.45" fill="#c8cbd4" stroke="#5c6072" stroke-width="1.25"/>
<rect x="997.2" y="1004.6" width="175.8" height="27.2" fill="#464646"/>
<rect x="1173" y="1002.8" width="2.6" height="30.8" fill="#858999"/>
<rect x="1291.2" y="1002.8" width="2.6" height="30.8" fill="#858999"/>
<rect x="997.2" y="1031.6" width="472.1" height="3" fill="#858999"/>
<rect x="1175.6" y="1004.8" width="115.6" height="26.8" fill="#cfd1d9"/>
<rect x="1293.8" y="1004.8" width="175.5" height="26.8" fill="#cfd1d9"/>
<circle cx="1011.9" cy="1018.2" r="9.3" fill="none" stroke="#d9d9d9" stroke-width="1.35" opacity="0.92"/>
<path d="M1009.5 1013.1v10.2l7.1 -5.1Z" fill="#d9d9d9"/>
<text x="1036.2" y="1023.26" font-size="14.7" fill="#e9e9e9" stroke="#e9e9e9" stroke-width="0.52" textLength="36.1" lengthAdjust="spacingAndGlyphs">Main</text>
<rect x="1452.5" y="1008.4" width="3.9" height="20.2" fill="#22242f"/>
<rect x="1452.1" y="1010" width="4.7" height="1.4" fill="#cfd1d9"/>
<rect x="1458.7" y="1008.4" width="4.1" height="20.2" fill="#22242f"/>
<rect x="1458.3" y="1010" width="4.9" height="1.4" fill="#cfd1d9"/>
<rect x="1298" y="1009.4" width="69.1" height="18.1" fill="#f3f3f5" stroke="#5c6072" stroke-width="1.2"/>
<rect x="1298.4" y="1009.8" width="57.8" height="17.3" fill="#00cfe4"/>
<text x="1331.6" y="1023.73" font-size="15.2" fill="#1d1f2c" text-anchor="middle">0</text>
<rect x="1375.7" y="1009.4" width="69.5" height="18.1" fill="#f3f3f5" stroke="#5c6072" stroke-width="1.2"/>
<rect x="1376.1" y="1009.8" width="57.3" height="17.3" fill="#2d8cf0"/>
<text x="1409.4" y="1023.73" font-size="15.2" fill="#1d1f2c" text-anchor="middle">0</text>
<rect x="1179.9" y="1009.1" width="106.5" height="18.6" fill="#f5f5f7" stroke="#5c6072" stroke-width="1.2"/>
<rect x="1182.5" y="1015.8" width="2.8" height="8.9" fill="#1d1f2c"/>
<rect x="1182.5" y="1012" width="2.8" height="2" fill="#1d1f2c"/>
<rect x="1187.3" y="1015.8" width="2.8" height="8.9" fill="#1d1f2c"/>
<rect x="1187.3" y="1012" width="2.8" height="2" fill="#1d1f2c"/>
<text x="1196.5" y="1023.67" font-size="15.6" fill="#1d1f2c" textLength="24.7" lengthAdjust="spacingAndGlyphs">1/2</text>
<path d="M1274.1 1015.2h9.8l-4.9 6.4Z" fill="#1d1f2c"/>
<rect x="1179.75" y="256.05" width="106.6" height="18.2" fill="#f5f5f7" stroke="#5c6072" stroke-width="1.3"/>
<clipPath id="dd255"><rect x="1180" y="255.4" width="92.6" height="19.5"/></clipPath>
<text x="1182.8" y="269.81" font-size="15" fill="#1d1f2c" letter-spacing="0.5" clip-path="url(#dd255)">All Ins</text>
<path d="M1274.1 261.75h9.8l-4.9 6.4Z" fill="#1d1f2c"/>
<rect x="1179.75" y="282.35" width="106.6" height="18.1" fill="#f5f5f7" stroke="#5c6072" stroke-width="1.3"/>
<clipPath id="dd281"><rect x="1180" y="281.7" width="92.6" height="19.4"/></clipPath>
<text x="1197" y="296.06" font-size="15" fill="#1d1f2c" letter-spacing="0.5" clip-path="url(#dd281)">All Channels</text>
<path d="M1274.1 288h9.8l-4.9 6.4Z" fill="#1d1f2c"/>
<line x1="1185.8" y1="286.7" x2="1185.8" y2="296.1" stroke="#1d1f2c" stroke-width="1.4"/>
<circle cx="1185.8" cy="286.9" r="1.9" fill="#1d1f2c"/>
<circle cx="1185.8" cy="291.3" r="1.9" fill="#1d1f2c"/>
<circle cx="1185.8" cy="295.7" r="1.9" fill="#1d1f2c"/>
<rect x="1179.75" y="308.75" width="24.6" height="18.3" fill="#ecedf0" stroke="#5c6072" stroke-width="1.3"/>
<text x="1192.1" y="322.46" font-size="15" fill="#1d1f2c" text-anchor="middle" letter-spacing="0.5">In</text>
<rect x="1210.75" y="308.75" width="40.2" height="18.3" fill="#ffb914" stroke="#6b6452" stroke-width="1.3"/>
<text x="1231" y="322.46" font-size="15" fill="#1d1f2c" text-anchor="middle" letter-spacing="0.45">Auto</text>
<rect x="1257.35" y="308.75" width="29" height="18.3" fill="#ecedf0" stroke="#5c6072" stroke-width="1.3"/>
<text x="1271.9" y="322.46" font-size="15" fill="#1d1f2c" text-anchor="middle" letter-spacing="0.5">Off</text>
<rect x="1179.75" y="335.25" width="106.6" height="18.2" fill="#f5f5f7" stroke="#5c6072" stroke-width="1.3"/>
<clipPath id="dd334"><rect x="1180" y="334.6" width="92.6" height="19.5"/></clipPath>
<text x="1182.8" y="349.01" font-size="15" fill="#1d1f2c" letter-spacing="0.5" clip-path="url(#dd334)">Main</text>
<path d="M1274.1 340.95h9.8l-4.9 6.4Z" fill="#1d1f2c"/>
<rect x="1179.75" y="361.45" width="106.6" height="18.7" fill="#dfe0e4" stroke="#5c6072" stroke-width="1.3"/>
<rect x="1298" y="282.8" width="69.1" height="17.5" fill="#f5f5f7" stroke="#5c6072" stroke-width="1.2"/>
<rect x="1298.4" y="283.2" width="46.6" height="16.7" fill="#00cfe4"/>
<text x="1333" y="296.96" font-size="15" fill="#1d1f2c" text-anchor="middle" letter-spacing="0.3">-6.3</text>
<rect x="1375.7" y="282.8" width="69.5" height="17.5" fill="#f5f5f7" stroke="#5c6072" stroke-width="1.2"/>
<text x="1410.6" y="296.96" font-size="15" fill="#1d1f2c" text-anchor="middle">C</text>
<rect x="1298" y="309" width="44.2" height="17.8" fill="#f5f5f7" stroke="#5c6072" stroke-width="1.2"/>
<rect x="1349.2" y="309" width="44.2" height="17.8" fill="#f5f5f7" stroke="#5c6072" stroke-width="1.2"/>
<line x1="1309.2" y1="318.4" x2="1316" y2="318.4" stroke="#1d1f2c" stroke-width="1.3"/>
<path d="M1324.8 318.4c-2.2 -3.6 -6.6 -3.6 -6.6 0s4.4 3.6 6.6 0s6.6 -3.6 6.6 0s-4.4 3.6 -6.6 0" fill="none" stroke="#1d1f2c" stroke-width="1.25"/>
<line x1="1360.4" y1="318.4" x2="1367.2" y2="318.4" stroke="#1d1f2c" stroke-width="1.3"/>
<path d="M1376 318.4c-2.2 -3.6 -6.6 -3.6 -6.6 0s4.4 3.6 6.6 0s6.6 -3.6 6.6 0s-4.4 3.6 -6.6 0" fill="none" stroke="#1d1f2c" stroke-width="1.25"/>
<circle cx="1301.6" cy="312.4" r="3.6" fill="#e9606c" stroke="#3a2c22" stroke-width="1.2"/>
<rect x="998.1" y="1041.7" width="21.1" height="18.3" fill="#ffb914" stroke="#6b6452" stroke-width="1.2"/>
<line x1="1002.5" y1="1048.4" x2="1002.5" y2="1052.6" stroke="#2a2415" stroke-width="1.4"/>
<line x1="1005.7" y1="1045.2" x2="1005.7" y2="1055.8" stroke="#2a2415" stroke-width="1.4"/>
<line x1="1008.9" y1="1043.7" x2="1008.9" y2="1057.3" stroke="#2a2415" stroke-width="1.4"/>
<line x1="1012.1" y1="1046.7" x2="1012.1" y2="1054.3" stroke="#2a2415" stroke-width="1.4"/>
<line x1="1015.3" y1="1048.4" x2="1015.3" y2="1052.6" stroke="#2a2415" stroke-width="1.4"/>
<rect x="1026.1" y="1041.7" width="52.2" height="18.3" fill="#f5f5f7" stroke="#5c6072" stroke-width="1.2"/>
<rect x="1026.6" y="1042.2" width="15.2" height="17.3" fill="#00cfe4"/>
<text x="1051.9" y="1056.1" font-size="16" fill="#1d1f2c" text-anchor="middle" letter-spacing="0.3">1.00x</text>
<rect x="1120.6" y="1041.7" width="21.5" height="18.3" fill="#ecedf0" stroke="#5c6072" stroke-width="1.2"/>
<text x="1131.4" y="1055.93" font-size="15.2" fill="#1d1f2c" text-anchor="middle">H</text>
<rect x="1149" y="1041.7" width="21.1" height="18.3" fill="#ecedf0" stroke="#5c6072" stroke-width="1.2"/>
<text x="1159.5" y="1055.93" font-size="15.2" fill="#1d1f2c" text-anchor="middle">W</text>
<rect x="0" y="1067.1" width="1469.3" height="4.6" fill="#858999"/>
<rect x="-65" y="1071.7" width="3" height="289.3" fill="#858999"/>
<rect x="53.2" y="1071.7" width="3" height="289.3" fill="#858999"/>
<rect x="-62" y="1071.7" width="115.2" height="26.3" fill="#c997d7"/>
<rect x="-65" y="1098" width="121.2" height="3" fill="#858999"/>
<clipPath id="mh38"><rect x="-62" y="1071" width="89.2" height="28"/></clipPath>
<text x="-56.4" y="1090.06" font-size="14.7" fill="#1d1d22" stroke="#1d1d22" stroke-width="0.52" textLength="84.3" lengthAdjust="spacingAndGlyphs" clip-path="url(#mh38)">Guit Layter</text>
<circle cx="39.7" cy="1084.8" r="9.3" fill="none" stroke="#2b2d33" stroke-width="1.35" opacity="0.92"/>
<path d="M34.8 1082.3h9.8l-4.9 6.4Z" fill="#2b2d33"/>
<rect x="-65" y="1186.3" width="121.2" height="3.3" fill="#858999"/>
<rect x="-65" y="1347.6" width="121.2" height="3.7" fill="#858999"/>
<rect x="-62" y="1351.3" width="115.2" height="9.5" fill="#c997d7"/>
<path d="M-41.99 1142.37A18.5 18.5 0 1 1 -19.49 1143.35" fill="none" stroke="#1d1f2c" stroke-width="3"/>
<line x1="-29.4" y1="1127.6" x2="-39.8" y2="1145.35" stroke="#1d1f2c" stroke-width="3"/>
<text x="-30.3" y="1152.11" font-size="13.4" fill="#1d1f2c" text-anchor="middle">A</text>
<path d="M9.11 1168.97A18.5 18.5 0 1 1 31.61 1169.95" fill="none" stroke="#1d1f2c" stroke-width="3"/>
<line x1="21.7" y1="1154.2" x2="11.3" y2="1171.95" stroke="#1d1f2c" stroke-width="3"/>
<text x="20.8" y="1178.71" font-size="13.4" fill="#1d1f2c" text-anchor="middle">B</text>
<text x="-1.2" y="1122.66" font-size="14.7" fill="#202129" stroke="#202129" stroke-width="0.52" textLength="45" lengthAdjust="spacingAndGlyphs">Sends</text>
<path d="M-38.36 1243.37A18.6 18.6 0 0 1 -32.84 1209.51" fill="none" stroke="#1d1f2c" stroke-width="3"/>
<path d="M-24.16 1209.51A18.6 18.6 0 0 1 -18.64 1243.37" fill="none" stroke="#1d1f2c" stroke-width="3"/>
<line x1="-28.5" y1="1209" x2="-28.5" y2="1227.4" stroke="#1d1f2c" stroke-width="3" stroke-linecap="round"/>
<path d="M-34.2 1199h11.4l-5.7 6.3Z" fill="#1d1f2c"/>
<rect x="-45.2" y="1251.6" width="33.4" height="33.3" fill="#ffb914" stroke="#6b6452" stroke-width="1.2"/>
<text x="-28.5" y="1275.14" font-size="19.6" fill="#15161c" text-anchor="middle" letter-spacing="0.5" stroke="#15161c" stroke-width="0.6">8</text>
<rect x="-45.2" y="1293" width="33.4" height="18.4" fill="#ecedf0" stroke="#5c6072" stroke-width="1.2"/>
<text x="-28.5" y="1307.67" font-size="15.6" fill="#1d1f2c" text-anchor="middle" stroke="#1d1f2c" stroke-width="0.25">S</text>
<rect x="-45.2" y="1319.8" width="33.4" height="17.8" fill="#ecedf0" stroke="#5c6072" stroke-width="1.2"/>
<circle cx="-28.5" cy="1328.7" r="5.3" fill="#1d1f2c"/>
<path d="M-27.5 1323.8V1329.1Q-27.5 1331.7 -30.9 1331.4" fill="none" stroke="#ecedf0" stroke-width="1.6"/>
<line x1="15.8" y1="1201.2" x2="20.4" y2="1201.2" stroke="#a0a2ac" stroke-width="1.3"/>
<line x1="15.8" y1="1215.1" x2="20.4" y2="1215.1" stroke="#50535f" stroke-width="1.3"/>
<line x1="15.8" y1="1227.6" x2="20.4" y2="1227.6" stroke="#a0a2ac" stroke-width="1.3"/>
<line x1="15.8" y1="1241.7" x2="20.4" y2="1241.7" stroke="#50535f" stroke-width="1.3"/>
<line x1="15.8" y1="1255.8" x2="20.4" y2="1255.8" stroke="#a0a2ac" stroke-width="1.3"/>
<line x1="15.8" y1="1268.1" x2="20.4" y2="1268.1" stroke="#50535f" stroke-width="1.3"/>
<line x1="15.8" y1="1282.2" x2="20.4" y2="1282.2" stroke="#a0a2ac" stroke-width="1.3"/>
<line x1="15.8" y1="1294.4" x2="20.4" y2="1294.4" stroke="#50535f" stroke-width="1.3"/>
<line x1="15.8" y1="1303.8" x2="20.4" y2="1303.8" stroke="#a0a2ac" stroke-width="1.3"/>
<line x1="15.8" y1="1313.1" x2="20.4" y2="1313.1" stroke="#50535f" stroke-width="1.3"/>
<line x1="15.8" y1="1320.9" x2="20.4" y2="1320.9" stroke="#a0a2ac" stroke-width="1.3"/>
<line x1="15.8" y1="1328.8" x2="20.4" y2="1328.8" stroke="#a0a2ac" stroke-width="1.3"/>
<line x1="15.8" y1="1334.9" x2="20.4" y2="1334.9" stroke="#a0a2ac" stroke-width="1.3"/>
<rect x="23.9" y="1199" width="19.8" height="139.2" fill="#23262f" rx="3.2"/>
<line x1="33.7" y1="1200" x2="33.7" y2="1337.5" stroke="#656978" stroke-width="1"/>
<rect x="24.9" y="1214.4" width="17.8" height="1.5" fill="#e3e4e9"/>
<path d="M5.1 1205.6v18.8l16.3 -9.4Z" fill="#14161e"/>
<rect x="53.2" y="1071.7" width="3" height="289.3" fill="#858999"/>
<rect x="171.2" y="1071.7" width="3" height="289.3" fill="#858999"/>
<rect x="56.2" y="1071.7" width="115" height="26.3" fill="#dcb1ab"/>
<rect x="53.2" y="1098" width="121" height="3" fill="#858999"/>
<clipPath id="mh156"><rect x="56.2" y="1071" width="112" height="28"/></clipPath>
<text x="61.8" y="1090.06" font-size="14.7" fill="#1d1d22" stroke="#1d1d22" stroke-width="0.52" textLength="100.9" lengthAdjust="spacingAndGlyphs" clip-path="url(#mh156)">Transform Se</text>
<rect x="53.2" y="1186.3" width="121" height="3.3" fill="#858999"/>
<rect x="53.2" y="1347.6" width="121" height="3.7" fill="#858999"/>
<rect x="56.2" y="1351.3" width="115" height="9.5" fill="#dcb1ab"/>
<path d="M76.21 1142.37A18.5 18.5 0 1 1 98.71 1143.35" fill="none" stroke="#1d1f2c" stroke-width="3"/>
<line x1="88.8" y1="1127.6" x2="78.4" y2="1145.35" stroke="#1d1f2c" stroke-width="3"/>
<text x="87.9" y="1152.11" font-size="13.4" fill="#1d1f2c" text-anchor="middle">A</text>
<path d="M127.31 1168.97A18.5 18.5 0 1 1 149.81 1169.95" fill="none" stroke="#1d1f2c" stroke-width="3"/>
<line x1="139.9" y1="1154.2" x2="129.5" y2="1171.95" stroke="#1d1f2c" stroke-width="3"/>
<text x="139" y="1178.71" font-size="13.4" fill="#1d1f2c" text-anchor="middle">B</text>
<text x="117" y="1122.66" font-size="14.7" fill="#202129" stroke="#202129" stroke-width="0.52" textLength="45" lengthAdjust="spacingAndGlyphs">Sends</text>
<path d="M79.84 1243.37A18.6 18.6 0 0 1 85.36 1209.51" fill="none" stroke="#1d1f2c" stroke-width="3"/>
<path d="M94.04 1209.51A18.6 18.6 0 0 1 99.56 1243.37" fill="none" stroke="#1d1f2c" stroke-width="3"/>
<line x1="89.7" y1="1209" x2="89.7" y2="1227.4" stroke="#1d1f2c" stroke-width="3" stroke-linecap="round"/>
<path d="M84 1199h11.4l-5.7 6.3Z" fill="#1d1f2c"/>
<rect x="73" y="1251.6" width="33.4" height="33.3" fill="#ffb914" stroke="#6b6452" stroke-width="1.2"/>
<text x="89.7" y="1275.14" font-size="19.6" fill="#15161c" text-anchor="middle" letter-spacing="0.5" stroke="#15161c" stroke-width="0.6">9</text>
<rect x="73" y="1293" width="33.4" height="18.4" fill="#ecedf0" stroke="#5c6072" stroke-width="1.2"/>
<text x="89.7" y="1307.67" font-size="15.6" fill="#1d1f2c" text-anchor="middle" stroke="#1d1f2c" stroke-width="0.25">S</text>
<rect x="73" y="1319.8" width="33.4" height="17.8" fill="#ecedf0" stroke="#5c6072" stroke-width="1.2"/>
<circle cx="89.7" cy="1328.7" r="5.3" fill="#1d1f2c"/>
<path d="M90.7 1323.8V1329.1Q90.7 1331.7 87.3 1331.4" fill="none" stroke="#ecedf0" stroke-width="1.6"/>
<line x1="134" y1="1201.2" x2="138.6" y2="1201.2" stroke="#a0a2ac" stroke-width="1.3"/>
<line x1="134" y1="1215.1" x2="138.6" y2="1215.1" stroke="#50535f" stroke-width="1.3"/>
<line x1="134" y1="1227.6" x2="138.6" y2="1227.6" stroke="#a0a2ac" stroke-width="1.3"/>
<line x1="134" y1="1241.7" x2="138.6" y2="1241.7" stroke="#50535f" stroke-width="1.3"/>
<line x1="134" y1="1255.8" x2="138.6" y2="1255.8" stroke="#a0a2ac" stroke-width="1.3"/>
<line x1="134" y1="1268.1" x2="138.6" y2="1268.1" stroke="#50535f" stroke-width="1.3"/>
<line x1="134" y1="1282.2" x2="138.6" y2="1282.2" stroke="#a0a2ac" stroke-width="1.3"/>
<line x1="134" y1="1294.4" x2="138.6" y2="1294.4" stroke="#50535f" stroke-width="1.3"/>
<line x1="134" y1="1303.8" x2="138.6" y2="1303.8" stroke="#a0a2ac" stroke-width="1.3"/>
<line x1="134" y1="1313.1" x2="138.6" y2="1313.1" stroke="#50535f" stroke-width="1.3"/>
<line x1="134" y1="1320.9" x2="138.6" y2="1320.9" stroke="#a0a2ac" stroke-width="1.3"/>
<line x1="134" y1="1328.8" x2="138.6" y2="1328.8" stroke="#a0a2ac" stroke-width="1.3"/>
<line x1="134" y1="1334.9" x2="138.6" y2="1334.9" stroke="#a0a2ac" stroke-width="1.3"/>
<rect x="142.1" y="1199" width="19.8" height="139.2" fill="#23262f" rx="3.2"/>
<line x1="151.9" y1="1200" x2="151.9" y2="1337.5" stroke="#656978" stroke-width="1"/>
<rect x="143.1" y="1214.4" width="17.8" height="1.5" fill="#e3e4e9"/>
<path d="M123.3 1238.4v18.8l16.3 -9.4Z" fill="#14161e"/>
<rect x="171.2" y="1071.7" width="3" height="289.3" fill="#858999"/>
<rect x="289.2" y="1071.7" width="3" height="289.3" fill="#858999"/>
<rect x="174.2" y="1071.7" width="115" height="26.3" fill="#d5a43b"/>
<rect x="171.2" y="1098" width="121" height="3" fill="#858999"/>
<clipPath id="mh274"><rect x="174.2" y="1071" width="89" height="28"/></clipPath>
<text x="179.8" y="1090.06" font-size="14.7" fill="#1d1d22" stroke="#1d1d22" stroke-width="0.52" textLength="59.6" lengthAdjust="spacingAndGlyphs" clip-path="url(#mh274)">Vacuum</text>
<circle cx="275.7" cy="1084.8" r="9.3" fill="none" stroke="#2b2d33" stroke-width="1.35" opacity="0.92"/>
<path d="M270.8 1082.3h9.8l-4.9 6.4Z" fill="#2b2d33"/>
<rect x="171.2" y="1186.3" width="121" height="3.3" fill="#858999"/>
<rect x="171.2" y="1347.6" width="121" height="3.7" fill="#858999"/>
<rect x="174.2" y="1351.3" width="115" height="9.5" fill="#d5a43b"/>
<path d="M194.21 1142.37A18.5 18.5 0 1 1 216.71 1143.35" fill="none" stroke="#1d1f2c" stroke-width="3"/>
<line x1="206.8" y1="1127.6" x2="196.4" y2="1145.35" stroke="#1d1f2c" stroke-width="3"/>
<text x="205.9" y="1152.11" font-size="13.4" fill="#1d1f2c" text-anchor="middle">A</text>
<path d="M245.31 1168.97A18.5 18.5 0 1 1 267.81 1169.95" fill="none" stroke="#1d1f2c" stroke-width="3"/>
<line x1="257.9" y1="1154.2" x2="247.5" y2="1171.95" stroke="#1d1f2c" stroke-width="3"/>
<text x="257" y="1178.71" font-size="13.4" fill="#1d1f2c" text-anchor="middle">B</text>
<text x="235" y="1122.66" font-size="14.7" fill="#202129" stroke="#202129" stroke-width="0.52" textLength="45" lengthAdjust="spacingAndGlyphs">Sends</text>
<circle cx="189.6" cy="1110.4" r="3.7" fill="#e9606c" stroke="#1a1c24" stroke-width="1.4"/>
<path d="M197.84 1243.37A18.6 18.6 0 0 1 203.36 1209.51" fill="none" stroke="#1d1f2c" stroke-width="3"/>
<path d="M212.04 1209.51A18.6 18.6 0 0 1 217.56 1243.37" fill="none" stroke="#1d1f2c" stroke-width="3"/>
<line x1="207.7" y1="1209" x2="207.7" y2="1227.4" stroke="#1d1f2c" stroke-width="3" stroke-linecap="round"/>
<path d="M202 1199h11.4l-5.7 6.3Z" fill="#1d1f2c"/>
<rect x="191" y="1251.6" width="33.4" height="33.3" fill="#ffb914" stroke="#6b6452" stroke-width="1.2"/>
<text x="207.7" y="1275.14" font-size="19.6" fill="#15161c" text-anchor="middle" letter-spacing="0.5" stroke="#15161c" stroke-width="0.6">10</text>
<rect x="191" y="1293" width="33.4" height="18.4" fill="#ecedf0" stroke="#5c6072" stroke-width="1.2"/>
<text x="207.7" y="1307.67" font-size="15.6" fill="#1d1f2c" text-anchor="middle" stroke="#1d1f2c" stroke-width="0.25">S</text>
<rect x="191" y="1319.8" width="33.4" height="17.8" fill="#ecedf0" stroke="#5c6072" stroke-width="1.2"/>
<circle cx="207.7" cy="1328.7" r="5.3" fill="#1d1f2c"/>
<path d="M208.7 1323.8V1329.1Q208.7 1331.7 205.3 1331.4" fill="none" stroke="#ecedf0" stroke-width="1.6"/>
<line x1="252" y1="1201.2" x2="256.6" y2="1201.2" stroke="#a0a2ac" stroke-width="1.3"/>
<line x1="252" y1="1215.1" x2="256.6" y2="1215.1" stroke="#50535f" stroke-width="1.3"/>
<line x1="252" y1="1227.6" x2="256.6" y2="1227.6" stroke="#a0a2ac" stroke-width="1.3"/>
<line x1="252" y1="1241.7" x2="256.6" y2="1241.7" stroke="#50535f" stroke-width="1.3"/>
<line x1="252" y1="1255.8" x2="256.6" y2="1255.8" stroke="#a0a2ac" stroke-width="1.3"/>
<line x1="252" y1="1268.1" x2="256.6" y2="1268.1" stroke="#50535f" stroke-width="1.3"/>
<line x1="252" y1="1282.2" x2="256.6" y2="1282.2" stroke="#a0a2ac" stroke-width="1.3"/>
<line x1="252" y1="1294.4" x2="256.6" y2="1294.4" stroke="#50535f" stroke-width="1.3"/>
<line x1="252" y1="1303.8" x2="256.6" y2="1303.8" stroke="#a0a2ac" stroke-width="1.3"/>
<line x1="252" y1="1313.1" x2="256.6" y2="1313.1" stroke="#50535f" stroke-width="1.3"/>
<line x1="252" y1="1320.9" x2="256.6" y2="1320.9" stroke="#a0a2ac" stroke-width="1.3"/>
<line x1="252" y1="1328.8" x2="256.6" y2="1328.8" stroke="#a0a2ac" stroke-width="1.3"/>
<line x1="252" y1="1334.9" x2="256.6" y2="1334.9" stroke="#a0a2ac" stroke-width="1.3"/>
<rect x="260.1" y="1199" width="19.8" height="139.2" fill="#23262f" rx="3.2"/>
<line x1="269.9" y1="1200" x2="269.9" y2="1337.5" stroke="#656978" stroke-width="1"/>
<rect x="261.1" y="1214.4" width="17.8" height="1.5" fill="#e3e4e9"/>
<path d="M241.3 1205.6v18.8l16.3 -9.4Z" fill="#14161e"/>
<rect x="289.2" y="1071.7" width="3" height="289.3" fill="#858999"/>
<rect x="407.2" y="1071.7" width="3" height="289.3" fill="#858999"/>
<rect x="292.2" y="1071.7" width="115" height="26.3" fill="#fcf492"/>
<rect x="289.2" y="1098" width="121" height="3" fill="#858999"/>
<clipPath id="mh392"><rect x="292.2" y="1071" width="112" height="28"/></clipPath>
<text x="297.8" y="1090.06" font-size="14.7" fill="#1d1d22" stroke="#1d1d22" stroke-width="0.52" textLength="80.7" lengthAdjust="spacingAndGlyphs" clip-path="url(#mh392)">Vocal Main</text>
<rect x="289.2" y="1186.3" width="121" height="3.3" fill="#858999"/>
<rect x="289.2" y="1347.6" width="121" height="3.7" fill="#858999"/>
<rect x="292.2" y="1351.3" width="115" height="9.5" fill="#fcf492"/>
<path d="M312.21 1142.37A18.5 18.5 0 1 1 334.71 1143.35" fill="none" stroke="#1d1f2c" stroke-width="3"/>
<line x1="324.8" y1="1127.6" x2="314.4" y2="1145.35" stroke="#1d1f2c" stroke-width="3"/>
<text x="323.9" y="1152.11" font-size="13.4" fill="#1d1f2c" text-anchor="middle">A</text>
<path d="M363.31 1168.97A18.5 18.5 0 1 1 385.81 1169.95" fill="none" stroke="#1d1f2c" stroke-width="3"/>
<line x1="375.9" y1="1154.2" x2="365.5" y2="1171.95" stroke="#1d1f2c" stroke-width="3"/>
<text x="375" y="1178.71" font-size="13.4" fill="#1d1f2c" text-anchor="middle">B</text>
<text x="353" y="1122.66" font-size="14.7" fill="#202129" stroke="#202129" stroke-width="0.52" textLength="45" lengthAdjust="spacingAndGlyphs">Sends</text>
<path d="M315.84 1243.37A18.6 18.6 0 0 1 321.36 1209.51" fill="none" stroke="#1d1f2c" stroke-width="3"/>
<path d="M330.04 1209.51A18.6 18.6 0 0 1 335.56 1243.37" fill="none" stroke="#1d1f2c" stroke-width="3"/>
<line x1="325.7" y1="1209" x2="325.7" y2="1227.4" stroke="#1d1f2c" stroke-width="3" stroke-linecap="round"/>
<path d="M320 1199h11.4l-5.7 6.3Z" fill="#1d1f2c"/>
<rect x="309" y="1251.6" width="33.4" height="33.3" fill="#ffb914" stroke="#6b6452" stroke-width="1.2"/>
<text x="325.7" y="1275.14" font-size="19.6" fill="#15161c" text-anchor="middle" letter-spacing="0.5" stroke="#15161c" stroke-width="0.6">11</text>
<rect x="309" y="1293" width="33.4" height="18.4" fill="#ecedf0" stroke="#5c6072" stroke-width="1.2"/>
<text x="325.7" y="1307.67" font-size="15.6" fill="#1d1f2c" text-anchor="middle" stroke="#1d1f2c" stroke-width="0.25">S</text>
<rect x="309" y="1319.8" width="33.4" height="17.8" fill="#ecedf0" stroke="#5c6072" stroke-width="1.2"/>
<circle cx="325.7" cy="1328.7" r="5.3" fill="#858894"/>
<line x1="370" y1="1201.2" x2="374.6" y2="1201.2" stroke="#a0a2ac" stroke-width="1.3"/>
<line x1="370" y1="1215.1" x2="374.6" y2="1215.1" stroke="#50535f" stroke-width="1.3"/>
<line x1="370" y1="1227.6" x2="374.6" y2="1227.6" stroke="#a0a2ac" stroke-width="1.3"/>
<line x1="370" y1="1241.7" x2="374.6" y2="1241.7" stroke="#50535f" stroke-width="1.3"/>
<line x1="370" y1="1255.8" x2="374.6" y2="1255.8" stroke="#a0a2ac" stroke-width="1.3"/>
<line x1="370" y1="1268.1" x2="374.6" y2="1268.1" stroke="#50535f" stroke-width="1.3"/>
<line x1="370" y1="1282.2" x2="374.6" y2="1282.2" stroke="#a0a2ac" stroke-width="1.3"/>
<line x1="370" y1="1294.4" x2="374.6" y2="1294.4" stroke="#50535f" stroke-width="1.3"/>
<line x1="370" y1="1303.8" x2="374.6" y2="1303.8" stroke="#a0a2ac" stroke-width="1.3"/>
<line x1="370" y1="1313.1" x2="374.6" y2="1313.1" stroke="#50535f" stroke-width="1.3"/>
<line x1="370" y1="1320.9" x2="374.6" y2="1320.9" stroke="#a0a2ac" stroke-width="1.3"/>
<line x1="370" y1="1328.8" x2="374.6" y2="1328.8" stroke="#a0a2ac" stroke-width="1.3"/>
<line x1="370" y1="1334.9" x2="374.6" y2="1334.9" stroke="#a0a2ac" stroke-width="1.3"/>
<rect x="378.1" y="1199" width="19.8" height="139.2" fill="#23262f" rx="3.2"/>
<line x1="387.9" y1="1200" x2="387.9" y2="1337.5" stroke="#656978" stroke-width="1"/>
<rect x="379.1" y="1214.4" width="17.8" height="1.5" fill="#e3e4e9"/>
<path d="M359.3 1226.3v18.8l16.3 -9.4Z" fill="#14161e"/>
<circle cx="369.7" cy="1236" r="3.6" fill="#16a7c8" stroke="#10222c" stroke-width="1"/>
<rect x="407.2" y="1071.7" width="3" height="289.3" fill="#858999"/>
<rect x="525.2" y="1071.7" width="3" height="289.3" fill="#858999"/>
<rect x="410.2" y="1071.7" width="115" height="26.3" fill="#fcf492"/>
<rect x="407.2" y="1098" width="121" height="3" fill="#858999"/>
<clipPath id="mh510"><rect x="410.2" y="1071" width="112" height="28"/></clipPath>
<text x="415.8" y="1090.06" font-size="14.7" fill="#1d1d22" stroke="#1d1d22" stroke-width="0.52" textLength="105" lengthAdjust="spacingAndGlyphs" clip-path="url(#mh510)">Vocal Harmon</text>
<rect x="407.2" y="1186.3" width="121" height="3.3" fill="#858999"/>
<rect x="407.2" y="1347.6" width="121" height="3.7" fill="#858999"/>
<rect x="410.2" y="1351.3" width="115" height="9.5" fill="#fcf492"/>
<path d="M430.21 1142.37A18.5 18.5 0 1 1 452.71 1143.35" fill="none" stroke="#1d1f2c" stroke-width="3"/>
<line x1="442.8" y1="1127.6" x2="432.4" y2="1145.35" stroke="#1d1f2c" stroke-width="3"/>
<text x="441.9" y="1152.11" font-size="13.4" fill="#1d1f2c" text-anchor="middle">A</text>
<path d="M481.31 1168.97A18.5 18.5 0 1 1 503.81 1169.95" fill="none" stroke="#1d1f2c" stroke-width="3"/>
<line x1="493.9" y1="1154.2" x2="483.5" y2="1171.95" stroke="#1d1f2c" stroke-width="3"/>
<text x="493" y="1178.71" font-size="13.4" fill="#1d1f2c" text-anchor="middle">B</text>
<text x="471" y="1122.66" font-size="14.7" fill="#202129" stroke="#202129" stroke-width="0.52" textLength="45" lengthAdjust="spacingAndGlyphs">Sends</text>
<path d="M433.84 1243.37A18.6 18.6 0 0 1 439.36 1209.51" fill="none" stroke="#1d1f2c" stroke-width="3"/>
<path d="M448.04 1209.51A18.6 18.6 0 0 1 453.56 1243.37" fill="none" stroke="#1d1f2c" stroke-width="3"/>
<line x1="443.7" y1="1209" x2="443.7" y2="1227.4" stroke="#1d1f2c" stroke-width="3" stroke-linecap="round"/>
<path d="M438 1199h11.4l-5.7 6.3Z" fill="#1d1f2c"/>
<rect x="427" y="1251.6" width="33.4" height="33.3" fill="#ffb914" stroke="#6b6452" stroke-width="1.2"/>
<text x="443.7" y="1275.14" font-size="19.6" fill="#15161c" text-anchor="middle" letter-spacing="0.5" stroke="#15161c" stroke-width="0.6">12</text>
<rect x="427" y="1293" width="33.4" height="18.4" fill="#ecedf0" stroke="#5c6072" stroke-width="1.2"/>
<text x="443.7" y="1307.67" font-size="15.6" fill="#1d1f2c" text-anchor="middle" stroke="#1d1f2c" stroke-width="0.25">S</text>
<rect x="427" y="1319.8" width="33.4" height="17.8" fill="#ecedf0" stroke="#5c6072" stroke-width="1.2"/>
<circle cx="443.7" cy="1328.7" r="5.3" fill="#858894"/>
<line x1="488" y1="1201.2" x2="492.6" y2="1201.2" stroke="#a0a2ac" stroke-width="1.3"/>
<line x1="488" y1="1215.1" x2="492.6" y2="1215.1" stroke="#50535f" stroke-width="1.3"/>
<line x1="488" y1="1227.6" x2="492.6" y2="1227.6" stroke="#a0a2ac" stroke-width="1.3"/>
<line x1="488" y1="1241.7" x2="492.6" y2="1241.7" stroke="#50535f" stroke-width="1.3"/>
<line x1="488" y1="1255.8" x2="492.6" y2="1255.8" stroke="#a0a2ac" stroke-width="1.3"/>
<line x1="488" y1="1268.1" x2="492.6" y2="1268.1" stroke="#50535f" stroke-width="1.3"/>
<line x1="488" y1="1282.2" x2="492.6" y2="1282.2" stroke="#a0a2ac" stroke-width="1.3"/>
<line x1="488" y1="1294.4" x2="492.6" y2="1294.4" stroke="#50535f" stroke-width="1.3"/>
<line x1="488" y1="1303.8" x2="492.6" y2="1303.8" stroke="#a0a2ac" stroke-width="1.3"/>
<line x1="488" y1="1313.1" x2="492.6" y2="1313.1" stroke="#50535f" stroke-width="1.3"/>
<line x1="488" y1="1320.9" x2="492.6" y2="1320.9" stroke="#a0a2ac" stroke-width="1.3"/>
<line x1="488" y1="1328.8" x2="492.6" y2="1328.8" stroke="#a0a2ac" stroke-width="1.3"/>
<line x1="488" y1="1334.9" x2="492.6" y2="1334.9" stroke="#a0a2ac" stroke-width="1.3"/>
<rect x="496.1" y="1199" width="19.8" height="139.2" fill="#23262f" rx="3.2"/>
<line x1="505.9" y1="1200" x2="505.9" y2="1337.5" stroke="#656978" stroke-width="1"/>
<rect x="497.1" y="1214.4" width="17.8" height="1.5" fill="#e3e4e9"/>
<path d="M477.3 1212.6v18.8l16.3 -9.4Z" fill="#14161e"/>
<circle cx="487.7" cy="1222.3" r="3.6" fill="#16a7c8" stroke="#10222c" stroke-width="1"/>
<rect x="525.2" y="1071.7" width="3" height="289.3" fill="#858999"/>
<rect x="643.2" y="1071.7" width="3" height="289.3" fill="#858999"/>
<rect x="528.2" y="1071.7" width="115" height="26.3" fill="#fcf492"/>
<rect x="525.2" y="1098" width="121" height="3" fill="#858999"/>
<clipPath id="mh628"><rect x="528.2" y="1071" width="112" height="28"/></clipPath>
<text x="533.8" y="1090.06" font-size="14.7" fill="#1d1d22" stroke="#1d1d22" stroke-width="0.52" textLength="78.9" lengthAdjust="spacingAndGlyphs" clip-path="url(#mh628)">Vocal Hum</text>
<rect x="525.2" y="1186.3" width="121" height="3.3" fill="#858999"/>
<rect x="525.2" y="1347.6" width="121" height="3.7" fill="#858999"/>
<rect x="528.2" y="1351.3" width="115" height="9.5" fill="#fcf492"/>
<path d="M548.21 1142.37A18.5 18.5 0 1 1 570.71 1143.35" fill="none" stroke="#1d1f2c" stroke-width="3"/>
<line x1="560.8" y1="1127.6" x2="550.4" y2="1145.35" stroke="#1d1f2c" stroke-width="3"/>
<text x="559.9" y="1152.11" font-size="13.4" fill="#1d1f2c" text-anchor="middle">A</text>
<path d="M599.31 1168.97A18.5 18.5 0 1 1 621.81 1169.95" fill="none" stroke="#1d1f2c" stroke-width="3"/>
<line x1="611.9" y1="1154.2" x2="601.5" y2="1171.95" stroke="#1d1f2c" stroke-width="3"/>
<text x="611" y="1178.71" font-size="13.4" fill="#1d1f2c" text-anchor="middle">B</text>
<text x="589" y="1122.66" font-size="14.7" fill="#202129" stroke="#202129" stroke-width="0.52" textLength="45" lengthAdjust="spacingAndGlyphs">Sends</text>
<path d="M551.84 1243.37A18.6 18.6 0 0 1 557.36 1209.51" fill="none" stroke="#1d1f2c" stroke-width="3"/>
<path d="M566.04 1209.51A18.6 18.6 0 0 1 571.56 1243.37" fill="none" stroke="#1d1f2c" stroke-width="3"/>
<line x1="561.7" y1="1209" x2="561.7" y2="1227.4" stroke="#1d1f2c" stroke-width="3" stroke-linecap="round"/>
<path d="M556 1199h11.4l-5.7 6.3Z" fill="#1d1f2c"/>
<rect x="545" y="1251.6" width="33.4" height="33.3" fill="#ffb914" stroke="#6b6452" stroke-width="1.2"/>
<text x="561.7" y="1275.14" font-size="19.6" fill="#15161c" text-anchor="middle" letter-spacing="0.5" stroke="#15161c" stroke-width="0.6">13</text>
<rect x="545" y="1293" width="33.4" height="18.4" fill="#ecedf0" stroke="#5c6072" stroke-width="1.2"/>
<text x="561.7" y="1307.67" font-size="15.6" fill="#1d1f2c" text-anchor="middle" stroke="#1d1f2c" stroke-width="0.25">S</text>
<rect x="545" y="1319.8" width="33.4" height="17.8" fill="#ecedf0" stroke="#5c6072" stroke-width="1.2"/>
<circle cx="561.7" cy="1328.7" r="5.3" fill="#858894"/>
<line x1="606" y1="1201.2" x2="610.6" y2="1201.2" stroke="#a0a2ac" stroke-width="1.3"/>
<line x1="606" y1="1215.1" x2="610.6" y2="1215.1" stroke="#50535f" stroke-width="1.3"/>
<line x1="606" y1="1227.6" x2="610.6" y2="1227.6" stroke="#a0a2ac" stroke-width="1.3"/>
<line x1="606" y1="1241.7" x2="610.6" y2="1241.7" stroke="#50535f" stroke-width="1.3"/>
<line x1="606" y1="1255.8" x2="610.6" y2="1255.8" stroke="#a0a2ac" stroke-width="1.3"/>
<line x1="606" y1="1268.1" x2="610.6" y2="1268.1" stroke="#50535f" stroke-width="1.3"/>
<line x1="606" y1="1282.2" x2="610.6" y2="1282.2" stroke="#a0a2ac" stroke-width="1.3"/>
<line x1="606" y1="1294.4" x2="610.6" y2="1294.4" stroke="#50535f" stroke-width="1.3"/>
<line x1="606" y1="1303.8" x2="610.6" y2="1303.8" stroke="#a0a2ac" stroke-width="1.3"/>
<line x1="606" y1="1313.1" x2="610.6" y2="1313.1" stroke="#50535f" stroke-width="1.3"/>
<line x1="606" y1="1320.9" x2="610.6" y2="1320.9" stroke="#a0a2ac" stroke-width="1.3"/>
<line x1="606" y1="1328.8" x2="610.6" y2="1328.8" stroke="#a0a2ac" stroke-width="1.3"/>
<line x1="606" y1="1334.9" x2="610.6" y2="1334.9" stroke="#a0a2ac" stroke-width="1.3"/>
<rect x="614.1" y="1199" width="19.8" height="139.2" fill="#23262f" rx="3.2"/>
<line x1="623.9" y1="1200" x2="623.9" y2="1337.5" stroke="#656978" stroke-width="1"/>
<rect x="615.1" y="1214.4" width="17.8" height="1.5" fill="#e3e4e9"/>
<path d="M595.3 1221.4v18.8l16.3 -9.4Z" fill="#14161e"/>
<rect x="643.2" y="1071.7" width="3" height="289.3" fill="#858999"/>
<rect x="761.2" y="1071.7" width="3" height="289.3" fill="#858999"/>
<rect x="646.2" y="1071.7" width="115" height="26.3" fill="#fcf492"/>
<rect x="643.2" y="1098" width="121" height="3" fill="#858999"/>
<clipPath id="mh746"><rect x="646.2" y="1071" width="112" height="28"/></clipPath>
<text x="651.8" y="1090.06" font-size="14.7" fill="#1d1d22" stroke="#1d1d22" stroke-width="0.52" textLength="82.8" lengthAdjust="spacingAndGlyphs" clip-path="url(#mh746)">Vocal Adlib</text>
<rect x="643.2" y="1186.3" width="121" height="3.3" fill="#858999"/>
<rect x="643.2" y="1347.6" width="121" height="3.7" fill="#858999"/>
<rect x="646.2" y="1351.3" width="115" height="9.5" fill="#fcf492"/>
<path d="M666.21 1142.37A18.5 18.5 0 1 1 688.71 1143.35" fill="none" stroke="#1d1f2c" stroke-width="3"/>
<line x1="678.8" y1="1127.6" x2="668.4" y2="1145.35" stroke="#1d1f2c" stroke-width="3"/>
<text x="677.9" y="1152.11" font-size="13.4" fill="#1d1f2c" text-anchor="middle">A</text>
<path d="M717.31 1168.97A18.5 18.5 0 1 1 739.81 1169.95" fill="none" stroke="#1d1f2c" stroke-width="3"/>
<line x1="729.9" y1="1154.2" x2="719.5" y2="1171.95" stroke="#1d1f2c" stroke-width="3"/>
<text x="729" y="1178.71" font-size="13.4" fill="#1d1f2c" text-anchor="middle">B</text>
<text x="707" y="1122.66" font-size="14.7" fill="#202129" stroke="#202129" stroke-width="0.52" textLength="45" lengthAdjust="spacingAndGlyphs">Sends</text>
<path d="M669.84 1243.37A18.6 18.6 0 0 1 675.36 1209.51" fill="none" stroke="#1d1f2c" stroke-width="3"/>
<path d="M684.04 1209.51A18.6 18.6 0 0 1 689.56 1243.37" fill="none" stroke="#1d1f2c" stroke-width="3"/>
<line x1="679.7" y1="1209" x2="679.7" y2="1227.4" stroke="#1d1f2c" stroke-width="3" stroke-linecap="round"/>
<path d="M674 1199h11.4l-5.7 6.3Z" fill="#1d1f2c"/>
<rect x="663" y="1251.6" width="33.4" height="33.3" fill="#ffb914" stroke="#6b6452" stroke-width="1.2"/>
<text x="679.7" y="1275.14" font-size="19.6" fill="#15161c" text-anchor="middle" letter-spacing="0.5" stroke="#15161c" stroke-width="0.6">14</text>
<rect x="663" y="1293" width="33.4" height="18.4" fill="#ecedf0" stroke="#5c6072" stroke-width="1.2"/>
<text x="679.7" y="1307.67" font-size="15.6" fill="#1d1f2c" text-anchor="middle" stroke="#1d1f2c" stroke-width="0.25">S</text>
<rect x="663" y="1319.8" width="33.4" height="17.8" fill="#ecedf0" stroke="#5c6072" stroke-width="1.2"/>
<circle cx="679.7" cy="1328.7" r="5.3" fill="#858894"/>
<line x1="724" y1="1201.2" x2="728.6" y2="1201.2" stroke="#a0a2ac" stroke-width="1.3"/>
<line x1="724" y1="1215.1" x2="728.6" y2="1215.1" stroke="#50535f" stroke-width="1.3"/>
<line x1="724" y1="1227.6" x2="728.6" y2="1227.6" stroke="#a0a2ac" stroke-width="1.3"/>
<line x1="724" y1="1241.7" x2="728.6" y2="1241.7" stroke="#50535f" stroke-width="1.3"/>
<line x1="724" y1="1255.8" x2="728.6" y2="1255.8" stroke="#a0a2ac" stroke-width="1.3"/>
<line x1="724" y1="1268.1" x2="728.6" y2="1268.1" stroke="#50535f" stroke-width="1.3"/>
<line x1="724" y1="1282.2" x2="728.6" y2="1282.2" stroke="#a0a2ac" stroke-width="1.3"/>
<line x1="724" y1="1294.4" x2="728.6" y2="1294.4" stroke="#50535f" stroke-width="1.3"/>
<line x1="724" y1="1303.8" x2="728.6" y2="1303.8" stroke="#a0a2ac" stroke-width="1.3"/>
<line x1="724" y1="1313.1" x2="728.6" y2="1313.1" stroke="#50535f" stroke-width="1.3"/>
<line x1="724" y1="1320.9" x2="728.6" y2="1320.9" stroke="#a0a2ac" stroke-width="1.3"/>
<line x1="724" y1="1328.8" x2="728.6" y2="1328.8" stroke="#a0a2ac" stroke-width="1.3"/>
<line x1="724" y1="1334.9" x2="728.6" y2="1334.9" stroke="#a0a2ac" stroke-width="1.3"/>
<rect x="732.1" y="1199" width="19.8" height="139.2" fill="#23262f" rx="3.2"/>
<line x1="741.9" y1="1200" x2="741.9" y2="1337.5" stroke="#656978" stroke-width="1"/>
<rect x="733.1" y="1214.4" width="17.8" height="1.5" fill="#e3e4e9"/>
<path d="M713.3 1221.4v18.8l16.3 -9.4Z" fill="#14161e"/>
<rect x="761.2" y="1071.7" width="3" height="289.3" fill="#858999"/>
<rect x="909.2" y="1071.7" width="3" height="289.3" fill="#858999"/>
<rect x="764.2" y="1071.7" width="145" height="26.3" fill="#e2ebb6"/>
<rect x="761.2" y="1098" width="151" height="3" fill="#858999"/>
<clipPath id="mh864"><rect x="764.2" y="1071" width="119" height="28"/></clipPath>
<text x="769.8" y="1090.06" font-size="14.7" fill="#1d1d22" stroke="#1d1d22" stroke-width="0.52" textLength="77.7" lengthAdjust="spacingAndGlyphs" clip-path="url(#mh864)">Rainstorm</text>
<circle cx="895.7" cy="1084.8" r="9.3" fill="none" stroke="#2b2d33" stroke-width="1.35" opacity="0.92"/>
<path d="M890.8 1082.3h9.8l-4.9 6.4Z" fill="#2b2d33"/>
<rect x="761.2" y="1186.3" width="151" height="3.3" fill="#858999"/>
<rect x="761.2" y="1347.6" width="151" height="3.7" fill="#858999"/>
<rect x="764.2" y="1351.3" width="145" height="9.5" fill="#e2ebb6"/>
<path d="M796.41 1142.37A18.5 18.5 0 1 1 818.91 1143.35" fill="none" stroke="#1d1f2c" stroke-width="3"/>
<line x1="809" y1="1127.6" x2="798.6" y2="1145.35" stroke="#1d1f2c" stroke-width="3"/>
<text x="808.1" y="1152.11" font-size="13.4" fill="#1d1f2c" text-anchor="middle">A</text>
<path d="M847.51 1168.97A18.5 18.5 0 1 1 870.01 1169.95" fill="none" stroke="#1d1f2c" stroke-width="3"/>
<line x1="860.1" y1="1154.2" x2="849.7" y2="1171.95" stroke="#1d1f2c" stroke-width="3"/>
<text x="859.2" y="1178.71" font-size="13.4" fill="#1d1f2c" text-anchor="middle">B</text>
<text x="837.2" y="1122.66" font-size="14.7" fill="#202129" stroke="#202129" stroke-width="0.52" textLength="45" lengthAdjust="spacingAndGlyphs">Sends</text>
<path d="M792.48 1243.37A18.6 18.6 0 0 1 797.99 1209.51" fill="none" stroke="#1d1f2c" stroke-width="3"/>
<path d="M806.68 1209.51A18.6 18.6 0 0 1 812.19 1243.37" fill="none" stroke="#1d1f2c" stroke-width="3"/>
<line x1="802.34" y1="1209" x2="802.34" y2="1227.4" stroke="#1d1f2c" stroke-width="3" stroke-linecap="round"/>
<path d="M796.64 1199h11.4l-5.7 6.3Z" fill="#1d1f2c"/>
<rect x="785.64" y="1251.6" width="33.4" height="33.3" fill="#ffb914" stroke="#6b6452" stroke-width="1.2"/>
<text x="802.34" y="1275.14" font-size="19.6" fill="#15161c" text-anchor="middle" letter-spacing="0.5" stroke="#15161c" stroke-width="0.6">15</text>
<rect x="785.64" y="1293" width="33.4" height="18.4" fill="#ecedf0" stroke="#5c6072" stroke-width="1.2"/>
<text x="802.34" y="1307.67" font-size="15.6" fill="#1d1f2c" text-anchor="middle" stroke="#1d1f2c" stroke-width="0.25">S</text>
<rect x="785.64" y="1319.8" width="33.4" height="17.8" fill="#ecedf0" stroke="#5c6072" stroke-width="1.2"/>
<circle cx="802.34" cy="1328.7" r="5.3" fill="#1d1f2c"/>
<path d="M803.34 1323.8V1329.1Q803.34 1331.7 799.94 1331.4" fill="none" stroke="#ecedf0" stroke-width="1.6"/>
<line x1="846.5" y1="1201.2" x2="851.1" y2="1201.2" stroke="#a0a2ac" stroke-width="1.3"/>
<line x1="846.5" y1="1215.1" x2="851.1" y2="1215.1" stroke="#50535f" stroke-width="1.3"/>
<line x1="846.5" y1="1227.6" x2="851.1" y2="1227.6" stroke="#a0a2ac" stroke-width="1.3"/>
<line x1="846.5" y1="1241.7" x2="851.1" y2="1241.7" stroke="#50535f" stroke-width="1.3"/>
<line x1="846.5" y1="1255.8" x2="851.1" y2="1255.8" stroke="#a0a2ac" stroke-width="1.3"/>
<line x1="846.5" y1="1268.1" x2="851.1" y2="1268.1" stroke="#50535f" stroke-width="1.3"/>
<line x1="846.5" y1="1282.2" x2="851.1" y2="1282.2" stroke="#a0a2ac" stroke-width="1.3"/>
<line x1="846.5" y1="1294.4" x2="851.1" y2="1294.4" stroke="#50535f" stroke-width="1.3"/>
<line x1="846.5" y1="1303.8" x2="851.1" y2="1303.8" stroke="#a0a2ac" stroke-width="1.3"/>
<line x1="846.5" y1="1313.1" x2="851.1" y2="1313.1" stroke="#50535f" stroke-width="1.3"/>
<line x1="846.5" y1="1320.9" x2="851.1" y2="1320.9" stroke="#a0a2ac" stroke-width="1.3"/>
<line x1="846.5" y1="1328.8" x2="851.1" y2="1328.8" stroke="#a0a2ac" stroke-width="1.3"/>
<line x1="846.5" y1="1334.9" x2="851.1" y2="1334.9" stroke="#a0a2ac" stroke-width="1.3"/>
<rect x="854.6" y="1199" width="19.8" height="139.2" fill="#23262f" rx="3.2"/>
<line x1="864.4" y1="1200" x2="864.4" y2="1337.5" stroke="#656978" stroke-width="1"/>
<rect x="855.6" y="1214.4" width="17.8" height="1.5" fill="#e3e4e9"/>
<path d="M835.8 1205.6v18.8l16.3 -9.4Z" fill="#14161e"/>
<text x="880" y="1219.18" font-size="13.6" fill="#383b48" letter-spacing="0.4">0</text>
<text x="880" y="1245.38" font-size="13.6" fill="#383b48" letter-spacing="0.4">12</text>
<text x="880" y="1271.68" font-size="13.6" fill="#383b48" letter-spacing="0.4">24</text>
<text x="880" y="1298.08" font-size="13.6" fill="#383b48" letter-spacing="0.4">36</text>
<text x="880" y="1316.88" font-size="13.6" fill="#383b48" letter-spacing="0.4">48</text>
<rect x="1040.4" y="1071.7" width="3" height="289.3" fill="#858999"/>
<rect x="1158.6" y="1071.7" width="3" height="289.3" fill="#858999"/>
<rect x="1043.4" y="1071.7" width="115.2" height="26.3" fill="#d0d0d0"/>
<rect x="1040.4" y="1098" width="121.2" height="3" fill="#858999"/>
<clipPath id="mh1143"><rect x="1043.4" y="1071" width="112.2" height="28"/></clipPath>
<text x="1049" y="1090.06" font-size="14.7" fill="#1d1d22" stroke="#1d1d22" stroke-width="0.52" textLength="67.8" lengthAdjust="spacingAndGlyphs" clip-path="url(#mh1143)">A Reverb</text>
<rect x="1040.4" y="1186.3" width="121.2" height="3.3" fill="#858999"/>
<rect x="1040.4" y="1347.6" width="121.2" height="3.7" fill="#858999"/>
<rect x="1043.4" y="1351.3" width="115.2" height="9.5" fill="#d0d0d0"/>
<path d="M1063.41 1142.37A18.5 18.5 0 1 1 1085.91 1143.35" fill="none" stroke="#8b8e99" stroke-width="3"/>
<line x1="1076" y1="1127.6" x2="1065.6" y2="1145.35" stroke="#8b8e99" stroke-width="3"/>
<text x="1075.1" y="1152.11" font-size="13.4" fill="#1d1f2c" text-anchor="middle">A</text>
<path d="M1114.51 1168.97A18.5 18.5 0 1 1 1137.01 1169.95" fill="none" stroke="#8b8e99" stroke-width="3"/>
<line x1="1127.1" y1="1154.2" x2="1116.7" y2="1171.95" stroke="#8b8e99" stroke-width="3"/>
<text x="1126.2" y="1178.71" font-size="13.4" fill="#1d1f2c" text-anchor="middle">B</text>
<text x="1104.2" y="1122.66" font-size="14.7" fill="#202129" stroke="#202129" stroke-width="0.52" textLength="45" lengthAdjust="spacingAndGlyphs">Sends</text>
<path d="M1067.04 1243.37A18.6 18.6 0 0 1 1072.56 1209.51" fill="none" stroke="#1d1f2c" stroke-width="3"/>
<path d="M1081.24 1209.51A18.6 18.6 0 0 1 1086.76 1243.37" fill="none" stroke="#1d1f2c" stroke-width="3"/>
<line x1="1076.9" y1="1209" x2="1076.9" y2="1227.4" stroke="#1d1f2c" stroke-width="3" stroke-linecap="round"/>
<path d="M1071.2 1199h11.4l-5.7 6.3Z" fill="#1d1f2c"/>
<rect x="1060.2" y="1251.6" width="33.4" height="33.3" fill="#ffb914" stroke="#6b6452" stroke-width="1.2"/>
<text x="1076.9" y="1275.14" font-size="19.6" fill="#15161c" text-anchor="middle" letter-spacing="0.5" stroke="#15161c" stroke-width="0.6">A</text>
<rect x="1060.2" y="1293" width="33.4" height="18.4" fill="#ecedf0" stroke="#5c6072" stroke-width="1.2"/>
<text x="1076.9" y="1307.67" font-size="15.6" fill="#1d1f2c" text-anchor="middle" stroke="#1d1f2c" stroke-width="0.25">S</text>
<line x1="1121.2" y1="1201.2" x2="1125.8" y2="1201.2" stroke="#a0a2ac" stroke-width="1.3"/>
<line x1="1121.2" y1="1215.1" x2="1125.8" y2="1215.1" stroke="#50535f" stroke-width="1.3"/>
<line x1="1121.2" y1="1227.6" x2="1125.8" y2="1227.6" stroke="#a0a2ac" stroke-width="1.3"/>
<line x1="1121.2" y1="1241.7" x2="1125.8" y2="1241.7" stroke="#50535f" stroke-width="1.3"/>
<line x1="1121.2" y1="1255.8" x2="1125.8" y2="1255.8" stroke="#a0a2ac" stroke-width="1.3"/>
<line x1="1121.2" y1="1268.1" x2="1125.8" y2="1268.1" stroke="#50535f" stroke-width="1.3"/>
<line x1="1121.2" y1="1282.2" x2="1125.8" y2="1282.2" stroke="#a0a2ac" stroke-width="1.3"/>
<line x1="1121.2" y1="1294.4" x2="1125.8" y2="1294.4" stroke="#50535f" stroke-width="1.3"/>
<line x1="1121.2" y1="1303.8" x2="1125.8" y2="1303.8" stroke="#a0a2ac" stroke-width="1.3"/>
<line x1="1121.2" y1="1313.1" x2="1125.8" y2="1313.1" stroke="#50535f" stroke-width="1.3"/>
<line x1="1121.2" y1="1320.9" x2="1125.8" y2="1320.9" stroke="#a0a2ac" stroke-width="1.3"/>
<line x1="1121.2" y1="1328.8" x2="1125.8" y2="1328.8" stroke="#a0a2ac" stroke-width="1.3"/>
<line x1="1121.2" y1="1334.9" x2="1125.8" y2="1334.9" stroke="#a0a2ac" stroke-width="1.3"/>
<rect x="1129.3" y="1199" width="19.8" height="139.2" fill="#23262f" rx="3.2"/>
<line x1="1139.1" y1="1200" x2="1139.1" y2="1337.5" stroke="#656978" stroke-width="1"/>
<rect x="1130.3" y="1214.4" width="17.8" height="1.5" fill="#e3e4e9"/>
<path d="M1110.5 1205.6v18.8l16.3 -9.4Z" fill="#14161e"/>
<rect x="1039.1" y="1071.7" width="4.4" height="289.3" fill="#858999"/>
<rect x="1158.6" y="1071.7" width="3" height="289.3" fill="#858999"/>
<rect x="1276.8" y="1071.7" width="3" height="289.3" fill="#858999"/>
<rect x="1161.6" y="1071.7" width="115.2" height="26.3" fill="#9e9e9e"/>
<rect x="1158.6" y="1098" width="121.2" height="3" fill="#858999"/>
<clipPath id="mh1261"><rect x="1161.6" y="1071" width="112.2" height="28"/></clipPath>
<text x="1167.2" y="1090.06" font-size="14.7" fill="#1d1d22" stroke="#1d1d22" stroke-width="0.52" textLength="55.7" lengthAdjust="spacingAndGlyphs" clip-path="url(#mh1261)">B Delay</text>
<rect x="1158.6" y="1186.3" width="121.2" height="3.3" fill="#858999"/>
<rect x="1158.6" y="1347.6" width="121.2" height="3.7" fill="#858999"/>
<rect x="1161.6" y="1351.3" width="115.2" height="9.5" fill="#9e9e9e"/>
<path d="M1181.61 1142.37A18.5 18.5 0 1 1 1204.11 1143.35" fill="none" stroke="#8b8e99" stroke-width="3"/>
<line x1="1194.2" y1="1127.6" x2="1183.8" y2="1145.35" stroke="#8b8e99" stroke-width="3"/>
<text x="1193.3" y="1152.11" font-size="13.4" fill="#1d1f2c" text-anchor="middle">A</text>
<path d="M1232.71 1168.97A18.5 18.5 0 1 1 1255.21 1169.95" fill="none" stroke="#8b8e99" stroke-width="3"/>
<line x1="1245.3" y1="1154.2" x2="1234.9" y2="1171.95" stroke="#8b8e99" stroke-width="3"/>
<text x="1244.4" y="1178.71" font-size="13.4" fill="#1d1f2c" text-anchor="middle">B</text>
<text x="1222.4" y="1122.66" font-size="14.7" fill="#202129" stroke="#202129" stroke-width="0.52" textLength="45" lengthAdjust="spacingAndGlyphs">Sends</text>
<path d="M1185.24 1243.37A18.6 18.6 0 0 1 1190.76 1209.51" fill="none" stroke="#1d1f2c" stroke-width="3"/>
<path d="M1199.44 1209.51A18.6 18.6 0 0 1 1204.96 1243.37" fill="none" stroke="#1d1f2c" stroke-width="3"/>
<line x1="1195.1" y1="1209" x2="1195.1" y2="1227.4" stroke="#1d1f2c" stroke-width="3" stroke-linecap="round"/>
<path d="M1189.4 1199h11.4l-5.7 6.3Z" fill="#1d1f2c"/>
<rect x="1178.4" y="1251.6" width="33.4" height="33.3" fill="#ffb914" stroke="#6b6452" stroke-width="1.2"/>
<text x="1195.1" y="1275.14" font-size="19.6" fill="#15161c" text-anchor="middle" letter-spacing="0.5" stroke="#15161c" stroke-width="0.6">B</text>
<rect x="1178.4" y="1293" width="33.4" height="18.4" fill="#ecedf0" stroke="#5c6072" stroke-width="1.2"/>
<text x="1195.1" y="1307.67" font-size="15.6" fill="#1d1f2c" text-anchor="middle" stroke="#1d1f2c" stroke-width="0.25">S</text>
<line x1="1239.4" y1="1201.2" x2="1244" y2="1201.2" stroke="#a0a2ac" stroke-width="1.3"/>
<line x1="1239.4" y1="1215.1" x2="1244" y2="1215.1" stroke="#50535f" stroke-width="1.3"/>
<line x1="1239.4" y1="1227.6" x2="1244" y2="1227.6" stroke="#a0a2ac" stroke-width="1.3"/>
<line x1="1239.4" y1="1241.7" x2="1244" y2="1241.7" stroke="#50535f" stroke-width="1.3"/>
<line x1="1239.4" y1="1255.8" x2="1244" y2="1255.8" stroke="#a0a2ac" stroke-width="1.3"/>
<line x1="1239.4" y1="1268.1" x2="1244" y2="1268.1" stroke="#50535f" stroke-width="1.3"/>
<line x1="1239.4" y1="1282.2" x2="1244" y2="1282.2" stroke="#a0a2ac" stroke-width="1.3"/>
<line x1="1239.4" y1="1294.4" x2="1244" y2="1294.4" stroke="#50535f" stroke-width="1.3"/>
<line x1="1239.4" y1="1303.8" x2="1244" y2="1303.8" stroke="#a0a2ac" stroke-width="1.3"/>
<line x1="1239.4" y1="1313.1" x2="1244" y2="1313.1" stroke="#50535f" stroke-width="1.3"/>
<line x1="1239.4" y1="1320.9" x2="1244" y2="1320.9" stroke="#a0a2ac" stroke-width="1.3"/>
<line x1="1239.4" y1="1328.8" x2="1244" y2="1328.8" stroke="#a0a2ac" stroke-width="1.3"/>
<line x1="1239.4" y1="1334.9" x2="1244" y2="1334.9" stroke="#a0a2ac" stroke-width="1.3"/>
<rect x="1247.5" y="1199" width="19.8" height="139.2" fill="#23262f" rx="3.2"/>
<line x1="1257.3" y1="1200" x2="1257.3" y2="1337.5" stroke="#656978" stroke-width="1"/>
<rect x="1248.5" y="1214.4" width="17.8" height="1.5" fill="#e3e4e9"/>
<path d="M1228.7 1205.6v18.8l16.3 -9.4Z" fill="#14161e"/>
<rect x="1276.8" y="1071.7" width="3" height="289.3" fill="#858999"/>
<rect x="1469.3" y="1071.7" width="3" height="289.3" fill="#858999"/>
<rect x="1279.8" y="1071.7" width="189.5" height="26.3" fill="#464646"/>
<rect x="1276.8" y="1098" width="195.5" height="3" fill="#858999"/>
<clipPath id="mh1379"><rect x="1279.8" y="1071" width="186.5" height="28"/></clipPath>
<text x="1288" y="1090.06" font-size="14.7" fill="#ececec" stroke="#ececec" stroke-width="0.52" textLength="36.1" lengthAdjust="spacingAndGlyphs" clip-path="url(#mh1379)">Main</text>
<rect x="1276.8" y="1186.3" width="195.5" height="3.3" fill="#858999"/>
<rect x="1276.8" y="1347.6" width="195.5" height="3.7" fill="#858999"/>
<rect x="1279.8" y="1351.3" width="189.5" height="9.5" fill="#464646"/>
<rect x="1461.3" y="1351.3" width="8" height="9.5" fill="#464646" rx="4"/>
<rect x="1469.3" y="1060" width="12.7" height="301" fill="#a0a3ad"/>
<rect x="1464.3" y="1351.3" width="5" height="5" fill="#464646"/>
<text x="1379.6" y="1122.66" font-size="14.7" fill="#202129" stroke="#202129" stroke-width="0.52" textLength="45" lengthAdjust="spacingAndGlyphs">Sends</text>
<line x1="1281.6" y1="1130" x2="1330" y2="1130" stroke="#eeeff2" stroke-width="1.3"/>
<line x1="1281.6" y1="1156.4" x2="1383" y2="1156.4" stroke="#eeeff2" stroke-width="1.3"/>
<rect x="1330.4" y="1120.9" width="38.5" height="18" fill="#ffb914" stroke="#6b6452" stroke-width="1.2"/>
<text x="1349.6" y="1135.06" font-size="15" fill="#15161c" text-anchor="middle" letter-spacing="0.35">Post</text>
<rect x="1383.1" y="1147.5" width="38.5" height="17.7" fill="#ffb914" stroke="#6b6452" stroke-width="1.2"/>
<text x="1402.3" y="1161.56" font-size="15" fill="#15161c" text-anchor="middle" letter-spacing="0.35">Post</text>
<path d="M1336.14 1243.37A18.6 18.6 0 0 1 1341.66 1209.51" fill="none" stroke="#1d1f2c" stroke-width="3"/>
<path d="M1350.34 1209.51A18.6 18.6 0 0 1 1355.86 1243.37" fill="none" stroke="#1d1f2c" stroke-width="3"/>
<line x1="1346" y1="1209" x2="1346" y2="1227.4" stroke="#1d1f2c" stroke-width="3" stroke-linecap="round"/>
<path d="M1340.3 1199h11.4l-5.7 6.3Z" fill="#1d1f2c"/>
<line x1="1389.9" y1="1201.2" x2="1394.5" y2="1201.2" stroke="#a0a2ac" stroke-width="1.3"/>
<line x1="1389.9" y1="1215.1" x2="1394.5" y2="1215.1" stroke="#50535f" stroke-width="1.3"/>
<line x1="1389.9" y1="1227.6" x2="1394.5" y2="1227.6" stroke="#a0a2ac" stroke-width="1.3"/>
<line x1="1389.9" y1="1241.7" x2="1394.5" y2="1241.7" stroke="#50535f" stroke-width="1.3"/>
<line x1="1389.9" y1="1255.8" x2="1394.5" y2="1255.8" stroke="#a0a2ac" stroke-width="1.3"/>
<line x1="1389.9" y1="1268.1" x2="1394.5" y2="1268.1" stroke="#50535f" stroke-width="1.3"/>
<line x1="1389.9" y1="1282.2" x2="1394.5" y2="1282.2" stroke="#a0a2ac" stroke-width="1.3"/>
<line x1="1389.9" y1="1294.4" x2="1394.5" y2="1294.4" stroke="#50535f" stroke-width="1.3"/>
<line x1="1389.9" y1="1303.8" x2="1394.5" y2="1303.8" stroke="#a0a2ac" stroke-width="1.3"/>
<line x1="1389.9" y1="1313.1" x2="1394.5" y2="1313.1" stroke="#50535f" stroke-width="1.3"/>
<line x1="1389.9" y1="1320.9" x2="1394.5" y2="1320.9" stroke="#a0a2ac" stroke-width="1.3"/>
<line x1="1389.9" y1="1328.8" x2="1394.5" y2="1328.8" stroke="#a0a2ac" stroke-width="1.3"/>
<line x1="1389.9" y1="1334.9" x2="1394.5" y2="1334.9" stroke="#a0a2ac" stroke-width="1.3"/>
<rect x="1398" y="1199" width="19.8" height="139.2" fill="#23262f" rx="3.2"/>
<line x1="1407.8" y1="1200" x2="1407.8" y2="1337.5" stroke="#656978" stroke-width="1"/>
<rect x="1399" y="1214.4" width="17.8" height="1.5" fill="#e3e4e9"/>
<path d="M1379.2 1205.6v18.8l16.3 -9.4Z" fill="#14161e"/>
<text x="1423.4" y="1219.18" font-size="13.6" fill="#383b48" letter-spacing="0.4">0</text>
<text x="1423.4" y="1245.38" font-size="13.6" fill="#383b48" letter-spacing="0.4">12</text>
<text x="1423.4" y="1271.68" font-size="13.6" fill="#383b48" letter-spacing="0.4">24</text>
<text x="1423.4" y="1298.08" font-size="13.6" fill="#383b48" letter-spacing="0.4">36</text>
<text x="1423.4" y="1316.88" font-size="13.6" fill="#383b48" letter-spacing="0.4">48</text>
<rect x="1327.35" y="1267.25" width="37" height="17.5" fill="#fbfbfc" stroke="#3f4356" stroke-width="1.3"/>
<text x="1345.9" y="1280.95" font-size="14.4" fill="#1d1f2c" text-anchor="middle" letter-spacing="0.45">Solo</text>
<path d="M1336.2 1329.49A18.5 18.5 0 1 1 1364.1 1317.65" fill="none" stroke="#2d8cf0" stroke-width="3"/>
<path d="M1362.9 1321.32A18.5 18.5 0 0 1 1356.08 1329.32" fill="none" stroke="#1d1f2c" stroke-width="3"/>
<line x1="1346.3" y1="1312.9" x2="1365.2" y2="1318" stroke="#1d1f2c" stroke-width="3"/>
<path d="M1340.8 1331.4v-2.6a5.2 5.2 0 0 1 10.4 0v2.6" fill="none" stroke="#4a4d57" stroke-width="1.6"/>
<rect x="1339.8" y="1328.6" width="3.2" height="5.6" fill="#4a4d57" rx="0.9"/>
<rect x="1349" y="1328.6" width="3.2" height="5.6" fill="#4a4d57" rx="0.9"/>
<rect x="656" y="0" width="5.1" height="112" fill="#000000"/>
<rect x="656.9" y="111" width="3.3" height="192.6" fill="#000000"/>
<rect x="656" y="0" width="69" height="4" fill="#000000"/>
<g transform="translate(679.8 23.9)" fill="none" stroke="#000" stroke-width="6"><circle cx="11.75" cy="11.75" r="8.75" stroke-width="6.1"/><path d="M5.95 33.9L21 13.9" stroke-width="5.8"/></g>
<rect x="1353.8" y="353.9" width="128.2" height="3" fill="#000000"/>
<rect x="1481.6" y="352.9" width="179" height="5" fill="#000000"/>
<rect x="1654" y="289" width="5" height="68.9" fill="#000000"/>
<g transform="translate(1598.8 303)" fill="none" stroke="#000" stroke-width="6"><path d="M1.9 0H11.2V34.5H5V6.3H0V4.2Z" fill="#000" stroke="none"/></g>
<g transform="translate(1619.1 303)" fill="none" stroke="#000" stroke-width="6"><ellipse cx="12" cy="17.4" rx="9.05" ry="14.6" stroke-width="5.9"/></g>
<rect x="1164" y="638" width="318" height="3" fill="#000000"/>
<rect x="1481.6" y="637" width="179" height="4.9" fill="#000000"/>
<rect x="1656" y="573" width="5" height="68.9" fill="#000000"/>
<g transform="translate(1599.9 588.8)" fill="none" stroke="#000" stroke-width="6"><path d="M1.9 0H11.2V34.5H5V6.3H0V4.2Z" fill="#000" stroke="none"/></g>
<g transform="translate(1620 588.8)" fill="none" stroke="#000" stroke-width="6"><path d="M1.9 0H11.2V34.5H5V6.3H0V4.2Z" fill="#000" stroke="none"/></g>
<rect x="1176.7" y="883.6" width="305.3" height="3" fill="#000000"/>
<rect x="1481.6" y="883" width="179" height="4.2" fill="#000000"/>
<rect x="1656" y="818" width="5" height="69.1" fill="#000000"/>
<g transform="translate(1599.9 835.7)" fill="none" stroke="#000" stroke-width="6"><path d="M1.9 0H11.2V34.5H5V6.3H0V4.2Z" fill="#000" stroke="none"/></g>
<g transform="translate(1618 835.6)" fill="none" stroke="#000" stroke-width="6"><path d="M3.5 11.5A8.3 8.3 0 1 1 18.27 16.09L5.92 31.5H23.1" stroke-miterlimit="10"/></g>
<rect x="1171" y="1047.9" width="311" height="3" fill="#000000"/>
<rect x="1481.6" y="1047" width="174.4" height="4.8" fill="#000000"/>
<rect x="1651" y="1047" width="5" height="69" fill="#000000"/>
<g transform="translate(1603 1064.6)" fill="none" stroke="#000" stroke-width="6"><path d="M1.9 0H11.2V34.5H5V6.3H0V4.2Z" fill="#000" stroke="none"/></g>
<g transform="translate(1620.8 1064.5)" fill="none" stroke="#000" stroke-width="6"><path d="M4.3 9.6A7.2 7.2 0 1 1 11.5 16.8H10.2" stroke-width="5.8"/><path d="M10.2 16.7H11.5A8.3 7.4 0 1 1 3.2 24.1" stroke-width="5.9"/></g>
<rect x="1024.4" y="1064.8" width="3.2" height="307.5" fill="#000000"/>
<rect x="1024" y="1371.8" width="4" height="176.2" fill="#000000"/>
<rect x="1024" y="1543.8" width="69" height="4.2" fill="#000000"/>
<g transform="translate(1039 1492.2)" fill="none" stroke="#000" stroke-width="6"><path d="M1.9 0H11.2V34.5H5V6.3H0V4.2Z" fill="#000" stroke="none"/></g>
<g transform="translate(1056.9 1492)" fill="none" stroke="#000" stroke-width="6"><path d="M19.4 0H21.4V24.8H25.1V30.3H21.4V35H15.2V30.3H0V27.4ZM15.2 12.2V24.8H8.3Z" fill="#000" fill-rule="evenodd" stroke="none"/></g>
<rect x="941.1" y="1046" width="3.1" height="327" fill="#000000"/>
<rect x="940.2" y="1371.5" width="4.8" height="158" fill="#000000"/>
<rect x="875.9" y="1524.9" width="69" height="4.6" fill="#000000"/>
<g transform="translate(881.7 1476.2)" fill="none" stroke="#000" stroke-width="6"><path d="M1.9 0H11.2V34.5H5V6.3H0V4.2Z" fill="#000" stroke="none"/></g>
<g transform="translate(898.7 1476)" fill="none" stroke="#000" stroke-width="6"><path d="M23.4 2.8H9.9L7.6 15.8" stroke-width="5.6" stroke-miterlimit="10"/><path d="M7.0 16.8A8.6 8.6 0 1 1 5.0 26.7" stroke-width="5.9"/></g>
<rect x="240.9" y="1328" width="3.4" height="45" fill="#000000"/>
<rect x="240.2" y="1371.5" width="4.8" height="245" fill="#000000"/>
<rect x="240.2" y="1608.7" width="67.8" height="5" fill="#000000"/>
<g transform="translate(254.9 1556.8)" fill="none" stroke="#000" stroke-width="6"><path d="M1.9 0H11.2V34.5H5V6.3H0V4.2Z" fill="#000" stroke="none"/></g>
<g transform="translate(273 1556)" fill="none" stroke="#000" stroke-width="6"><circle cx="11.6" cy="23.4" r="8.75" stroke-width="6.1"/><path d="M17.1 1.4L2.2 21.3" stroke-width="5.8"/></g>
</svg>
</body></html>
